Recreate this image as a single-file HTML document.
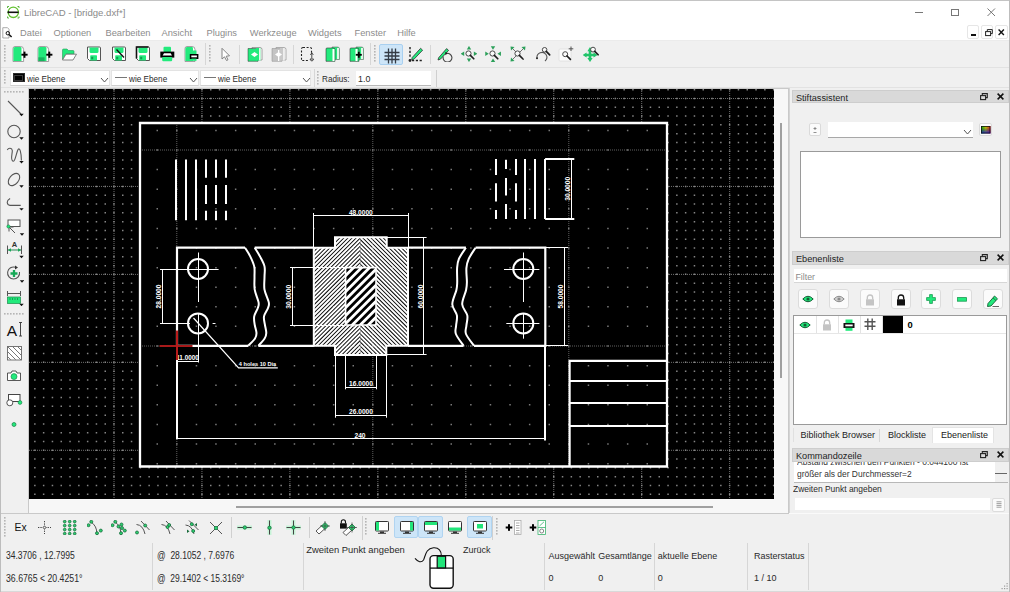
<!DOCTYPE html>
<html><head><meta charset="utf-8"><title>LibreCAD</title>
<style>
*{margin:0;padding:0;box-sizing:border-box}
html,body{width:1010px;height:592px;overflow:hidden;background:#f0f0f0;font-family:"Liberation Sans", sans-serif}
.t{position:absolute;white-space:nowrap}
.r{position:absolute}
svg{position:absolute;overflow:hidden}
</style></head><body>

<div class="r" style="left:0px;top:0px;width:1010px;height:41px;background:#ffffff"></div>
<div class="r" style="left:0px;top:40px;width:1010px;height:1px;background:#ebebeb"></div>
<div class="t" style="left:24.0px;top:8px;font-size:9.6px;line-height:10.723px;color:#8a8a8a;">LibreCAD - [bridge.dxf*]</div>
<div class="t" style="left:20.0px;top:28px;font-size:9.3px;line-height:10.388px;color:#8c8c8c;">Datei</div>
<div class="t" style="left:53.5px;top:28px;font-size:9.3px;line-height:10.388px;color:#8c8c8c;">Optionen</div>
<div class="t" style="left:105.5px;top:28px;font-size:9.3px;line-height:10.388px;color:#8c8c8c;">Bearbeiten</div>
<div class="t" style="left:161.5px;top:28px;font-size:9.3px;line-height:10.388px;color:#8c8c8c;">Ansicht</div>
<div class="t" style="left:206.5px;top:28px;font-size:9.3px;line-height:10.388px;color:#8c8c8c;">Plugins</div>
<div class="t" style="left:249.8px;top:28px;font-size:9.3px;line-height:10.388px;color:#8c8c8c;">Werkzeuge</div>
<div class="t" style="left:308.0px;top:28px;font-size:9.3px;line-height:10.388px;color:#8c8c8c;">Widgets</div>
<div class="t" style="left:354.5px;top:28px;font-size:9.3px;line-height:10.388px;color:#8c8c8c;">Fenster</div>
<div class="t" style="left:397.2px;top:28px;font-size:9.3px;line-height:10.388px;color:#8c8c8c;">Hilfe</div>
<div class="r" style="left:0px;top:41px;width:1010px;height:26px;background:#f0f0f0"></div>
<div class="r" style="left:0px;top:67px;width:1010px;height:1px;background:#e2e2e2"></div>
<div class="r" style="left:0px;top:68px;width:1010px;height:20px;background:#f0f0f0"></div>
<div class="r" style="left:0px;top:87px;width:1010px;height:1px;background:#e2e2e2"></div>
<div class="r" style="left:0px;top:88px;width:28px;height:425px;background:#f0f0f0"></div>
<div class="r" style="left:28px;top:88px;width:1px;height:425px;background:#c9c9c9"></div>
<div class="r" style="left:29px;top:88px;width:760px;height:1px;background:#c9c9c9"></div>
<svg style="left:29px;top:89px;" width="745" height="410" viewBox="29 89 745 410"><rect x="29" y="89" width="745" height="410" fill="#000"/><line x1="114.00" y1="89" x2="114.00" y2="499" stroke="#707070" stroke-width="1" stroke-dasharray="1 1"/><line x1="201.95" y1="89" x2="201.95" y2="499" stroke="#707070" stroke-width="1" stroke-dasharray="1 1"/><line x1="289.90" y1="89" x2="289.90" y2="499" stroke="#707070" stroke-width="1" stroke-dasharray="1 1"/><line x1="377.85" y1="89" x2="377.85" y2="499" stroke="#707070" stroke-width="1" stroke-dasharray="1 1"/><line x1="465.80" y1="89" x2="465.80" y2="499" stroke="#707070" stroke-width="1" stroke-dasharray="1 1"/><line x1="553.75" y1="89" x2="553.75" y2="499" stroke="#707070" stroke-width="1" stroke-dasharray="1 1"/><line x1="641.70" y1="89" x2="641.70" y2="499" stroke="#707070" stroke-width="1" stroke-dasharray="1 1"/><line x1="729.65" y1="89" x2="729.65" y2="499" stroke="#707070" stroke-width="1" stroke-dasharray="1 1"/><line x1="29" y1="98.50" x2="774" y2="98.50" stroke="#707070" stroke-width="1" stroke-dasharray="1 1"/><line x1="29" y1="186.45" x2="774" y2="186.45" stroke="#707070" stroke-width="1" stroke-dasharray="1 1"/><line x1="29" y1="274.40" x2="774" y2="274.40" stroke="#707070" stroke-width="1" stroke-dasharray="1 1"/><line x1="29" y1="362.35" x2="774" y2="362.35" stroke="#707070" stroke-width="1" stroke-dasharray="1 1"/><line x1="29" y1="450.30" x2="774" y2="450.30" stroke="#707070" stroke-width="1" stroke-dasharray="1 1"/><path d="M34.1,89.0h1.5v1.5h-1.5zM34.1,97.8h1.5v1.5h-1.5zM34.1,106.5h1.5v1.5h-1.5zM34.1,115.3h1.5v1.5h-1.5zM34.1,124.1h1.5v1.5h-1.5zM34.1,132.9h1.5v1.5h-1.5zM34.1,141.7h1.5v1.5h-1.5zM34.1,150.5h1.5v1.5h-1.5zM34.1,159.3h1.5v1.5h-1.5zM34.1,168.1h1.5v1.5h-1.5zM34.1,176.9h1.5v1.5h-1.5zM34.1,185.7h1.5v1.5h-1.5zM34.1,194.5h1.5v1.5h-1.5zM34.1,203.3h1.5v1.5h-1.5zM34.1,212.1h1.5v1.5h-1.5zM34.1,220.9h1.5v1.5h-1.5zM34.1,229.7h1.5v1.5h-1.5zM34.1,238.5h1.5v1.5h-1.5zM34.1,247.3h1.5v1.5h-1.5zM34.1,256.1h1.5v1.5h-1.5zM34.1,264.9h1.5v1.5h-1.5zM34.1,273.6h1.5v1.5h-1.5zM34.1,282.4h1.5v1.5h-1.5zM34.1,291.2h1.5v1.5h-1.5zM34.1,300.0h1.5v1.5h-1.5zM34.1,308.8h1.5v1.5h-1.5zM34.1,317.6h1.5v1.5h-1.5zM34.1,326.4h1.5v1.5h-1.5zM34.1,335.2h1.5v1.5h-1.5zM34.1,344.0h1.5v1.5h-1.5zM34.1,352.8h1.5v1.5h-1.5zM34.1,361.6h1.5v1.5h-1.5zM34.1,370.4h1.5v1.5h-1.5zM34.1,379.2h1.5v1.5h-1.5zM34.1,388.0h1.5v1.5h-1.5zM34.1,396.8h1.5v1.5h-1.5zM34.1,405.6h1.5v1.5h-1.5zM34.1,414.4h1.5v1.5h-1.5zM34.1,423.2h1.5v1.5h-1.5zM34.1,432.0h1.5v1.5h-1.5zM34.1,440.8h1.5v1.5h-1.5zM34.1,449.6h1.5v1.5h-1.5zM34.1,458.3h1.5v1.5h-1.5zM34.1,467.1h1.5v1.5h-1.5zM34.1,475.9h1.5v1.5h-1.5zM34.1,484.7h1.5v1.5h-1.5zM34.1,493.5h1.5v1.5h-1.5zM42.9,89.0h1.5v1.5h-1.5zM42.9,97.8h1.5v1.5h-1.5zM42.9,106.5h1.5v1.5h-1.5zM42.9,115.3h1.5v1.5h-1.5zM42.9,124.1h1.5v1.5h-1.5zM42.9,132.9h1.5v1.5h-1.5zM42.9,141.7h1.5v1.5h-1.5zM42.9,150.5h1.5v1.5h-1.5zM42.9,159.3h1.5v1.5h-1.5zM42.9,168.1h1.5v1.5h-1.5zM42.9,176.9h1.5v1.5h-1.5zM42.9,185.7h1.5v1.5h-1.5zM42.9,194.5h1.5v1.5h-1.5zM42.9,203.3h1.5v1.5h-1.5zM42.9,212.1h1.5v1.5h-1.5zM42.9,220.9h1.5v1.5h-1.5zM42.9,229.7h1.5v1.5h-1.5zM42.9,238.5h1.5v1.5h-1.5zM42.9,247.3h1.5v1.5h-1.5zM42.9,256.1h1.5v1.5h-1.5zM42.9,264.9h1.5v1.5h-1.5zM42.9,273.6h1.5v1.5h-1.5zM42.9,282.4h1.5v1.5h-1.5zM42.9,291.2h1.5v1.5h-1.5zM42.9,300.0h1.5v1.5h-1.5zM42.9,308.8h1.5v1.5h-1.5zM42.9,317.6h1.5v1.5h-1.5zM42.9,326.4h1.5v1.5h-1.5zM42.9,335.2h1.5v1.5h-1.5zM42.9,344.0h1.5v1.5h-1.5zM42.9,352.8h1.5v1.5h-1.5zM42.9,361.6h1.5v1.5h-1.5zM42.9,370.4h1.5v1.5h-1.5zM42.9,379.2h1.5v1.5h-1.5zM42.9,388.0h1.5v1.5h-1.5zM42.9,396.8h1.5v1.5h-1.5zM42.9,405.6h1.5v1.5h-1.5zM42.9,414.4h1.5v1.5h-1.5zM42.9,423.2h1.5v1.5h-1.5zM42.9,432.0h1.5v1.5h-1.5zM42.9,440.8h1.5v1.5h-1.5zM42.9,449.6h1.5v1.5h-1.5zM42.9,458.3h1.5v1.5h-1.5zM42.9,467.1h1.5v1.5h-1.5zM42.9,475.9h1.5v1.5h-1.5zM42.9,484.7h1.5v1.5h-1.5zM42.9,493.5h1.5v1.5h-1.5zM51.7,89.0h1.5v1.5h-1.5zM51.7,97.8h1.5v1.5h-1.5zM51.7,106.5h1.5v1.5h-1.5zM51.7,115.3h1.5v1.5h-1.5zM51.7,124.1h1.5v1.5h-1.5zM51.7,132.9h1.5v1.5h-1.5zM51.7,141.7h1.5v1.5h-1.5zM51.7,150.5h1.5v1.5h-1.5zM51.7,159.3h1.5v1.5h-1.5zM51.7,168.1h1.5v1.5h-1.5zM51.7,176.9h1.5v1.5h-1.5zM51.7,185.7h1.5v1.5h-1.5zM51.7,194.5h1.5v1.5h-1.5zM51.7,203.3h1.5v1.5h-1.5zM51.7,212.1h1.5v1.5h-1.5zM51.7,220.9h1.5v1.5h-1.5zM51.7,229.7h1.5v1.5h-1.5zM51.7,238.5h1.5v1.5h-1.5zM51.7,247.3h1.5v1.5h-1.5zM51.7,256.1h1.5v1.5h-1.5zM51.7,264.9h1.5v1.5h-1.5zM51.7,273.6h1.5v1.5h-1.5zM51.7,282.4h1.5v1.5h-1.5zM51.7,291.2h1.5v1.5h-1.5zM51.7,300.0h1.5v1.5h-1.5zM51.7,308.8h1.5v1.5h-1.5zM51.7,317.6h1.5v1.5h-1.5zM51.7,326.4h1.5v1.5h-1.5zM51.7,335.2h1.5v1.5h-1.5zM51.7,344.0h1.5v1.5h-1.5zM51.7,352.8h1.5v1.5h-1.5zM51.7,361.6h1.5v1.5h-1.5zM51.7,370.4h1.5v1.5h-1.5zM51.7,379.2h1.5v1.5h-1.5zM51.7,388.0h1.5v1.5h-1.5zM51.7,396.8h1.5v1.5h-1.5zM51.7,405.6h1.5v1.5h-1.5zM51.7,414.4h1.5v1.5h-1.5zM51.7,423.2h1.5v1.5h-1.5zM51.7,432.0h1.5v1.5h-1.5zM51.7,440.8h1.5v1.5h-1.5zM51.7,449.6h1.5v1.5h-1.5zM51.7,458.3h1.5v1.5h-1.5zM51.7,467.1h1.5v1.5h-1.5zM51.7,475.9h1.5v1.5h-1.5zM51.7,484.7h1.5v1.5h-1.5zM51.7,493.5h1.5v1.5h-1.5zM60.5,89.0h1.5v1.5h-1.5zM60.5,97.8h1.5v1.5h-1.5zM60.5,106.5h1.5v1.5h-1.5zM60.5,115.3h1.5v1.5h-1.5zM60.5,124.1h1.5v1.5h-1.5zM60.5,132.9h1.5v1.5h-1.5zM60.5,141.7h1.5v1.5h-1.5zM60.5,150.5h1.5v1.5h-1.5zM60.5,159.3h1.5v1.5h-1.5zM60.5,168.1h1.5v1.5h-1.5zM60.5,176.9h1.5v1.5h-1.5zM60.5,185.7h1.5v1.5h-1.5zM60.5,194.5h1.5v1.5h-1.5zM60.5,203.3h1.5v1.5h-1.5zM60.5,212.1h1.5v1.5h-1.5zM60.5,220.9h1.5v1.5h-1.5zM60.5,229.7h1.5v1.5h-1.5zM60.5,238.5h1.5v1.5h-1.5zM60.5,247.3h1.5v1.5h-1.5zM60.5,256.1h1.5v1.5h-1.5zM60.5,264.9h1.5v1.5h-1.5zM60.5,273.6h1.5v1.5h-1.5zM60.5,282.4h1.5v1.5h-1.5zM60.5,291.2h1.5v1.5h-1.5zM60.5,300.0h1.5v1.5h-1.5zM60.5,308.8h1.5v1.5h-1.5zM60.5,317.6h1.5v1.5h-1.5zM60.5,326.4h1.5v1.5h-1.5zM60.5,335.2h1.5v1.5h-1.5zM60.5,344.0h1.5v1.5h-1.5zM60.5,352.8h1.5v1.5h-1.5zM60.5,361.6h1.5v1.5h-1.5zM60.5,370.4h1.5v1.5h-1.5zM60.5,379.2h1.5v1.5h-1.5zM60.5,388.0h1.5v1.5h-1.5zM60.5,396.8h1.5v1.5h-1.5zM60.5,405.6h1.5v1.5h-1.5zM60.5,414.4h1.5v1.5h-1.5zM60.5,423.2h1.5v1.5h-1.5zM60.5,432.0h1.5v1.5h-1.5zM60.5,440.8h1.5v1.5h-1.5zM60.5,449.6h1.5v1.5h-1.5zM60.5,458.3h1.5v1.5h-1.5zM60.5,467.1h1.5v1.5h-1.5zM60.5,475.9h1.5v1.5h-1.5zM60.5,484.7h1.5v1.5h-1.5zM60.5,493.5h1.5v1.5h-1.5zM69.3,89.0h1.5v1.5h-1.5zM69.3,97.8h1.5v1.5h-1.5zM69.3,106.5h1.5v1.5h-1.5zM69.3,115.3h1.5v1.5h-1.5zM69.3,124.1h1.5v1.5h-1.5zM69.3,132.9h1.5v1.5h-1.5zM69.3,141.7h1.5v1.5h-1.5zM69.3,150.5h1.5v1.5h-1.5zM69.3,159.3h1.5v1.5h-1.5zM69.3,168.1h1.5v1.5h-1.5zM69.3,176.9h1.5v1.5h-1.5zM69.3,185.7h1.5v1.5h-1.5zM69.3,194.5h1.5v1.5h-1.5zM69.3,203.3h1.5v1.5h-1.5zM69.3,212.1h1.5v1.5h-1.5zM69.3,220.9h1.5v1.5h-1.5zM69.3,229.7h1.5v1.5h-1.5zM69.3,238.5h1.5v1.5h-1.5zM69.3,247.3h1.5v1.5h-1.5zM69.3,256.1h1.5v1.5h-1.5zM69.3,264.9h1.5v1.5h-1.5zM69.3,273.6h1.5v1.5h-1.5zM69.3,282.4h1.5v1.5h-1.5zM69.3,291.2h1.5v1.5h-1.5zM69.3,300.0h1.5v1.5h-1.5zM69.3,308.8h1.5v1.5h-1.5zM69.3,317.6h1.5v1.5h-1.5zM69.3,326.4h1.5v1.5h-1.5zM69.3,335.2h1.5v1.5h-1.5zM69.3,344.0h1.5v1.5h-1.5zM69.3,352.8h1.5v1.5h-1.5zM69.3,361.6h1.5v1.5h-1.5zM69.3,370.4h1.5v1.5h-1.5zM69.3,379.2h1.5v1.5h-1.5zM69.3,388.0h1.5v1.5h-1.5zM69.3,396.8h1.5v1.5h-1.5zM69.3,405.6h1.5v1.5h-1.5zM69.3,414.4h1.5v1.5h-1.5zM69.3,423.2h1.5v1.5h-1.5zM69.3,432.0h1.5v1.5h-1.5zM69.3,440.8h1.5v1.5h-1.5zM69.3,449.6h1.5v1.5h-1.5zM69.3,458.3h1.5v1.5h-1.5zM69.3,467.1h1.5v1.5h-1.5zM69.3,475.9h1.5v1.5h-1.5zM69.3,484.7h1.5v1.5h-1.5zM69.3,493.5h1.5v1.5h-1.5zM78.1,89.0h1.5v1.5h-1.5zM78.1,97.8h1.5v1.5h-1.5zM78.1,106.5h1.5v1.5h-1.5zM78.1,115.3h1.5v1.5h-1.5zM78.1,124.1h1.5v1.5h-1.5zM78.1,132.9h1.5v1.5h-1.5zM78.1,141.7h1.5v1.5h-1.5zM78.1,150.5h1.5v1.5h-1.5zM78.1,159.3h1.5v1.5h-1.5zM78.1,168.1h1.5v1.5h-1.5zM78.1,176.9h1.5v1.5h-1.5zM78.1,185.7h1.5v1.5h-1.5zM78.1,194.5h1.5v1.5h-1.5zM78.1,203.3h1.5v1.5h-1.5zM78.1,212.1h1.5v1.5h-1.5zM78.1,220.9h1.5v1.5h-1.5zM78.1,229.7h1.5v1.5h-1.5zM78.1,238.5h1.5v1.5h-1.5zM78.1,247.3h1.5v1.5h-1.5zM78.1,256.1h1.5v1.5h-1.5zM78.1,264.9h1.5v1.5h-1.5zM78.1,273.6h1.5v1.5h-1.5zM78.1,282.4h1.5v1.5h-1.5zM78.1,291.2h1.5v1.5h-1.5zM78.1,300.0h1.5v1.5h-1.5zM78.1,308.8h1.5v1.5h-1.5zM78.1,317.6h1.5v1.5h-1.5zM78.1,326.4h1.5v1.5h-1.5zM78.1,335.2h1.5v1.5h-1.5zM78.1,344.0h1.5v1.5h-1.5zM78.1,352.8h1.5v1.5h-1.5zM78.1,361.6h1.5v1.5h-1.5zM78.1,370.4h1.5v1.5h-1.5zM78.1,379.2h1.5v1.5h-1.5zM78.1,388.0h1.5v1.5h-1.5zM78.1,396.8h1.5v1.5h-1.5zM78.1,405.6h1.5v1.5h-1.5zM78.1,414.4h1.5v1.5h-1.5zM78.1,423.2h1.5v1.5h-1.5zM78.1,432.0h1.5v1.5h-1.5zM78.1,440.8h1.5v1.5h-1.5zM78.1,449.6h1.5v1.5h-1.5zM78.1,458.3h1.5v1.5h-1.5zM78.1,467.1h1.5v1.5h-1.5zM78.1,475.9h1.5v1.5h-1.5zM78.1,484.7h1.5v1.5h-1.5zM78.1,493.5h1.5v1.5h-1.5zM86.9,89.0h1.5v1.5h-1.5zM86.9,97.8h1.5v1.5h-1.5zM86.9,106.5h1.5v1.5h-1.5zM86.9,115.3h1.5v1.5h-1.5zM86.9,124.1h1.5v1.5h-1.5zM86.9,132.9h1.5v1.5h-1.5zM86.9,141.7h1.5v1.5h-1.5zM86.9,150.5h1.5v1.5h-1.5zM86.9,159.3h1.5v1.5h-1.5zM86.9,168.1h1.5v1.5h-1.5zM86.9,176.9h1.5v1.5h-1.5zM86.9,185.7h1.5v1.5h-1.5zM86.9,194.5h1.5v1.5h-1.5zM86.9,203.3h1.5v1.5h-1.5zM86.9,212.1h1.5v1.5h-1.5zM86.9,220.9h1.5v1.5h-1.5zM86.9,229.7h1.5v1.5h-1.5zM86.9,238.5h1.5v1.5h-1.5zM86.9,247.3h1.5v1.5h-1.5zM86.9,256.1h1.5v1.5h-1.5zM86.9,264.9h1.5v1.5h-1.5zM86.9,273.6h1.5v1.5h-1.5zM86.9,282.4h1.5v1.5h-1.5zM86.9,291.2h1.5v1.5h-1.5zM86.9,300.0h1.5v1.5h-1.5zM86.9,308.8h1.5v1.5h-1.5zM86.9,317.6h1.5v1.5h-1.5zM86.9,326.4h1.5v1.5h-1.5zM86.9,335.2h1.5v1.5h-1.5zM86.9,344.0h1.5v1.5h-1.5zM86.9,352.8h1.5v1.5h-1.5zM86.9,361.6h1.5v1.5h-1.5zM86.9,370.4h1.5v1.5h-1.5zM86.9,379.2h1.5v1.5h-1.5zM86.9,388.0h1.5v1.5h-1.5zM86.9,396.8h1.5v1.5h-1.5zM86.9,405.6h1.5v1.5h-1.5zM86.9,414.4h1.5v1.5h-1.5zM86.9,423.2h1.5v1.5h-1.5zM86.9,432.0h1.5v1.5h-1.5zM86.9,440.8h1.5v1.5h-1.5zM86.9,449.6h1.5v1.5h-1.5zM86.9,458.3h1.5v1.5h-1.5zM86.9,467.1h1.5v1.5h-1.5zM86.9,475.9h1.5v1.5h-1.5zM86.9,484.7h1.5v1.5h-1.5zM86.9,493.5h1.5v1.5h-1.5zM95.7,89.0h1.5v1.5h-1.5zM95.7,97.8h1.5v1.5h-1.5zM95.7,106.5h1.5v1.5h-1.5zM95.7,115.3h1.5v1.5h-1.5zM95.7,124.1h1.5v1.5h-1.5zM95.7,132.9h1.5v1.5h-1.5zM95.7,141.7h1.5v1.5h-1.5zM95.7,150.5h1.5v1.5h-1.5zM95.7,159.3h1.5v1.5h-1.5zM95.7,168.1h1.5v1.5h-1.5zM95.7,176.9h1.5v1.5h-1.5zM95.7,185.7h1.5v1.5h-1.5zM95.7,194.5h1.5v1.5h-1.5zM95.7,203.3h1.5v1.5h-1.5zM95.7,212.1h1.5v1.5h-1.5zM95.7,220.9h1.5v1.5h-1.5zM95.7,229.7h1.5v1.5h-1.5zM95.7,238.5h1.5v1.5h-1.5zM95.7,247.3h1.5v1.5h-1.5zM95.7,256.1h1.5v1.5h-1.5zM95.7,264.9h1.5v1.5h-1.5zM95.7,273.6h1.5v1.5h-1.5zM95.7,282.4h1.5v1.5h-1.5zM95.7,291.2h1.5v1.5h-1.5zM95.7,300.0h1.5v1.5h-1.5zM95.7,308.8h1.5v1.5h-1.5zM95.7,317.6h1.5v1.5h-1.5zM95.7,326.4h1.5v1.5h-1.5zM95.7,335.2h1.5v1.5h-1.5zM95.7,344.0h1.5v1.5h-1.5zM95.7,352.8h1.5v1.5h-1.5zM95.7,361.6h1.5v1.5h-1.5zM95.7,370.4h1.5v1.5h-1.5zM95.7,379.2h1.5v1.5h-1.5zM95.7,388.0h1.5v1.5h-1.5zM95.7,396.8h1.5v1.5h-1.5zM95.7,405.6h1.5v1.5h-1.5zM95.7,414.4h1.5v1.5h-1.5zM95.7,423.2h1.5v1.5h-1.5zM95.7,432.0h1.5v1.5h-1.5zM95.7,440.8h1.5v1.5h-1.5zM95.7,449.6h1.5v1.5h-1.5zM95.7,458.3h1.5v1.5h-1.5zM95.7,467.1h1.5v1.5h-1.5zM95.7,475.9h1.5v1.5h-1.5zM95.7,484.7h1.5v1.5h-1.5zM95.7,493.5h1.5v1.5h-1.5zM104.5,89.0h1.5v1.5h-1.5zM104.5,97.8h1.5v1.5h-1.5zM104.5,106.5h1.5v1.5h-1.5zM104.5,115.3h1.5v1.5h-1.5zM104.5,124.1h1.5v1.5h-1.5zM104.5,132.9h1.5v1.5h-1.5zM104.5,141.7h1.5v1.5h-1.5zM104.5,150.5h1.5v1.5h-1.5zM104.5,159.3h1.5v1.5h-1.5zM104.5,168.1h1.5v1.5h-1.5zM104.5,176.9h1.5v1.5h-1.5zM104.5,185.7h1.5v1.5h-1.5zM104.5,194.5h1.5v1.5h-1.5zM104.5,203.3h1.5v1.5h-1.5zM104.5,212.1h1.5v1.5h-1.5zM104.5,220.9h1.5v1.5h-1.5zM104.5,229.7h1.5v1.5h-1.5zM104.5,238.5h1.5v1.5h-1.5zM104.5,247.3h1.5v1.5h-1.5zM104.5,256.1h1.5v1.5h-1.5zM104.5,264.9h1.5v1.5h-1.5zM104.5,273.6h1.5v1.5h-1.5zM104.5,282.4h1.5v1.5h-1.5zM104.5,291.2h1.5v1.5h-1.5zM104.5,300.0h1.5v1.5h-1.5zM104.5,308.8h1.5v1.5h-1.5zM104.5,317.6h1.5v1.5h-1.5zM104.5,326.4h1.5v1.5h-1.5zM104.5,335.2h1.5v1.5h-1.5zM104.5,344.0h1.5v1.5h-1.5zM104.5,352.8h1.5v1.5h-1.5zM104.5,361.6h1.5v1.5h-1.5zM104.5,370.4h1.5v1.5h-1.5zM104.5,379.2h1.5v1.5h-1.5zM104.5,388.0h1.5v1.5h-1.5zM104.5,396.8h1.5v1.5h-1.5zM104.5,405.6h1.5v1.5h-1.5zM104.5,414.4h1.5v1.5h-1.5zM104.5,423.2h1.5v1.5h-1.5zM104.5,432.0h1.5v1.5h-1.5zM104.5,440.8h1.5v1.5h-1.5zM104.5,449.6h1.5v1.5h-1.5zM104.5,458.3h1.5v1.5h-1.5zM104.5,467.1h1.5v1.5h-1.5zM104.5,475.9h1.5v1.5h-1.5zM104.5,484.7h1.5v1.5h-1.5zM104.5,493.5h1.5v1.5h-1.5zM113.2,89.0h1.5v1.5h-1.5zM113.2,97.8h1.5v1.5h-1.5zM113.2,106.5h1.5v1.5h-1.5zM113.2,115.3h1.5v1.5h-1.5zM113.2,124.1h1.5v1.5h-1.5zM113.2,132.9h1.5v1.5h-1.5zM113.2,141.7h1.5v1.5h-1.5zM113.2,150.5h1.5v1.5h-1.5zM113.2,159.3h1.5v1.5h-1.5zM113.2,168.1h1.5v1.5h-1.5zM113.2,176.9h1.5v1.5h-1.5zM113.2,185.7h1.5v1.5h-1.5zM113.2,194.5h1.5v1.5h-1.5zM113.2,203.3h1.5v1.5h-1.5zM113.2,212.1h1.5v1.5h-1.5zM113.2,220.9h1.5v1.5h-1.5zM113.2,229.7h1.5v1.5h-1.5zM113.2,238.5h1.5v1.5h-1.5zM113.2,247.3h1.5v1.5h-1.5zM113.2,256.1h1.5v1.5h-1.5zM113.2,264.9h1.5v1.5h-1.5zM113.2,273.6h1.5v1.5h-1.5zM113.2,282.4h1.5v1.5h-1.5zM113.2,291.2h1.5v1.5h-1.5zM113.2,300.0h1.5v1.5h-1.5zM113.2,308.8h1.5v1.5h-1.5zM113.2,317.6h1.5v1.5h-1.5zM113.2,326.4h1.5v1.5h-1.5zM113.2,335.2h1.5v1.5h-1.5zM113.2,344.0h1.5v1.5h-1.5zM113.2,352.8h1.5v1.5h-1.5zM113.2,361.6h1.5v1.5h-1.5zM113.2,370.4h1.5v1.5h-1.5zM113.2,379.2h1.5v1.5h-1.5zM113.2,388.0h1.5v1.5h-1.5zM113.2,396.8h1.5v1.5h-1.5zM113.2,405.6h1.5v1.5h-1.5zM113.2,414.4h1.5v1.5h-1.5zM113.2,423.2h1.5v1.5h-1.5zM113.2,432.0h1.5v1.5h-1.5zM113.2,440.8h1.5v1.5h-1.5zM113.2,449.6h1.5v1.5h-1.5zM113.2,458.3h1.5v1.5h-1.5zM113.2,467.1h1.5v1.5h-1.5zM113.2,475.9h1.5v1.5h-1.5zM113.2,484.7h1.5v1.5h-1.5zM113.2,493.5h1.5v1.5h-1.5zM122.0,89.0h1.5v1.5h-1.5zM122.0,97.8h1.5v1.5h-1.5zM122.0,106.5h1.5v1.5h-1.5zM122.0,115.3h1.5v1.5h-1.5zM122.0,124.1h1.5v1.5h-1.5zM122.0,132.9h1.5v1.5h-1.5zM122.0,141.7h1.5v1.5h-1.5zM122.0,150.5h1.5v1.5h-1.5zM122.0,159.3h1.5v1.5h-1.5zM122.0,168.1h1.5v1.5h-1.5zM122.0,176.9h1.5v1.5h-1.5zM122.0,185.7h1.5v1.5h-1.5zM122.0,194.5h1.5v1.5h-1.5zM122.0,203.3h1.5v1.5h-1.5zM122.0,212.1h1.5v1.5h-1.5zM122.0,220.9h1.5v1.5h-1.5zM122.0,229.7h1.5v1.5h-1.5zM122.0,238.5h1.5v1.5h-1.5zM122.0,247.3h1.5v1.5h-1.5zM122.0,256.1h1.5v1.5h-1.5zM122.0,264.9h1.5v1.5h-1.5zM122.0,273.6h1.5v1.5h-1.5zM122.0,282.4h1.5v1.5h-1.5zM122.0,291.2h1.5v1.5h-1.5zM122.0,300.0h1.5v1.5h-1.5zM122.0,308.8h1.5v1.5h-1.5zM122.0,317.6h1.5v1.5h-1.5zM122.0,326.4h1.5v1.5h-1.5zM122.0,335.2h1.5v1.5h-1.5zM122.0,344.0h1.5v1.5h-1.5zM122.0,352.8h1.5v1.5h-1.5zM122.0,361.6h1.5v1.5h-1.5zM122.0,370.4h1.5v1.5h-1.5zM122.0,379.2h1.5v1.5h-1.5zM122.0,388.0h1.5v1.5h-1.5zM122.0,396.8h1.5v1.5h-1.5zM122.0,405.6h1.5v1.5h-1.5zM122.0,414.4h1.5v1.5h-1.5zM122.0,423.2h1.5v1.5h-1.5zM122.0,432.0h1.5v1.5h-1.5zM122.0,440.8h1.5v1.5h-1.5zM122.0,449.6h1.5v1.5h-1.5zM122.0,458.3h1.5v1.5h-1.5zM122.0,467.1h1.5v1.5h-1.5zM122.0,475.9h1.5v1.5h-1.5zM122.0,484.7h1.5v1.5h-1.5zM122.0,493.5h1.5v1.5h-1.5zM130.8,89.0h1.5v1.5h-1.5zM130.8,97.8h1.5v1.5h-1.5zM130.8,106.5h1.5v1.5h-1.5zM130.8,115.3h1.5v1.5h-1.5zM130.8,124.1h1.5v1.5h-1.5zM130.8,132.9h1.5v1.5h-1.5zM130.8,141.7h1.5v1.5h-1.5zM130.8,150.5h1.5v1.5h-1.5zM130.8,159.3h1.5v1.5h-1.5zM130.8,168.1h1.5v1.5h-1.5zM130.8,176.9h1.5v1.5h-1.5zM130.8,185.7h1.5v1.5h-1.5zM130.8,194.5h1.5v1.5h-1.5zM130.8,203.3h1.5v1.5h-1.5zM130.8,212.1h1.5v1.5h-1.5zM130.8,220.9h1.5v1.5h-1.5zM130.8,229.7h1.5v1.5h-1.5zM130.8,238.5h1.5v1.5h-1.5zM130.8,247.3h1.5v1.5h-1.5zM130.8,256.1h1.5v1.5h-1.5zM130.8,264.9h1.5v1.5h-1.5zM130.8,273.6h1.5v1.5h-1.5zM130.8,282.4h1.5v1.5h-1.5zM130.8,291.2h1.5v1.5h-1.5zM130.8,300.0h1.5v1.5h-1.5zM130.8,308.8h1.5v1.5h-1.5zM130.8,317.6h1.5v1.5h-1.5zM130.8,326.4h1.5v1.5h-1.5zM130.8,335.2h1.5v1.5h-1.5zM130.8,344.0h1.5v1.5h-1.5zM130.8,352.8h1.5v1.5h-1.5zM130.8,361.6h1.5v1.5h-1.5zM130.8,370.4h1.5v1.5h-1.5zM130.8,379.2h1.5v1.5h-1.5zM130.8,388.0h1.5v1.5h-1.5zM130.8,396.8h1.5v1.5h-1.5zM130.8,405.6h1.5v1.5h-1.5zM130.8,414.4h1.5v1.5h-1.5zM130.8,423.2h1.5v1.5h-1.5zM130.8,432.0h1.5v1.5h-1.5zM130.8,440.8h1.5v1.5h-1.5zM130.8,449.6h1.5v1.5h-1.5zM130.8,458.3h1.5v1.5h-1.5zM130.8,467.1h1.5v1.5h-1.5zM130.8,475.9h1.5v1.5h-1.5zM130.8,484.7h1.5v1.5h-1.5zM130.8,493.5h1.5v1.5h-1.5zM139.6,89.0h1.5v1.5h-1.5zM139.6,97.8h1.5v1.5h-1.5zM139.6,106.5h1.5v1.5h-1.5zM139.6,115.3h1.5v1.5h-1.5zM139.6,124.1h1.5v1.5h-1.5zM139.6,132.9h1.5v1.5h-1.5zM139.6,141.7h1.5v1.5h-1.5zM139.6,150.5h1.5v1.5h-1.5zM139.6,159.3h1.5v1.5h-1.5zM139.6,168.1h1.5v1.5h-1.5zM139.6,176.9h1.5v1.5h-1.5zM139.6,185.7h1.5v1.5h-1.5zM139.6,194.5h1.5v1.5h-1.5zM139.6,203.3h1.5v1.5h-1.5zM139.6,212.1h1.5v1.5h-1.5zM139.6,220.9h1.5v1.5h-1.5zM139.6,229.7h1.5v1.5h-1.5zM139.6,238.5h1.5v1.5h-1.5zM139.6,247.3h1.5v1.5h-1.5zM139.6,256.1h1.5v1.5h-1.5zM139.6,264.9h1.5v1.5h-1.5zM139.6,273.6h1.5v1.5h-1.5zM139.6,282.4h1.5v1.5h-1.5zM139.6,291.2h1.5v1.5h-1.5zM139.6,300.0h1.5v1.5h-1.5zM139.6,308.8h1.5v1.5h-1.5zM139.6,317.6h1.5v1.5h-1.5zM139.6,326.4h1.5v1.5h-1.5zM139.6,335.2h1.5v1.5h-1.5zM139.6,344.0h1.5v1.5h-1.5zM139.6,352.8h1.5v1.5h-1.5zM139.6,361.6h1.5v1.5h-1.5zM139.6,370.4h1.5v1.5h-1.5zM139.6,379.2h1.5v1.5h-1.5zM139.6,388.0h1.5v1.5h-1.5zM139.6,396.8h1.5v1.5h-1.5zM139.6,405.6h1.5v1.5h-1.5zM139.6,414.4h1.5v1.5h-1.5zM139.6,423.2h1.5v1.5h-1.5zM139.6,432.0h1.5v1.5h-1.5zM139.6,440.8h1.5v1.5h-1.5zM139.6,449.6h1.5v1.5h-1.5zM139.6,458.3h1.5v1.5h-1.5zM139.6,467.1h1.5v1.5h-1.5zM139.6,475.9h1.5v1.5h-1.5zM139.6,484.7h1.5v1.5h-1.5zM139.6,493.5h1.5v1.5h-1.5zM148.4,89.0h1.5v1.5h-1.5zM148.4,97.8h1.5v1.5h-1.5zM148.4,106.5h1.5v1.5h-1.5zM148.4,115.3h1.5v1.5h-1.5zM148.4,124.1h1.5v1.5h-1.5zM148.4,132.9h1.5v1.5h-1.5zM148.4,141.7h1.5v1.5h-1.5zM148.4,150.5h1.5v1.5h-1.5zM148.4,159.3h1.5v1.5h-1.5zM148.4,168.1h1.5v1.5h-1.5zM148.4,176.9h1.5v1.5h-1.5zM148.4,185.7h1.5v1.5h-1.5zM148.4,194.5h1.5v1.5h-1.5zM148.4,203.3h1.5v1.5h-1.5zM148.4,212.1h1.5v1.5h-1.5zM148.4,220.9h1.5v1.5h-1.5zM148.4,229.7h1.5v1.5h-1.5zM148.4,238.5h1.5v1.5h-1.5zM148.4,247.3h1.5v1.5h-1.5zM148.4,256.1h1.5v1.5h-1.5zM148.4,264.9h1.5v1.5h-1.5zM148.4,273.6h1.5v1.5h-1.5zM148.4,282.4h1.5v1.5h-1.5zM148.4,291.2h1.5v1.5h-1.5zM148.4,300.0h1.5v1.5h-1.5zM148.4,308.8h1.5v1.5h-1.5zM148.4,317.6h1.5v1.5h-1.5zM148.4,326.4h1.5v1.5h-1.5zM148.4,335.2h1.5v1.5h-1.5zM148.4,344.0h1.5v1.5h-1.5zM148.4,352.8h1.5v1.5h-1.5zM148.4,361.6h1.5v1.5h-1.5zM148.4,370.4h1.5v1.5h-1.5zM148.4,379.2h1.5v1.5h-1.5zM148.4,388.0h1.5v1.5h-1.5zM148.4,396.8h1.5v1.5h-1.5zM148.4,405.6h1.5v1.5h-1.5zM148.4,414.4h1.5v1.5h-1.5zM148.4,423.2h1.5v1.5h-1.5zM148.4,432.0h1.5v1.5h-1.5zM148.4,440.8h1.5v1.5h-1.5zM148.4,449.6h1.5v1.5h-1.5zM148.4,458.3h1.5v1.5h-1.5zM148.4,467.1h1.5v1.5h-1.5zM148.4,475.9h1.5v1.5h-1.5zM148.4,484.7h1.5v1.5h-1.5zM148.4,493.5h1.5v1.5h-1.5zM157.2,89.0h1.5v1.5h-1.5zM157.2,97.8h1.5v1.5h-1.5zM157.2,106.5h1.5v1.5h-1.5zM157.2,115.3h1.5v1.5h-1.5zM157.2,124.1h1.5v1.5h-1.5zM157.2,132.9h1.5v1.5h-1.5zM157.2,141.7h1.5v1.5h-1.5zM157.2,150.5h1.5v1.5h-1.5zM157.2,159.3h1.5v1.5h-1.5zM157.2,168.1h1.5v1.5h-1.5zM157.2,176.9h1.5v1.5h-1.5zM157.2,185.7h1.5v1.5h-1.5zM157.2,194.5h1.5v1.5h-1.5zM157.2,203.3h1.5v1.5h-1.5zM157.2,212.1h1.5v1.5h-1.5zM157.2,220.9h1.5v1.5h-1.5zM157.2,229.7h1.5v1.5h-1.5zM157.2,238.5h1.5v1.5h-1.5zM157.2,247.3h1.5v1.5h-1.5zM157.2,256.1h1.5v1.5h-1.5zM157.2,264.9h1.5v1.5h-1.5zM157.2,273.6h1.5v1.5h-1.5zM157.2,282.4h1.5v1.5h-1.5zM157.2,291.2h1.5v1.5h-1.5zM157.2,300.0h1.5v1.5h-1.5zM157.2,308.8h1.5v1.5h-1.5zM157.2,317.6h1.5v1.5h-1.5zM157.2,326.4h1.5v1.5h-1.5zM157.2,335.2h1.5v1.5h-1.5zM157.2,344.0h1.5v1.5h-1.5zM157.2,352.8h1.5v1.5h-1.5zM157.2,361.6h1.5v1.5h-1.5zM157.2,370.4h1.5v1.5h-1.5zM157.2,379.2h1.5v1.5h-1.5zM157.2,388.0h1.5v1.5h-1.5zM157.2,396.8h1.5v1.5h-1.5zM157.2,405.6h1.5v1.5h-1.5zM157.2,414.4h1.5v1.5h-1.5zM157.2,423.2h1.5v1.5h-1.5zM157.2,432.0h1.5v1.5h-1.5zM157.2,440.8h1.5v1.5h-1.5zM157.2,449.6h1.5v1.5h-1.5zM157.2,458.3h1.5v1.5h-1.5zM157.2,467.1h1.5v1.5h-1.5zM157.2,475.9h1.5v1.5h-1.5zM157.2,484.7h1.5v1.5h-1.5zM157.2,493.5h1.5v1.5h-1.5zM166.0,89.0h1.5v1.5h-1.5zM166.0,97.8h1.5v1.5h-1.5zM166.0,106.5h1.5v1.5h-1.5zM166.0,115.3h1.5v1.5h-1.5zM166.0,124.1h1.5v1.5h-1.5zM166.0,132.9h1.5v1.5h-1.5zM166.0,141.7h1.5v1.5h-1.5zM166.0,150.5h1.5v1.5h-1.5zM166.0,159.3h1.5v1.5h-1.5zM166.0,168.1h1.5v1.5h-1.5zM166.0,176.9h1.5v1.5h-1.5zM166.0,185.7h1.5v1.5h-1.5zM166.0,194.5h1.5v1.5h-1.5zM166.0,203.3h1.5v1.5h-1.5zM166.0,212.1h1.5v1.5h-1.5zM166.0,220.9h1.5v1.5h-1.5zM166.0,229.7h1.5v1.5h-1.5zM166.0,238.5h1.5v1.5h-1.5zM166.0,247.3h1.5v1.5h-1.5zM166.0,256.1h1.5v1.5h-1.5zM166.0,264.9h1.5v1.5h-1.5zM166.0,273.6h1.5v1.5h-1.5zM166.0,282.4h1.5v1.5h-1.5zM166.0,291.2h1.5v1.5h-1.5zM166.0,300.0h1.5v1.5h-1.5zM166.0,308.8h1.5v1.5h-1.5zM166.0,317.6h1.5v1.5h-1.5zM166.0,326.4h1.5v1.5h-1.5zM166.0,335.2h1.5v1.5h-1.5zM166.0,344.0h1.5v1.5h-1.5zM166.0,352.8h1.5v1.5h-1.5zM166.0,361.6h1.5v1.5h-1.5zM166.0,370.4h1.5v1.5h-1.5zM166.0,379.2h1.5v1.5h-1.5zM166.0,388.0h1.5v1.5h-1.5zM166.0,396.8h1.5v1.5h-1.5zM166.0,405.6h1.5v1.5h-1.5zM166.0,414.4h1.5v1.5h-1.5zM166.0,423.2h1.5v1.5h-1.5zM166.0,432.0h1.5v1.5h-1.5zM166.0,440.8h1.5v1.5h-1.5zM166.0,449.6h1.5v1.5h-1.5zM166.0,458.3h1.5v1.5h-1.5zM166.0,467.1h1.5v1.5h-1.5zM166.0,475.9h1.5v1.5h-1.5zM166.0,484.7h1.5v1.5h-1.5zM166.0,493.5h1.5v1.5h-1.5zM174.8,89.0h1.5v1.5h-1.5zM174.8,97.8h1.5v1.5h-1.5zM174.8,106.5h1.5v1.5h-1.5zM174.8,115.3h1.5v1.5h-1.5zM174.8,124.1h1.5v1.5h-1.5zM174.8,132.9h1.5v1.5h-1.5zM174.8,141.7h1.5v1.5h-1.5zM174.8,150.5h1.5v1.5h-1.5zM174.8,159.3h1.5v1.5h-1.5zM174.8,168.1h1.5v1.5h-1.5zM174.8,176.9h1.5v1.5h-1.5zM174.8,185.7h1.5v1.5h-1.5zM174.8,194.5h1.5v1.5h-1.5zM174.8,203.3h1.5v1.5h-1.5zM174.8,212.1h1.5v1.5h-1.5zM174.8,220.9h1.5v1.5h-1.5zM174.8,229.7h1.5v1.5h-1.5zM174.8,238.5h1.5v1.5h-1.5zM174.8,247.3h1.5v1.5h-1.5zM174.8,256.1h1.5v1.5h-1.5zM174.8,264.9h1.5v1.5h-1.5zM174.8,273.6h1.5v1.5h-1.5zM174.8,282.4h1.5v1.5h-1.5zM174.8,291.2h1.5v1.5h-1.5zM174.8,300.0h1.5v1.5h-1.5zM174.8,308.8h1.5v1.5h-1.5zM174.8,317.6h1.5v1.5h-1.5zM174.8,326.4h1.5v1.5h-1.5zM174.8,335.2h1.5v1.5h-1.5zM174.8,344.0h1.5v1.5h-1.5zM174.8,352.8h1.5v1.5h-1.5zM174.8,361.6h1.5v1.5h-1.5zM174.8,370.4h1.5v1.5h-1.5zM174.8,379.2h1.5v1.5h-1.5zM174.8,388.0h1.5v1.5h-1.5zM174.8,396.8h1.5v1.5h-1.5zM174.8,405.6h1.5v1.5h-1.5zM174.8,414.4h1.5v1.5h-1.5zM174.8,423.2h1.5v1.5h-1.5zM174.8,432.0h1.5v1.5h-1.5zM174.8,440.8h1.5v1.5h-1.5zM174.8,449.6h1.5v1.5h-1.5zM174.8,458.3h1.5v1.5h-1.5zM174.8,467.1h1.5v1.5h-1.5zM174.8,475.9h1.5v1.5h-1.5zM174.8,484.7h1.5v1.5h-1.5zM174.8,493.5h1.5v1.5h-1.5zM183.6,89.0h1.5v1.5h-1.5zM183.6,97.8h1.5v1.5h-1.5zM183.6,106.5h1.5v1.5h-1.5zM183.6,115.3h1.5v1.5h-1.5zM183.6,124.1h1.5v1.5h-1.5zM183.6,132.9h1.5v1.5h-1.5zM183.6,141.7h1.5v1.5h-1.5zM183.6,150.5h1.5v1.5h-1.5zM183.6,159.3h1.5v1.5h-1.5zM183.6,168.1h1.5v1.5h-1.5zM183.6,176.9h1.5v1.5h-1.5zM183.6,185.7h1.5v1.5h-1.5zM183.6,194.5h1.5v1.5h-1.5zM183.6,203.3h1.5v1.5h-1.5zM183.6,212.1h1.5v1.5h-1.5zM183.6,220.9h1.5v1.5h-1.5zM183.6,229.7h1.5v1.5h-1.5zM183.6,238.5h1.5v1.5h-1.5zM183.6,247.3h1.5v1.5h-1.5zM183.6,256.1h1.5v1.5h-1.5zM183.6,264.9h1.5v1.5h-1.5zM183.6,273.6h1.5v1.5h-1.5zM183.6,282.4h1.5v1.5h-1.5zM183.6,291.2h1.5v1.5h-1.5zM183.6,300.0h1.5v1.5h-1.5zM183.6,308.8h1.5v1.5h-1.5zM183.6,317.6h1.5v1.5h-1.5zM183.6,326.4h1.5v1.5h-1.5zM183.6,335.2h1.5v1.5h-1.5zM183.6,344.0h1.5v1.5h-1.5zM183.6,352.8h1.5v1.5h-1.5zM183.6,361.6h1.5v1.5h-1.5zM183.6,370.4h1.5v1.5h-1.5zM183.6,379.2h1.5v1.5h-1.5zM183.6,388.0h1.5v1.5h-1.5zM183.6,396.8h1.5v1.5h-1.5zM183.6,405.6h1.5v1.5h-1.5zM183.6,414.4h1.5v1.5h-1.5zM183.6,423.2h1.5v1.5h-1.5zM183.6,432.0h1.5v1.5h-1.5zM183.6,440.8h1.5v1.5h-1.5zM183.6,449.6h1.5v1.5h-1.5zM183.6,458.3h1.5v1.5h-1.5zM183.6,467.1h1.5v1.5h-1.5zM183.6,475.9h1.5v1.5h-1.5zM183.6,484.7h1.5v1.5h-1.5zM183.6,493.5h1.5v1.5h-1.5zM192.4,89.0h1.5v1.5h-1.5zM192.4,97.8h1.5v1.5h-1.5zM192.4,106.5h1.5v1.5h-1.5zM192.4,115.3h1.5v1.5h-1.5zM192.4,124.1h1.5v1.5h-1.5zM192.4,132.9h1.5v1.5h-1.5zM192.4,141.7h1.5v1.5h-1.5zM192.4,150.5h1.5v1.5h-1.5zM192.4,159.3h1.5v1.5h-1.5zM192.4,168.1h1.5v1.5h-1.5zM192.4,176.9h1.5v1.5h-1.5zM192.4,185.7h1.5v1.5h-1.5zM192.4,194.5h1.5v1.5h-1.5zM192.4,203.3h1.5v1.5h-1.5zM192.4,212.1h1.5v1.5h-1.5zM192.4,220.9h1.5v1.5h-1.5zM192.4,229.7h1.5v1.5h-1.5zM192.4,238.5h1.5v1.5h-1.5zM192.4,247.3h1.5v1.5h-1.5zM192.4,256.1h1.5v1.5h-1.5zM192.4,264.9h1.5v1.5h-1.5zM192.4,273.6h1.5v1.5h-1.5zM192.4,282.4h1.5v1.5h-1.5zM192.4,291.2h1.5v1.5h-1.5zM192.4,300.0h1.5v1.5h-1.5zM192.4,308.8h1.5v1.5h-1.5zM192.4,317.6h1.5v1.5h-1.5zM192.4,326.4h1.5v1.5h-1.5zM192.4,335.2h1.5v1.5h-1.5zM192.4,344.0h1.5v1.5h-1.5zM192.4,352.8h1.5v1.5h-1.5zM192.4,361.6h1.5v1.5h-1.5zM192.4,370.4h1.5v1.5h-1.5zM192.4,379.2h1.5v1.5h-1.5zM192.4,388.0h1.5v1.5h-1.5zM192.4,396.8h1.5v1.5h-1.5zM192.4,405.6h1.5v1.5h-1.5zM192.4,414.4h1.5v1.5h-1.5zM192.4,423.2h1.5v1.5h-1.5zM192.4,432.0h1.5v1.5h-1.5zM192.4,440.8h1.5v1.5h-1.5zM192.4,449.6h1.5v1.5h-1.5zM192.4,458.3h1.5v1.5h-1.5zM192.4,467.1h1.5v1.5h-1.5zM192.4,475.9h1.5v1.5h-1.5zM192.4,484.7h1.5v1.5h-1.5zM192.4,493.5h1.5v1.5h-1.5zM201.2,89.0h1.5v1.5h-1.5zM201.2,97.8h1.5v1.5h-1.5zM201.2,106.5h1.5v1.5h-1.5zM201.2,115.3h1.5v1.5h-1.5zM201.2,124.1h1.5v1.5h-1.5zM201.2,132.9h1.5v1.5h-1.5zM201.2,141.7h1.5v1.5h-1.5zM201.2,150.5h1.5v1.5h-1.5zM201.2,159.3h1.5v1.5h-1.5zM201.2,168.1h1.5v1.5h-1.5zM201.2,176.9h1.5v1.5h-1.5zM201.2,185.7h1.5v1.5h-1.5zM201.2,194.5h1.5v1.5h-1.5zM201.2,203.3h1.5v1.5h-1.5zM201.2,212.1h1.5v1.5h-1.5zM201.2,220.9h1.5v1.5h-1.5zM201.2,229.7h1.5v1.5h-1.5zM201.2,238.5h1.5v1.5h-1.5zM201.2,247.3h1.5v1.5h-1.5zM201.2,256.1h1.5v1.5h-1.5zM201.2,264.9h1.5v1.5h-1.5zM201.2,273.6h1.5v1.5h-1.5zM201.2,282.4h1.5v1.5h-1.5zM201.2,291.2h1.5v1.5h-1.5zM201.2,300.0h1.5v1.5h-1.5zM201.2,308.8h1.5v1.5h-1.5zM201.2,317.6h1.5v1.5h-1.5zM201.2,326.4h1.5v1.5h-1.5zM201.2,335.2h1.5v1.5h-1.5zM201.2,344.0h1.5v1.5h-1.5zM201.2,352.8h1.5v1.5h-1.5zM201.2,361.6h1.5v1.5h-1.5zM201.2,370.4h1.5v1.5h-1.5zM201.2,379.2h1.5v1.5h-1.5zM201.2,388.0h1.5v1.5h-1.5zM201.2,396.8h1.5v1.5h-1.5zM201.2,405.6h1.5v1.5h-1.5zM201.2,414.4h1.5v1.5h-1.5zM201.2,423.2h1.5v1.5h-1.5zM201.2,432.0h1.5v1.5h-1.5zM201.2,440.8h1.5v1.5h-1.5zM201.2,449.6h1.5v1.5h-1.5zM201.2,458.3h1.5v1.5h-1.5zM201.2,467.1h1.5v1.5h-1.5zM201.2,475.9h1.5v1.5h-1.5zM201.2,484.7h1.5v1.5h-1.5zM201.2,493.5h1.5v1.5h-1.5zM210.0,89.0h1.5v1.5h-1.5zM210.0,97.8h1.5v1.5h-1.5zM210.0,106.5h1.5v1.5h-1.5zM210.0,115.3h1.5v1.5h-1.5zM210.0,124.1h1.5v1.5h-1.5zM210.0,132.9h1.5v1.5h-1.5zM210.0,141.7h1.5v1.5h-1.5zM210.0,150.5h1.5v1.5h-1.5zM210.0,159.3h1.5v1.5h-1.5zM210.0,168.1h1.5v1.5h-1.5zM210.0,176.9h1.5v1.5h-1.5zM210.0,185.7h1.5v1.5h-1.5zM210.0,194.5h1.5v1.5h-1.5zM210.0,203.3h1.5v1.5h-1.5zM210.0,212.1h1.5v1.5h-1.5zM210.0,220.9h1.5v1.5h-1.5zM210.0,229.7h1.5v1.5h-1.5zM210.0,238.5h1.5v1.5h-1.5zM210.0,247.3h1.5v1.5h-1.5zM210.0,256.1h1.5v1.5h-1.5zM210.0,264.9h1.5v1.5h-1.5zM210.0,273.6h1.5v1.5h-1.5zM210.0,282.4h1.5v1.5h-1.5zM210.0,291.2h1.5v1.5h-1.5zM210.0,300.0h1.5v1.5h-1.5zM210.0,308.8h1.5v1.5h-1.5zM210.0,317.6h1.5v1.5h-1.5zM210.0,326.4h1.5v1.5h-1.5zM210.0,335.2h1.5v1.5h-1.5zM210.0,344.0h1.5v1.5h-1.5zM210.0,352.8h1.5v1.5h-1.5zM210.0,361.6h1.5v1.5h-1.5zM210.0,370.4h1.5v1.5h-1.5zM210.0,379.2h1.5v1.5h-1.5zM210.0,388.0h1.5v1.5h-1.5zM210.0,396.8h1.5v1.5h-1.5zM210.0,405.6h1.5v1.5h-1.5zM210.0,414.4h1.5v1.5h-1.5zM210.0,423.2h1.5v1.5h-1.5zM210.0,432.0h1.5v1.5h-1.5zM210.0,440.8h1.5v1.5h-1.5zM210.0,449.6h1.5v1.5h-1.5zM210.0,458.3h1.5v1.5h-1.5zM210.0,467.1h1.5v1.5h-1.5zM210.0,475.9h1.5v1.5h-1.5zM210.0,484.7h1.5v1.5h-1.5zM210.0,493.5h1.5v1.5h-1.5zM218.8,89.0h1.5v1.5h-1.5zM218.8,97.8h1.5v1.5h-1.5zM218.8,106.5h1.5v1.5h-1.5zM218.8,115.3h1.5v1.5h-1.5zM218.8,124.1h1.5v1.5h-1.5zM218.8,132.9h1.5v1.5h-1.5zM218.8,141.7h1.5v1.5h-1.5zM218.8,150.5h1.5v1.5h-1.5zM218.8,159.3h1.5v1.5h-1.5zM218.8,168.1h1.5v1.5h-1.5zM218.8,176.9h1.5v1.5h-1.5zM218.8,185.7h1.5v1.5h-1.5zM218.8,194.5h1.5v1.5h-1.5zM218.8,203.3h1.5v1.5h-1.5zM218.8,212.1h1.5v1.5h-1.5zM218.8,220.9h1.5v1.5h-1.5zM218.8,229.7h1.5v1.5h-1.5zM218.8,238.5h1.5v1.5h-1.5zM218.8,247.3h1.5v1.5h-1.5zM218.8,256.1h1.5v1.5h-1.5zM218.8,264.9h1.5v1.5h-1.5zM218.8,273.6h1.5v1.5h-1.5zM218.8,282.4h1.5v1.5h-1.5zM218.8,291.2h1.5v1.5h-1.5zM218.8,300.0h1.5v1.5h-1.5zM218.8,308.8h1.5v1.5h-1.5zM218.8,317.6h1.5v1.5h-1.5zM218.8,326.4h1.5v1.5h-1.5zM218.8,335.2h1.5v1.5h-1.5zM218.8,344.0h1.5v1.5h-1.5zM218.8,352.8h1.5v1.5h-1.5zM218.8,361.6h1.5v1.5h-1.5zM218.8,370.4h1.5v1.5h-1.5zM218.8,379.2h1.5v1.5h-1.5zM218.8,388.0h1.5v1.5h-1.5zM218.8,396.8h1.5v1.5h-1.5zM218.8,405.6h1.5v1.5h-1.5zM218.8,414.4h1.5v1.5h-1.5zM218.8,423.2h1.5v1.5h-1.5zM218.8,432.0h1.5v1.5h-1.5zM218.8,440.8h1.5v1.5h-1.5zM218.8,449.6h1.5v1.5h-1.5zM218.8,458.3h1.5v1.5h-1.5zM218.8,467.1h1.5v1.5h-1.5zM218.8,475.9h1.5v1.5h-1.5zM218.8,484.7h1.5v1.5h-1.5zM218.8,493.5h1.5v1.5h-1.5zM227.6,89.0h1.5v1.5h-1.5zM227.6,97.8h1.5v1.5h-1.5zM227.6,106.5h1.5v1.5h-1.5zM227.6,115.3h1.5v1.5h-1.5zM227.6,124.1h1.5v1.5h-1.5zM227.6,132.9h1.5v1.5h-1.5zM227.6,141.7h1.5v1.5h-1.5zM227.6,150.5h1.5v1.5h-1.5zM227.6,159.3h1.5v1.5h-1.5zM227.6,168.1h1.5v1.5h-1.5zM227.6,176.9h1.5v1.5h-1.5zM227.6,185.7h1.5v1.5h-1.5zM227.6,194.5h1.5v1.5h-1.5zM227.6,203.3h1.5v1.5h-1.5zM227.6,212.1h1.5v1.5h-1.5zM227.6,220.9h1.5v1.5h-1.5zM227.6,229.7h1.5v1.5h-1.5zM227.6,238.5h1.5v1.5h-1.5zM227.6,247.3h1.5v1.5h-1.5zM227.6,256.1h1.5v1.5h-1.5zM227.6,264.9h1.5v1.5h-1.5zM227.6,273.6h1.5v1.5h-1.5zM227.6,282.4h1.5v1.5h-1.5zM227.6,291.2h1.5v1.5h-1.5zM227.6,300.0h1.5v1.5h-1.5zM227.6,308.8h1.5v1.5h-1.5zM227.6,317.6h1.5v1.5h-1.5zM227.6,326.4h1.5v1.5h-1.5zM227.6,335.2h1.5v1.5h-1.5zM227.6,344.0h1.5v1.5h-1.5zM227.6,352.8h1.5v1.5h-1.5zM227.6,361.6h1.5v1.5h-1.5zM227.6,370.4h1.5v1.5h-1.5zM227.6,379.2h1.5v1.5h-1.5zM227.6,388.0h1.5v1.5h-1.5zM227.6,396.8h1.5v1.5h-1.5zM227.6,405.6h1.5v1.5h-1.5zM227.6,414.4h1.5v1.5h-1.5zM227.6,423.2h1.5v1.5h-1.5zM227.6,432.0h1.5v1.5h-1.5zM227.6,440.8h1.5v1.5h-1.5zM227.6,449.6h1.5v1.5h-1.5zM227.6,458.3h1.5v1.5h-1.5zM227.6,467.1h1.5v1.5h-1.5zM227.6,475.9h1.5v1.5h-1.5zM227.6,484.7h1.5v1.5h-1.5zM227.6,493.5h1.5v1.5h-1.5zM236.4,89.0h1.5v1.5h-1.5zM236.4,97.8h1.5v1.5h-1.5zM236.4,106.5h1.5v1.5h-1.5zM236.4,115.3h1.5v1.5h-1.5zM236.4,124.1h1.5v1.5h-1.5zM236.4,132.9h1.5v1.5h-1.5zM236.4,141.7h1.5v1.5h-1.5zM236.4,150.5h1.5v1.5h-1.5zM236.4,159.3h1.5v1.5h-1.5zM236.4,168.1h1.5v1.5h-1.5zM236.4,176.9h1.5v1.5h-1.5zM236.4,185.7h1.5v1.5h-1.5zM236.4,194.5h1.5v1.5h-1.5zM236.4,203.3h1.5v1.5h-1.5zM236.4,212.1h1.5v1.5h-1.5zM236.4,220.9h1.5v1.5h-1.5zM236.4,229.7h1.5v1.5h-1.5zM236.4,238.5h1.5v1.5h-1.5zM236.4,247.3h1.5v1.5h-1.5zM236.4,256.1h1.5v1.5h-1.5zM236.4,264.9h1.5v1.5h-1.5zM236.4,273.6h1.5v1.5h-1.5zM236.4,282.4h1.5v1.5h-1.5zM236.4,291.2h1.5v1.5h-1.5zM236.4,300.0h1.5v1.5h-1.5zM236.4,308.8h1.5v1.5h-1.5zM236.4,317.6h1.5v1.5h-1.5zM236.4,326.4h1.5v1.5h-1.5zM236.4,335.2h1.5v1.5h-1.5zM236.4,344.0h1.5v1.5h-1.5zM236.4,352.8h1.5v1.5h-1.5zM236.4,361.6h1.5v1.5h-1.5zM236.4,370.4h1.5v1.5h-1.5zM236.4,379.2h1.5v1.5h-1.5zM236.4,388.0h1.5v1.5h-1.5zM236.4,396.8h1.5v1.5h-1.5zM236.4,405.6h1.5v1.5h-1.5zM236.4,414.4h1.5v1.5h-1.5zM236.4,423.2h1.5v1.5h-1.5zM236.4,432.0h1.5v1.5h-1.5zM236.4,440.8h1.5v1.5h-1.5zM236.4,449.6h1.5v1.5h-1.5zM236.4,458.3h1.5v1.5h-1.5zM236.4,467.1h1.5v1.5h-1.5zM236.4,475.9h1.5v1.5h-1.5zM236.4,484.7h1.5v1.5h-1.5zM236.4,493.5h1.5v1.5h-1.5zM245.2,89.0h1.5v1.5h-1.5zM245.2,97.8h1.5v1.5h-1.5zM245.2,106.5h1.5v1.5h-1.5zM245.2,115.3h1.5v1.5h-1.5zM245.2,124.1h1.5v1.5h-1.5zM245.2,132.9h1.5v1.5h-1.5zM245.2,141.7h1.5v1.5h-1.5zM245.2,150.5h1.5v1.5h-1.5zM245.2,159.3h1.5v1.5h-1.5zM245.2,168.1h1.5v1.5h-1.5zM245.2,176.9h1.5v1.5h-1.5zM245.2,185.7h1.5v1.5h-1.5zM245.2,194.5h1.5v1.5h-1.5zM245.2,203.3h1.5v1.5h-1.5zM245.2,212.1h1.5v1.5h-1.5zM245.2,220.9h1.5v1.5h-1.5zM245.2,229.7h1.5v1.5h-1.5zM245.2,238.5h1.5v1.5h-1.5zM245.2,247.3h1.5v1.5h-1.5zM245.2,256.1h1.5v1.5h-1.5zM245.2,264.9h1.5v1.5h-1.5zM245.2,273.6h1.5v1.5h-1.5zM245.2,282.4h1.5v1.5h-1.5zM245.2,291.2h1.5v1.5h-1.5zM245.2,300.0h1.5v1.5h-1.5zM245.2,308.8h1.5v1.5h-1.5zM245.2,317.6h1.5v1.5h-1.5zM245.2,326.4h1.5v1.5h-1.5zM245.2,335.2h1.5v1.5h-1.5zM245.2,344.0h1.5v1.5h-1.5zM245.2,352.8h1.5v1.5h-1.5zM245.2,361.6h1.5v1.5h-1.5zM245.2,370.4h1.5v1.5h-1.5zM245.2,379.2h1.5v1.5h-1.5zM245.2,388.0h1.5v1.5h-1.5zM245.2,396.8h1.5v1.5h-1.5zM245.2,405.6h1.5v1.5h-1.5zM245.2,414.4h1.5v1.5h-1.5zM245.2,423.2h1.5v1.5h-1.5zM245.2,432.0h1.5v1.5h-1.5zM245.2,440.8h1.5v1.5h-1.5zM245.2,449.6h1.5v1.5h-1.5zM245.2,458.3h1.5v1.5h-1.5zM245.2,467.1h1.5v1.5h-1.5zM245.2,475.9h1.5v1.5h-1.5zM245.2,484.7h1.5v1.5h-1.5zM245.2,493.5h1.5v1.5h-1.5zM254.0,89.0h1.5v1.5h-1.5zM254.0,97.8h1.5v1.5h-1.5zM254.0,106.5h1.5v1.5h-1.5zM254.0,115.3h1.5v1.5h-1.5zM254.0,124.1h1.5v1.5h-1.5zM254.0,132.9h1.5v1.5h-1.5zM254.0,141.7h1.5v1.5h-1.5zM254.0,150.5h1.5v1.5h-1.5zM254.0,159.3h1.5v1.5h-1.5zM254.0,168.1h1.5v1.5h-1.5zM254.0,176.9h1.5v1.5h-1.5zM254.0,185.7h1.5v1.5h-1.5zM254.0,194.5h1.5v1.5h-1.5zM254.0,203.3h1.5v1.5h-1.5zM254.0,212.1h1.5v1.5h-1.5zM254.0,220.9h1.5v1.5h-1.5zM254.0,229.7h1.5v1.5h-1.5zM254.0,238.5h1.5v1.5h-1.5zM254.0,247.3h1.5v1.5h-1.5zM254.0,256.1h1.5v1.5h-1.5zM254.0,264.9h1.5v1.5h-1.5zM254.0,273.6h1.5v1.5h-1.5zM254.0,282.4h1.5v1.5h-1.5zM254.0,291.2h1.5v1.5h-1.5zM254.0,300.0h1.5v1.5h-1.5zM254.0,308.8h1.5v1.5h-1.5zM254.0,317.6h1.5v1.5h-1.5zM254.0,326.4h1.5v1.5h-1.5zM254.0,335.2h1.5v1.5h-1.5zM254.0,344.0h1.5v1.5h-1.5zM254.0,352.8h1.5v1.5h-1.5zM254.0,361.6h1.5v1.5h-1.5zM254.0,370.4h1.5v1.5h-1.5zM254.0,379.2h1.5v1.5h-1.5zM254.0,388.0h1.5v1.5h-1.5zM254.0,396.8h1.5v1.5h-1.5zM254.0,405.6h1.5v1.5h-1.5zM254.0,414.4h1.5v1.5h-1.5zM254.0,423.2h1.5v1.5h-1.5zM254.0,432.0h1.5v1.5h-1.5zM254.0,440.8h1.5v1.5h-1.5zM254.0,449.6h1.5v1.5h-1.5zM254.0,458.3h1.5v1.5h-1.5zM254.0,467.1h1.5v1.5h-1.5zM254.0,475.9h1.5v1.5h-1.5zM254.0,484.7h1.5v1.5h-1.5zM254.0,493.5h1.5v1.5h-1.5zM262.8,89.0h1.5v1.5h-1.5zM262.8,97.8h1.5v1.5h-1.5zM262.8,106.5h1.5v1.5h-1.5zM262.8,115.3h1.5v1.5h-1.5zM262.8,124.1h1.5v1.5h-1.5zM262.8,132.9h1.5v1.5h-1.5zM262.8,141.7h1.5v1.5h-1.5zM262.8,150.5h1.5v1.5h-1.5zM262.8,159.3h1.5v1.5h-1.5zM262.8,168.1h1.5v1.5h-1.5zM262.8,176.9h1.5v1.5h-1.5zM262.8,185.7h1.5v1.5h-1.5zM262.8,194.5h1.5v1.5h-1.5zM262.8,203.3h1.5v1.5h-1.5zM262.8,212.1h1.5v1.5h-1.5zM262.8,220.9h1.5v1.5h-1.5zM262.8,229.7h1.5v1.5h-1.5zM262.8,238.5h1.5v1.5h-1.5zM262.8,247.3h1.5v1.5h-1.5zM262.8,256.1h1.5v1.5h-1.5zM262.8,264.9h1.5v1.5h-1.5zM262.8,273.6h1.5v1.5h-1.5zM262.8,282.4h1.5v1.5h-1.5zM262.8,291.2h1.5v1.5h-1.5zM262.8,300.0h1.5v1.5h-1.5zM262.8,308.8h1.5v1.5h-1.5zM262.8,317.6h1.5v1.5h-1.5zM262.8,326.4h1.5v1.5h-1.5zM262.8,335.2h1.5v1.5h-1.5zM262.8,344.0h1.5v1.5h-1.5zM262.8,352.8h1.5v1.5h-1.5zM262.8,361.6h1.5v1.5h-1.5zM262.8,370.4h1.5v1.5h-1.5zM262.8,379.2h1.5v1.5h-1.5zM262.8,388.0h1.5v1.5h-1.5zM262.8,396.8h1.5v1.5h-1.5zM262.8,405.6h1.5v1.5h-1.5zM262.8,414.4h1.5v1.5h-1.5zM262.8,423.2h1.5v1.5h-1.5zM262.8,432.0h1.5v1.5h-1.5zM262.8,440.8h1.5v1.5h-1.5zM262.8,449.6h1.5v1.5h-1.5zM262.8,458.3h1.5v1.5h-1.5zM262.8,467.1h1.5v1.5h-1.5zM262.8,475.9h1.5v1.5h-1.5zM262.8,484.7h1.5v1.5h-1.5zM262.8,493.5h1.5v1.5h-1.5zM271.6,89.0h1.5v1.5h-1.5zM271.6,97.8h1.5v1.5h-1.5zM271.6,106.5h1.5v1.5h-1.5zM271.6,115.3h1.5v1.5h-1.5zM271.6,124.1h1.5v1.5h-1.5zM271.6,132.9h1.5v1.5h-1.5zM271.6,141.7h1.5v1.5h-1.5zM271.6,150.5h1.5v1.5h-1.5zM271.6,159.3h1.5v1.5h-1.5zM271.6,168.1h1.5v1.5h-1.5zM271.6,176.9h1.5v1.5h-1.5zM271.6,185.7h1.5v1.5h-1.5zM271.6,194.5h1.5v1.5h-1.5zM271.6,203.3h1.5v1.5h-1.5zM271.6,212.1h1.5v1.5h-1.5zM271.6,220.9h1.5v1.5h-1.5zM271.6,229.7h1.5v1.5h-1.5zM271.6,238.5h1.5v1.5h-1.5zM271.6,247.3h1.5v1.5h-1.5zM271.6,256.1h1.5v1.5h-1.5zM271.6,264.9h1.5v1.5h-1.5zM271.6,273.6h1.5v1.5h-1.5zM271.6,282.4h1.5v1.5h-1.5zM271.6,291.2h1.5v1.5h-1.5zM271.6,300.0h1.5v1.5h-1.5zM271.6,308.8h1.5v1.5h-1.5zM271.6,317.6h1.5v1.5h-1.5zM271.6,326.4h1.5v1.5h-1.5zM271.6,335.2h1.5v1.5h-1.5zM271.6,344.0h1.5v1.5h-1.5zM271.6,352.8h1.5v1.5h-1.5zM271.6,361.6h1.5v1.5h-1.5zM271.6,370.4h1.5v1.5h-1.5zM271.6,379.2h1.5v1.5h-1.5zM271.6,388.0h1.5v1.5h-1.5zM271.6,396.8h1.5v1.5h-1.5zM271.6,405.6h1.5v1.5h-1.5zM271.6,414.4h1.5v1.5h-1.5zM271.6,423.2h1.5v1.5h-1.5zM271.6,432.0h1.5v1.5h-1.5zM271.6,440.8h1.5v1.5h-1.5zM271.6,449.6h1.5v1.5h-1.5zM271.6,458.3h1.5v1.5h-1.5zM271.6,467.1h1.5v1.5h-1.5zM271.6,475.9h1.5v1.5h-1.5zM271.6,484.7h1.5v1.5h-1.5zM271.6,493.5h1.5v1.5h-1.5zM280.4,89.0h1.5v1.5h-1.5zM280.4,97.8h1.5v1.5h-1.5zM280.4,106.5h1.5v1.5h-1.5zM280.4,115.3h1.5v1.5h-1.5zM280.4,124.1h1.5v1.5h-1.5zM280.4,132.9h1.5v1.5h-1.5zM280.4,141.7h1.5v1.5h-1.5zM280.4,150.5h1.5v1.5h-1.5zM280.4,159.3h1.5v1.5h-1.5zM280.4,168.1h1.5v1.5h-1.5zM280.4,176.9h1.5v1.5h-1.5zM280.4,185.7h1.5v1.5h-1.5zM280.4,194.5h1.5v1.5h-1.5zM280.4,203.3h1.5v1.5h-1.5zM280.4,212.1h1.5v1.5h-1.5zM280.4,220.9h1.5v1.5h-1.5zM280.4,229.7h1.5v1.5h-1.5zM280.4,238.5h1.5v1.5h-1.5zM280.4,247.3h1.5v1.5h-1.5zM280.4,256.1h1.5v1.5h-1.5zM280.4,264.9h1.5v1.5h-1.5zM280.4,273.6h1.5v1.5h-1.5zM280.4,282.4h1.5v1.5h-1.5zM280.4,291.2h1.5v1.5h-1.5zM280.4,300.0h1.5v1.5h-1.5zM280.4,308.8h1.5v1.5h-1.5zM280.4,317.6h1.5v1.5h-1.5zM280.4,326.4h1.5v1.5h-1.5zM280.4,335.2h1.5v1.5h-1.5zM280.4,344.0h1.5v1.5h-1.5zM280.4,352.8h1.5v1.5h-1.5zM280.4,361.6h1.5v1.5h-1.5zM280.4,370.4h1.5v1.5h-1.5zM280.4,379.2h1.5v1.5h-1.5zM280.4,388.0h1.5v1.5h-1.5zM280.4,396.8h1.5v1.5h-1.5zM280.4,405.6h1.5v1.5h-1.5zM280.4,414.4h1.5v1.5h-1.5zM280.4,423.2h1.5v1.5h-1.5zM280.4,432.0h1.5v1.5h-1.5zM280.4,440.8h1.5v1.5h-1.5zM280.4,449.6h1.5v1.5h-1.5zM280.4,458.3h1.5v1.5h-1.5zM280.4,467.1h1.5v1.5h-1.5zM280.4,475.9h1.5v1.5h-1.5zM280.4,484.7h1.5v1.5h-1.5zM280.4,493.5h1.5v1.5h-1.5zM289.1,89.0h1.5v1.5h-1.5zM289.1,97.8h1.5v1.5h-1.5zM289.1,106.5h1.5v1.5h-1.5zM289.1,115.3h1.5v1.5h-1.5zM289.1,124.1h1.5v1.5h-1.5zM289.1,132.9h1.5v1.5h-1.5zM289.1,141.7h1.5v1.5h-1.5zM289.1,150.5h1.5v1.5h-1.5zM289.1,159.3h1.5v1.5h-1.5zM289.1,168.1h1.5v1.5h-1.5zM289.1,176.9h1.5v1.5h-1.5zM289.1,185.7h1.5v1.5h-1.5zM289.1,194.5h1.5v1.5h-1.5zM289.1,203.3h1.5v1.5h-1.5zM289.1,212.1h1.5v1.5h-1.5zM289.1,220.9h1.5v1.5h-1.5zM289.1,229.7h1.5v1.5h-1.5zM289.1,238.5h1.5v1.5h-1.5zM289.1,247.3h1.5v1.5h-1.5zM289.1,256.1h1.5v1.5h-1.5zM289.1,264.9h1.5v1.5h-1.5zM289.1,273.6h1.5v1.5h-1.5zM289.1,282.4h1.5v1.5h-1.5zM289.1,291.2h1.5v1.5h-1.5zM289.1,300.0h1.5v1.5h-1.5zM289.1,308.8h1.5v1.5h-1.5zM289.1,317.6h1.5v1.5h-1.5zM289.1,326.4h1.5v1.5h-1.5zM289.1,335.2h1.5v1.5h-1.5zM289.1,344.0h1.5v1.5h-1.5zM289.1,352.8h1.5v1.5h-1.5zM289.1,361.6h1.5v1.5h-1.5zM289.1,370.4h1.5v1.5h-1.5zM289.1,379.2h1.5v1.5h-1.5zM289.1,388.0h1.5v1.5h-1.5zM289.1,396.8h1.5v1.5h-1.5zM289.1,405.6h1.5v1.5h-1.5zM289.1,414.4h1.5v1.5h-1.5zM289.1,423.2h1.5v1.5h-1.5zM289.1,432.0h1.5v1.5h-1.5zM289.1,440.8h1.5v1.5h-1.5zM289.1,449.6h1.5v1.5h-1.5zM289.1,458.3h1.5v1.5h-1.5zM289.1,467.1h1.5v1.5h-1.5zM289.1,475.9h1.5v1.5h-1.5zM289.1,484.7h1.5v1.5h-1.5zM289.1,493.5h1.5v1.5h-1.5zM297.9,89.0h1.5v1.5h-1.5zM297.9,97.8h1.5v1.5h-1.5zM297.9,106.5h1.5v1.5h-1.5zM297.9,115.3h1.5v1.5h-1.5zM297.9,124.1h1.5v1.5h-1.5zM297.9,132.9h1.5v1.5h-1.5zM297.9,141.7h1.5v1.5h-1.5zM297.9,150.5h1.5v1.5h-1.5zM297.9,159.3h1.5v1.5h-1.5zM297.9,168.1h1.5v1.5h-1.5zM297.9,176.9h1.5v1.5h-1.5zM297.9,185.7h1.5v1.5h-1.5zM297.9,194.5h1.5v1.5h-1.5zM297.9,203.3h1.5v1.5h-1.5zM297.9,212.1h1.5v1.5h-1.5zM297.9,220.9h1.5v1.5h-1.5zM297.9,229.7h1.5v1.5h-1.5zM297.9,238.5h1.5v1.5h-1.5zM297.9,247.3h1.5v1.5h-1.5zM297.9,256.1h1.5v1.5h-1.5zM297.9,264.9h1.5v1.5h-1.5zM297.9,273.6h1.5v1.5h-1.5zM297.9,282.4h1.5v1.5h-1.5zM297.9,291.2h1.5v1.5h-1.5zM297.9,300.0h1.5v1.5h-1.5zM297.9,308.8h1.5v1.5h-1.5zM297.9,317.6h1.5v1.5h-1.5zM297.9,326.4h1.5v1.5h-1.5zM297.9,335.2h1.5v1.5h-1.5zM297.9,344.0h1.5v1.5h-1.5zM297.9,352.8h1.5v1.5h-1.5zM297.9,361.6h1.5v1.5h-1.5zM297.9,370.4h1.5v1.5h-1.5zM297.9,379.2h1.5v1.5h-1.5zM297.9,388.0h1.5v1.5h-1.5zM297.9,396.8h1.5v1.5h-1.5zM297.9,405.6h1.5v1.5h-1.5zM297.9,414.4h1.5v1.5h-1.5zM297.9,423.2h1.5v1.5h-1.5zM297.9,432.0h1.5v1.5h-1.5zM297.9,440.8h1.5v1.5h-1.5zM297.9,449.6h1.5v1.5h-1.5zM297.9,458.3h1.5v1.5h-1.5zM297.9,467.1h1.5v1.5h-1.5zM297.9,475.9h1.5v1.5h-1.5zM297.9,484.7h1.5v1.5h-1.5zM297.9,493.5h1.5v1.5h-1.5zM306.7,89.0h1.5v1.5h-1.5zM306.7,97.8h1.5v1.5h-1.5zM306.7,106.5h1.5v1.5h-1.5zM306.7,115.3h1.5v1.5h-1.5zM306.7,124.1h1.5v1.5h-1.5zM306.7,132.9h1.5v1.5h-1.5zM306.7,141.7h1.5v1.5h-1.5zM306.7,150.5h1.5v1.5h-1.5zM306.7,159.3h1.5v1.5h-1.5zM306.7,168.1h1.5v1.5h-1.5zM306.7,176.9h1.5v1.5h-1.5zM306.7,185.7h1.5v1.5h-1.5zM306.7,194.5h1.5v1.5h-1.5zM306.7,203.3h1.5v1.5h-1.5zM306.7,212.1h1.5v1.5h-1.5zM306.7,220.9h1.5v1.5h-1.5zM306.7,229.7h1.5v1.5h-1.5zM306.7,238.5h1.5v1.5h-1.5zM306.7,247.3h1.5v1.5h-1.5zM306.7,256.1h1.5v1.5h-1.5zM306.7,264.9h1.5v1.5h-1.5zM306.7,273.6h1.5v1.5h-1.5zM306.7,282.4h1.5v1.5h-1.5zM306.7,291.2h1.5v1.5h-1.5zM306.7,300.0h1.5v1.5h-1.5zM306.7,308.8h1.5v1.5h-1.5zM306.7,317.6h1.5v1.5h-1.5zM306.7,326.4h1.5v1.5h-1.5zM306.7,335.2h1.5v1.5h-1.5zM306.7,344.0h1.5v1.5h-1.5zM306.7,352.8h1.5v1.5h-1.5zM306.7,361.6h1.5v1.5h-1.5zM306.7,370.4h1.5v1.5h-1.5zM306.7,379.2h1.5v1.5h-1.5zM306.7,388.0h1.5v1.5h-1.5zM306.7,396.8h1.5v1.5h-1.5zM306.7,405.6h1.5v1.5h-1.5zM306.7,414.4h1.5v1.5h-1.5zM306.7,423.2h1.5v1.5h-1.5zM306.7,432.0h1.5v1.5h-1.5zM306.7,440.8h1.5v1.5h-1.5zM306.7,449.6h1.5v1.5h-1.5zM306.7,458.3h1.5v1.5h-1.5zM306.7,467.1h1.5v1.5h-1.5zM306.7,475.9h1.5v1.5h-1.5zM306.7,484.7h1.5v1.5h-1.5zM306.7,493.5h1.5v1.5h-1.5zM315.5,89.0h1.5v1.5h-1.5zM315.5,97.8h1.5v1.5h-1.5zM315.5,106.5h1.5v1.5h-1.5zM315.5,115.3h1.5v1.5h-1.5zM315.5,124.1h1.5v1.5h-1.5zM315.5,132.9h1.5v1.5h-1.5zM315.5,141.7h1.5v1.5h-1.5zM315.5,150.5h1.5v1.5h-1.5zM315.5,159.3h1.5v1.5h-1.5zM315.5,168.1h1.5v1.5h-1.5zM315.5,176.9h1.5v1.5h-1.5zM315.5,185.7h1.5v1.5h-1.5zM315.5,194.5h1.5v1.5h-1.5zM315.5,203.3h1.5v1.5h-1.5zM315.5,212.1h1.5v1.5h-1.5zM315.5,220.9h1.5v1.5h-1.5zM315.5,229.7h1.5v1.5h-1.5zM315.5,238.5h1.5v1.5h-1.5zM315.5,247.3h1.5v1.5h-1.5zM315.5,256.1h1.5v1.5h-1.5zM315.5,264.9h1.5v1.5h-1.5zM315.5,273.6h1.5v1.5h-1.5zM315.5,282.4h1.5v1.5h-1.5zM315.5,291.2h1.5v1.5h-1.5zM315.5,300.0h1.5v1.5h-1.5zM315.5,308.8h1.5v1.5h-1.5zM315.5,317.6h1.5v1.5h-1.5zM315.5,326.4h1.5v1.5h-1.5zM315.5,335.2h1.5v1.5h-1.5zM315.5,344.0h1.5v1.5h-1.5zM315.5,352.8h1.5v1.5h-1.5zM315.5,361.6h1.5v1.5h-1.5zM315.5,370.4h1.5v1.5h-1.5zM315.5,379.2h1.5v1.5h-1.5zM315.5,388.0h1.5v1.5h-1.5zM315.5,396.8h1.5v1.5h-1.5zM315.5,405.6h1.5v1.5h-1.5zM315.5,414.4h1.5v1.5h-1.5zM315.5,423.2h1.5v1.5h-1.5zM315.5,432.0h1.5v1.5h-1.5zM315.5,440.8h1.5v1.5h-1.5zM315.5,449.6h1.5v1.5h-1.5zM315.5,458.3h1.5v1.5h-1.5zM315.5,467.1h1.5v1.5h-1.5zM315.5,475.9h1.5v1.5h-1.5zM315.5,484.7h1.5v1.5h-1.5zM315.5,493.5h1.5v1.5h-1.5zM324.3,89.0h1.5v1.5h-1.5zM324.3,97.8h1.5v1.5h-1.5zM324.3,106.5h1.5v1.5h-1.5zM324.3,115.3h1.5v1.5h-1.5zM324.3,124.1h1.5v1.5h-1.5zM324.3,132.9h1.5v1.5h-1.5zM324.3,141.7h1.5v1.5h-1.5zM324.3,150.5h1.5v1.5h-1.5zM324.3,159.3h1.5v1.5h-1.5zM324.3,168.1h1.5v1.5h-1.5zM324.3,176.9h1.5v1.5h-1.5zM324.3,185.7h1.5v1.5h-1.5zM324.3,194.5h1.5v1.5h-1.5zM324.3,203.3h1.5v1.5h-1.5zM324.3,212.1h1.5v1.5h-1.5zM324.3,220.9h1.5v1.5h-1.5zM324.3,229.7h1.5v1.5h-1.5zM324.3,238.5h1.5v1.5h-1.5zM324.3,247.3h1.5v1.5h-1.5zM324.3,256.1h1.5v1.5h-1.5zM324.3,264.9h1.5v1.5h-1.5zM324.3,273.6h1.5v1.5h-1.5zM324.3,282.4h1.5v1.5h-1.5zM324.3,291.2h1.5v1.5h-1.5zM324.3,300.0h1.5v1.5h-1.5zM324.3,308.8h1.5v1.5h-1.5zM324.3,317.6h1.5v1.5h-1.5zM324.3,326.4h1.5v1.5h-1.5zM324.3,335.2h1.5v1.5h-1.5zM324.3,344.0h1.5v1.5h-1.5zM324.3,352.8h1.5v1.5h-1.5zM324.3,361.6h1.5v1.5h-1.5zM324.3,370.4h1.5v1.5h-1.5zM324.3,379.2h1.5v1.5h-1.5zM324.3,388.0h1.5v1.5h-1.5zM324.3,396.8h1.5v1.5h-1.5zM324.3,405.6h1.5v1.5h-1.5zM324.3,414.4h1.5v1.5h-1.5zM324.3,423.2h1.5v1.5h-1.5zM324.3,432.0h1.5v1.5h-1.5zM324.3,440.8h1.5v1.5h-1.5zM324.3,449.6h1.5v1.5h-1.5zM324.3,458.3h1.5v1.5h-1.5zM324.3,467.1h1.5v1.5h-1.5zM324.3,475.9h1.5v1.5h-1.5zM324.3,484.7h1.5v1.5h-1.5zM324.3,493.5h1.5v1.5h-1.5zM333.1,89.0h1.5v1.5h-1.5zM333.1,97.8h1.5v1.5h-1.5zM333.1,106.5h1.5v1.5h-1.5zM333.1,115.3h1.5v1.5h-1.5zM333.1,124.1h1.5v1.5h-1.5zM333.1,132.9h1.5v1.5h-1.5zM333.1,141.7h1.5v1.5h-1.5zM333.1,150.5h1.5v1.5h-1.5zM333.1,159.3h1.5v1.5h-1.5zM333.1,168.1h1.5v1.5h-1.5zM333.1,176.9h1.5v1.5h-1.5zM333.1,185.7h1.5v1.5h-1.5zM333.1,194.5h1.5v1.5h-1.5zM333.1,203.3h1.5v1.5h-1.5zM333.1,212.1h1.5v1.5h-1.5zM333.1,220.9h1.5v1.5h-1.5zM333.1,229.7h1.5v1.5h-1.5zM333.1,238.5h1.5v1.5h-1.5zM333.1,247.3h1.5v1.5h-1.5zM333.1,256.1h1.5v1.5h-1.5zM333.1,264.9h1.5v1.5h-1.5zM333.1,273.6h1.5v1.5h-1.5zM333.1,282.4h1.5v1.5h-1.5zM333.1,291.2h1.5v1.5h-1.5zM333.1,300.0h1.5v1.5h-1.5zM333.1,308.8h1.5v1.5h-1.5zM333.1,317.6h1.5v1.5h-1.5zM333.1,326.4h1.5v1.5h-1.5zM333.1,335.2h1.5v1.5h-1.5zM333.1,344.0h1.5v1.5h-1.5zM333.1,352.8h1.5v1.5h-1.5zM333.1,361.6h1.5v1.5h-1.5zM333.1,370.4h1.5v1.5h-1.5zM333.1,379.2h1.5v1.5h-1.5zM333.1,388.0h1.5v1.5h-1.5zM333.1,396.8h1.5v1.5h-1.5zM333.1,405.6h1.5v1.5h-1.5zM333.1,414.4h1.5v1.5h-1.5zM333.1,423.2h1.5v1.5h-1.5zM333.1,432.0h1.5v1.5h-1.5zM333.1,440.8h1.5v1.5h-1.5zM333.1,449.6h1.5v1.5h-1.5zM333.1,458.3h1.5v1.5h-1.5zM333.1,467.1h1.5v1.5h-1.5zM333.1,475.9h1.5v1.5h-1.5zM333.1,484.7h1.5v1.5h-1.5zM333.1,493.5h1.5v1.5h-1.5zM341.9,89.0h1.5v1.5h-1.5zM341.9,97.8h1.5v1.5h-1.5zM341.9,106.5h1.5v1.5h-1.5zM341.9,115.3h1.5v1.5h-1.5zM341.9,124.1h1.5v1.5h-1.5zM341.9,132.9h1.5v1.5h-1.5zM341.9,141.7h1.5v1.5h-1.5zM341.9,150.5h1.5v1.5h-1.5zM341.9,159.3h1.5v1.5h-1.5zM341.9,168.1h1.5v1.5h-1.5zM341.9,176.9h1.5v1.5h-1.5zM341.9,185.7h1.5v1.5h-1.5zM341.9,194.5h1.5v1.5h-1.5zM341.9,203.3h1.5v1.5h-1.5zM341.9,212.1h1.5v1.5h-1.5zM341.9,220.9h1.5v1.5h-1.5zM341.9,229.7h1.5v1.5h-1.5zM341.9,238.5h1.5v1.5h-1.5zM341.9,247.3h1.5v1.5h-1.5zM341.9,256.1h1.5v1.5h-1.5zM341.9,264.9h1.5v1.5h-1.5zM341.9,273.6h1.5v1.5h-1.5zM341.9,282.4h1.5v1.5h-1.5zM341.9,291.2h1.5v1.5h-1.5zM341.9,300.0h1.5v1.5h-1.5zM341.9,308.8h1.5v1.5h-1.5zM341.9,317.6h1.5v1.5h-1.5zM341.9,326.4h1.5v1.5h-1.5zM341.9,335.2h1.5v1.5h-1.5zM341.9,344.0h1.5v1.5h-1.5zM341.9,352.8h1.5v1.5h-1.5zM341.9,361.6h1.5v1.5h-1.5zM341.9,370.4h1.5v1.5h-1.5zM341.9,379.2h1.5v1.5h-1.5zM341.9,388.0h1.5v1.5h-1.5zM341.9,396.8h1.5v1.5h-1.5zM341.9,405.6h1.5v1.5h-1.5zM341.9,414.4h1.5v1.5h-1.5zM341.9,423.2h1.5v1.5h-1.5zM341.9,432.0h1.5v1.5h-1.5zM341.9,440.8h1.5v1.5h-1.5zM341.9,449.6h1.5v1.5h-1.5zM341.9,458.3h1.5v1.5h-1.5zM341.9,467.1h1.5v1.5h-1.5zM341.9,475.9h1.5v1.5h-1.5zM341.9,484.7h1.5v1.5h-1.5zM341.9,493.5h1.5v1.5h-1.5zM350.7,89.0h1.5v1.5h-1.5zM350.7,97.8h1.5v1.5h-1.5zM350.7,106.5h1.5v1.5h-1.5zM350.7,115.3h1.5v1.5h-1.5zM350.7,124.1h1.5v1.5h-1.5zM350.7,132.9h1.5v1.5h-1.5zM350.7,141.7h1.5v1.5h-1.5zM350.7,150.5h1.5v1.5h-1.5zM350.7,159.3h1.5v1.5h-1.5zM350.7,168.1h1.5v1.5h-1.5zM350.7,176.9h1.5v1.5h-1.5zM350.7,185.7h1.5v1.5h-1.5zM350.7,194.5h1.5v1.5h-1.5zM350.7,203.3h1.5v1.5h-1.5zM350.7,212.1h1.5v1.5h-1.5zM350.7,220.9h1.5v1.5h-1.5zM350.7,229.7h1.5v1.5h-1.5zM350.7,238.5h1.5v1.5h-1.5zM350.7,247.3h1.5v1.5h-1.5zM350.7,256.1h1.5v1.5h-1.5zM350.7,264.9h1.5v1.5h-1.5zM350.7,273.6h1.5v1.5h-1.5zM350.7,282.4h1.5v1.5h-1.5zM350.7,291.2h1.5v1.5h-1.5zM350.7,300.0h1.5v1.5h-1.5zM350.7,308.8h1.5v1.5h-1.5zM350.7,317.6h1.5v1.5h-1.5zM350.7,326.4h1.5v1.5h-1.5zM350.7,335.2h1.5v1.5h-1.5zM350.7,344.0h1.5v1.5h-1.5zM350.7,352.8h1.5v1.5h-1.5zM350.7,361.6h1.5v1.5h-1.5zM350.7,370.4h1.5v1.5h-1.5zM350.7,379.2h1.5v1.5h-1.5zM350.7,388.0h1.5v1.5h-1.5zM350.7,396.8h1.5v1.5h-1.5zM350.7,405.6h1.5v1.5h-1.5zM350.7,414.4h1.5v1.5h-1.5zM350.7,423.2h1.5v1.5h-1.5zM350.7,432.0h1.5v1.5h-1.5zM350.7,440.8h1.5v1.5h-1.5zM350.7,449.6h1.5v1.5h-1.5zM350.7,458.3h1.5v1.5h-1.5zM350.7,467.1h1.5v1.5h-1.5zM350.7,475.9h1.5v1.5h-1.5zM350.7,484.7h1.5v1.5h-1.5zM350.7,493.5h1.5v1.5h-1.5zM359.5,89.0h1.5v1.5h-1.5zM359.5,97.8h1.5v1.5h-1.5zM359.5,106.5h1.5v1.5h-1.5zM359.5,115.3h1.5v1.5h-1.5zM359.5,124.1h1.5v1.5h-1.5zM359.5,132.9h1.5v1.5h-1.5zM359.5,141.7h1.5v1.5h-1.5zM359.5,150.5h1.5v1.5h-1.5zM359.5,159.3h1.5v1.5h-1.5zM359.5,168.1h1.5v1.5h-1.5zM359.5,176.9h1.5v1.5h-1.5zM359.5,185.7h1.5v1.5h-1.5zM359.5,194.5h1.5v1.5h-1.5zM359.5,203.3h1.5v1.5h-1.5zM359.5,212.1h1.5v1.5h-1.5zM359.5,220.9h1.5v1.5h-1.5zM359.5,229.7h1.5v1.5h-1.5zM359.5,238.5h1.5v1.5h-1.5zM359.5,247.3h1.5v1.5h-1.5zM359.5,256.1h1.5v1.5h-1.5zM359.5,264.9h1.5v1.5h-1.5zM359.5,273.6h1.5v1.5h-1.5zM359.5,282.4h1.5v1.5h-1.5zM359.5,291.2h1.5v1.5h-1.5zM359.5,300.0h1.5v1.5h-1.5zM359.5,308.8h1.5v1.5h-1.5zM359.5,317.6h1.5v1.5h-1.5zM359.5,326.4h1.5v1.5h-1.5zM359.5,335.2h1.5v1.5h-1.5zM359.5,344.0h1.5v1.5h-1.5zM359.5,352.8h1.5v1.5h-1.5zM359.5,361.6h1.5v1.5h-1.5zM359.5,370.4h1.5v1.5h-1.5zM359.5,379.2h1.5v1.5h-1.5zM359.5,388.0h1.5v1.5h-1.5zM359.5,396.8h1.5v1.5h-1.5zM359.5,405.6h1.5v1.5h-1.5zM359.5,414.4h1.5v1.5h-1.5zM359.5,423.2h1.5v1.5h-1.5zM359.5,432.0h1.5v1.5h-1.5zM359.5,440.8h1.5v1.5h-1.5zM359.5,449.6h1.5v1.5h-1.5zM359.5,458.3h1.5v1.5h-1.5zM359.5,467.1h1.5v1.5h-1.5zM359.5,475.9h1.5v1.5h-1.5zM359.5,484.7h1.5v1.5h-1.5zM359.5,493.5h1.5v1.5h-1.5zM368.3,89.0h1.5v1.5h-1.5zM368.3,97.8h1.5v1.5h-1.5zM368.3,106.5h1.5v1.5h-1.5zM368.3,115.3h1.5v1.5h-1.5zM368.3,124.1h1.5v1.5h-1.5zM368.3,132.9h1.5v1.5h-1.5zM368.3,141.7h1.5v1.5h-1.5zM368.3,150.5h1.5v1.5h-1.5zM368.3,159.3h1.5v1.5h-1.5zM368.3,168.1h1.5v1.5h-1.5zM368.3,176.9h1.5v1.5h-1.5zM368.3,185.7h1.5v1.5h-1.5zM368.3,194.5h1.5v1.5h-1.5zM368.3,203.3h1.5v1.5h-1.5zM368.3,212.1h1.5v1.5h-1.5zM368.3,220.9h1.5v1.5h-1.5zM368.3,229.7h1.5v1.5h-1.5zM368.3,238.5h1.5v1.5h-1.5zM368.3,247.3h1.5v1.5h-1.5zM368.3,256.1h1.5v1.5h-1.5zM368.3,264.9h1.5v1.5h-1.5zM368.3,273.6h1.5v1.5h-1.5zM368.3,282.4h1.5v1.5h-1.5zM368.3,291.2h1.5v1.5h-1.5zM368.3,300.0h1.5v1.5h-1.5zM368.3,308.8h1.5v1.5h-1.5zM368.3,317.6h1.5v1.5h-1.5zM368.3,326.4h1.5v1.5h-1.5zM368.3,335.2h1.5v1.5h-1.5zM368.3,344.0h1.5v1.5h-1.5zM368.3,352.8h1.5v1.5h-1.5zM368.3,361.6h1.5v1.5h-1.5zM368.3,370.4h1.5v1.5h-1.5zM368.3,379.2h1.5v1.5h-1.5zM368.3,388.0h1.5v1.5h-1.5zM368.3,396.8h1.5v1.5h-1.5zM368.3,405.6h1.5v1.5h-1.5zM368.3,414.4h1.5v1.5h-1.5zM368.3,423.2h1.5v1.5h-1.5zM368.3,432.0h1.5v1.5h-1.5zM368.3,440.8h1.5v1.5h-1.5zM368.3,449.6h1.5v1.5h-1.5zM368.3,458.3h1.5v1.5h-1.5zM368.3,467.1h1.5v1.5h-1.5zM368.3,475.9h1.5v1.5h-1.5zM368.3,484.7h1.5v1.5h-1.5zM368.3,493.5h1.5v1.5h-1.5zM377.1,89.0h1.5v1.5h-1.5zM377.1,97.8h1.5v1.5h-1.5zM377.1,106.5h1.5v1.5h-1.5zM377.1,115.3h1.5v1.5h-1.5zM377.1,124.1h1.5v1.5h-1.5zM377.1,132.9h1.5v1.5h-1.5zM377.1,141.7h1.5v1.5h-1.5zM377.1,150.5h1.5v1.5h-1.5zM377.1,159.3h1.5v1.5h-1.5zM377.1,168.1h1.5v1.5h-1.5zM377.1,176.9h1.5v1.5h-1.5zM377.1,185.7h1.5v1.5h-1.5zM377.1,194.5h1.5v1.5h-1.5zM377.1,203.3h1.5v1.5h-1.5zM377.1,212.1h1.5v1.5h-1.5zM377.1,220.9h1.5v1.5h-1.5zM377.1,229.7h1.5v1.5h-1.5zM377.1,238.5h1.5v1.5h-1.5zM377.1,247.3h1.5v1.5h-1.5zM377.1,256.1h1.5v1.5h-1.5zM377.1,264.9h1.5v1.5h-1.5zM377.1,273.6h1.5v1.5h-1.5zM377.1,282.4h1.5v1.5h-1.5zM377.1,291.2h1.5v1.5h-1.5zM377.1,300.0h1.5v1.5h-1.5zM377.1,308.8h1.5v1.5h-1.5zM377.1,317.6h1.5v1.5h-1.5zM377.1,326.4h1.5v1.5h-1.5zM377.1,335.2h1.5v1.5h-1.5zM377.1,344.0h1.5v1.5h-1.5zM377.1,352.8h1.5v1.5h-1.5zM377.1,361.6h1.5v1.5h-1.5zM377.1,370.4h1.5v1.5h-1.5zM377.1,379.2h1.5v1.5h-1.5zM377.1,388.0h1.5v1.5h-1.5zM377.1,396.8h1.5v1.5h-1.5zM377.1,405.6h1.5v1.5h-1.5zM377.1,414.4h1.5v1.5h-1.5zM377.1,423.2h1.5v1.5h-1.5zM377.1,432.0h1.5v1.5h-1.5zM377.1,440.8h1.5v1.5h-1.5zM377.1,449.6h1.5v1.5h-1.5zM377.1,458.3h1.5v1.5h-1.5zM377.1,467.1h1.5v1.5h-1.5zM377.1,475.9h1.5v1.5h-1.5zM377.1,484.7h1.5v1.5h-1.5zM377.1,493.5h1.5v1.5h-1.5zM385.9,89.0h1.5v1.5h-1.5zM385.9,97.8h1.5v1.5h-1.5zM385.9,106.5h1.5v1.5h-1.5zM385.9,115.3h1.5v1.5h-1.5zM385.9,124.1h1.5v1.5h-1.5zM385.9,132.9h1.5v1.5h-1.5zM385.9,141.7h1.5v1.5h-1.5zM385.9,150.5h1.5v1.5h-1.5zM385.9,159.3h1.5v1.5h-1.5zM385.9,168.1h1.5v1.5h-1.5zM385.9,176.9h1.5v1.5h-1.5zM385.9,185.7h1.5v1.5h-1.5zM385.9,194.5h1.5v1.5h-1.5zM385.9,203.3h1.5v1.5h-1.5zM385.9,212.1h1.5v1.5h-1.5zM385.9,220.9h1.5v1.5h-1.5zM385.9,229.7h1.5v1.5h-1.5zM385.9,238.5h1.5v1.5h-1.5zM385.9,247.3h1.5v1.5h-1.5zM385.9,256.1h1.5v1.5h-1.5zM385.9,264.9h1.5v1.5h-1.5zM385.9,273.6h1.5v1.5h-1.5zM385.9,282.4h1.5v1.5h-1.5zM385.9,291.2h1.5v1.5h-1.5zM385.9,300.0h1.5v1.5h-1.5zM385.9,308.8h1.5v1.5h-1.5zM385.9,317.6h1.5v1.5h-1.5zM385.9,326.4h1.5v1.5h-1.5zM385.9,335.2h1.5v1.5h-1.5zM385.9,344.0h1.5v1.5h-1.5zM385.9,352.8h1.5v1.5h-1.5zM385.9,361.6h1.5v1.5h-1.5zM385.9,370.4h1.5v1.5h-1.5zM385.9,379.2h1.5v1.5h-1.5zM385.9,388.0h1.5v1.5h-1.5zM385.9,396.8h1.5v1.5h-1.5zM385.9,405.6h1.5v1.5h-1.5zM385.9,414.4h1.5v1.5h-1.5zM385.9,423.2h1.5v1.5h-1.5zM385.9,432.0h1.5v1.5h-1.5zM385.9,440.8h1.5v1.5h-1.5zM385.9,449.6h1.5v1.5h-1.5zM385.9,458.3h1.5v1.5h-1.5zM385.9,467.1h1.5v1.5h-1.5zM385.9,475.9h1.5v1.5h-1.5zM385.9,484.7h1.5v1.5h-1.5zM385.9,493.5h1.5v1.5h-1.5zM394.7,89.0h1.5v1.5h-1.5zM394.7,97.8h1.5v1.5h-1.5zM394.7,106.5h1.5v1.5h-1.5zM394.7,115.3h1.5v1.5h-1.5zM394.7,124.1h1.5v1.5h-1.5zM394.7,132.9h1.5v1.5h-1.5zM394.7,141.7h1.5v1.5h-1.5zM394.7,150.5h1.5v1.5h-1.5zM394.7,159.3h1.5v1.5h-1.5zM394.7,168.1h1.5v1.5h-1.5zM394.7,176.9h1.5v1.5h-1.5zM394.7,185.7h1.5v1.5h-1.5zM394.7,194.5h1.5v1.5h-1.5zM394.7,203.3h1.5v1.5h-1.5zM394.7,212.1h1.5v1.5h-1.5zM394.7,220.9h1.5v1.5h-1.5zM394.7,229.7h1.5v1.5h-1.5zM394.7,238.5h1.5v1.5h-1.5zM394.7,247.3h1.5v1.5h-1.5zM394.7,256.1h1.5v1.5h-1.5zM394.7,264.9h1.5v1.5h-1.5zM394.7,273.6h1.5v1.5h-1.5zM394.7,282.4h1.5v1.5h-1.5zM394.7,291.2h1.5v1.5h-1.5zM394.7,300.0h1.5v1.5h-1.5zM394.7,308.8h1.5v1.5h-1.5zM394.7,317.6h1.5v1.5h-1.5zM394.7,326.4h1.5v1.5h-1.5zM394.7,335.2h1.5v1.5h-1.5zM394.7,344.0h1.5v1.5h-1.5zM394.7,352.8h1.5v1.5h-1.5zM394.7,361.6h1.5v1.5h-1.5zM394.7,370.4h1.5v1.5h-1.5zM394.7,379.2h1.5v1.5h-1.5zM394.7,388.0h1.5v1.5h-1.5zM394.7,396.8h1.5v1.5h-1.5zM394.7,405.6h1.5v1.5h-1.5zM394.7,414.4h1.5v1.5h-1.5zM394.7,423.2h1.5v1.5h-1.5zM394.7,432.0h1.5v1.5h-1.5zM394.7,440.8h1.5v1.5h-1.5zM394.7,449.6h1.5v1.5h-1.5zM394.7,458.3h1.5v1.5h-1.5zM394.7,467.1h1.5v1.5h-1.5zM394.7,475.9h1.5v1.5h-1.5zM394.7,484.7h1.5v1.5h-1.5zM394.7,493.5h1.5v1.5h-1.5zM403.5,89.0h1.5v1.5h-1.5zM403.5,97.8h1.5v1.5h-1.5zM403.5,106.5h1.5v1.5h-1.5zM403.5,115.3h1.5v1.5h-1.5zM403.5,124.1h1.5v1.5h-1.5zM403.5,132.9h1.5v1.5h-1.5zM403.5,141.7h1.5v1.5h-1.5zM403.5,150.5h1.5v1.5h-1.5zM403.5,159.3h1.5v1.5h-1.5zM403.5,168.1h1.5v1.5h-1.5zM403.5,176.9h1.5v1.5h-1.5zM403.5,185.7h1.5v1.5h-1.5zM403.5,194.5h1.5v1.5h-1.5zM403.5,203.3h1.5v1.5h-1.5zM403.5,212.1h1.5v1.5h-1.5zM403.5,220.9h1.5v1.5h-1.5zM403.5,229.7h1.5v1.5h-1.5zM403.5,238.5h1.5v1.5h-1.5zM403.5,247.3h1.5v1.5h-1.5zM403.5,256.1h1.5v1.5h-1.5zM403.5,264.9h1.5v1.5h-1.5zM403.5,273.6h1.5v1.5h-1.5zM403.5,282.4h1.5v1.5h-1.5zM403.5,291.2h1.5v1.5h-1.5zM403.5,300.0h1.5v1.5h-1.5zM403.5,308.8h1.5v1.5h-1.5zM403.5,317.6h1.5v1.5h-1.5zM403.5,326.4h1.5v1.5h-1.5zM403.5,335.2h1.5v1.5h-1.5zM403.5,344.0h1.5v1.5h-1.5zM403.5,352.8h1.5v1.5h-1.5zM403.5,361.6h1.5v1.5h-1.5zM403.5,370.4h1.5v1.5h-1.5zM403.5,379.2h1.5v1.5h-1.5zM403.5,388.0h1.5v1.5h-1.5zM403.5,396.8h1.5v1.5h-1.5zM403.5,405.6h1.5v1.5h-1.5zM403.5,414.4h1.5v1.5h-1.5zM403.5,423.2h1.5v1.5h-1.5zM403.5,432.0h1.5v1.5h-1.5zM403.5,440.8h1.5v1.5h-1.5zM403.5,449.6h1.5v1.5h-1.5zM403.5,458.3h1.5v1.5h-1.5zM403.5,467.1h1.5v1.5h-1.5zM403.5,475.9h1.5v1.5h-1.5zM403.5,484.7h1.5v1.5h-1.5zM403.5,493.5h1.5v1.5h-1.5zM412.3,89.0h1.5v1.5h-1.5zM412.3,97.8h1.5v1.5h-1.5zM412.3,106.5h1.5v1.5h-1.5zM412.3,115.3h1.5v1.5h-1.5zM412.3,124.1h1.5v1.5h-1.5zM412.3,132.9h1.5v1.5h-1.5zM412.3,141.7h1.5v1.5h-1.5zM412.3,150.5h1.5v1.5h-1.5zM412.3,159.3h1.5v1.5h-1.5zM412.3,168.1h1.5v1.5h-1.5zM412.3,176.9h1.5v1.5h-1.5zM412.3,185.7h1.5v1.5h-1.5zM412.3,194.5h1.5v1.5h-1.5zM412.3,203.3h1.5v1.5h-1.5zM412.3,212.1h1.5v1.5h-1.5zM412.3,220.9h1.5v1.5h-1.5zM412.3,229.7h1.5v1.5h-1.5zM412.3,238.5h1.5v1.5h-1.5zM412.3,247.3h1.5v1.5h-1.5zM412.3,256.1h1.5v1.5h-1.5zM412.3,264.9h1.5v1.5h-1.5zM412.3,273.6h1.5v1.5h-1.5zM412.3,282.4h1.5v1.5h-1.5zM412.3,291.2h1.5v1.5h-1.5zM412.3,300.0h1.5v1.5h-1.5zM412.3,308.8h1.5v1.5h-1.5zM412.3,317.6h1.5v1.5h-1.5zM412.3,326.4h1.5v1.5h-1.5zM412.3,335.2h1.5v1.5h-1.5zM412.3,344.0h1.5v1.5h-1.5zM412.3,352.8h1.5v1.5h-1.5zM412.3,361.6h1.5v1.5h-1.5zM412.3,370.4h1.5v1.5h-1.5zM412.3,379.2h1.5v1.5h-1.5zM412.3,388.0h1.5v1.5h-1.5zM412.3,396.8h1.5v1.5h-1.5zM412.3,405.6h1.5v1.5h-1.5zM412.3,414.4h1.5v1.5h-1.5zM412.3,423.2h1.5v1.5h-1.5zM412.3,432.0h1.5v1.5h-1.5zM412.3,440.8h1.5v1.5h-1.5zM412.3,449.6h1.5v1.5h-1.5zM412.3,458.3h1.5v1.5h-1.5zM412.3,467.1h1.5v1.5h-1.5zM412.3,475.9h1.5v1.5h-1.5zM412.3,484.7h1.5v1.5h-1.5zM412.3,493.5h1.5v1.5h-1.5zM421.1,89.0h1.5v1.5h-1.5zM421.1,97.8h1.5v1.5h-1.5zM421.1,106.5h1.5v1.5h-1.5zM421.1,115.3h1.5v1.5h-1.5zM421.1,124.1h1.5v1.5h-1.5zM421.1,132.9h1.5v1.5h-1.5zM421.1,141.7h1.5v1.5h-1.5zM421.1,150.5h1.5v1.5h-1.5zM421.1,159.3h1.5v1.5h-1.5zM421.1,168.1h1.5v1.5h-1.5zM421.1,176.9h1.5v1.5h-1.5zM421.1,185.7h1.5v1.5h-1.5zM421.1,194.5h1.5v1.5h-1.5zM421.1,203.3h1.5v1.5h-1.5zM421.1,212.1h1.5v1.5h-1.5zM421.1,220.9h1.5v1.5h-1.5zM421.1,229.7h1.5v1.5h-1.5zM421.1,238.5h1.5v1.5h-1.5zM421.1,247.3h1.5v1.5h-1.5zM421.1,256.1h1.5v1.5h-1.5zM421.1,264.9h1.5v1.5h-1.5zM421.1,273.6h1.5v1.5h-1.5zM421.1,282.4h1.5v1.5h-1.5zM421.1,291.2h1.5v1.5h-1.5zM421.1,300.0h1.5v1.5h-1.5zM421.1,308.8h1.5v1.5h-1.5zM421.1,317.6h1.5v1.5h-1.5zM421.1,326.4h1.5v1.5h-1.5zM421.1,335.2h1.5v1.5h-1.5zM421.1,344.0h1.5v1.5h-1.5zM421.1,352.8h1.5v1.5h-1.5zM421.1,361.6h1.5v1.5h-1.5zM421.1,370.4h1.5v1.5h-1.5zM421.1,379.2h1.5v1.5h-1.5zM421.1,388.0h1.5v1.5h-1.5zM421.1,396.8h1.5v1.5h-1.5zM421.1,405.6h1.5v1.5h-1.5zM421.1,414.4h1.5v1.5h-1.5zM421.1,423.2h1.5v1.5h-1.5zM421.1,432.0h1.5v1.5h-1.5zM421.1,440.8h1.5v1.5h-1.5zM421.1,449.6h1.5v1.5h-1.5zM421.1,458.3h1.5v1.5h-1.5zM421.1,467.1h1.5v1.5h-1.5zM421.1,475.9h1.5v1.5h-1.5zM421.1,484.7h1.5v1.5h-1.5zM421.1,493.5h1.5v1.5h-1.5zM429.9,89.0h1.5v1.5h-1.5zM429.9,97.8h1.5v1.5h-1.5zM429.9,106.5h1.5v1.5h-1.5zM429.9,115.3h1.5v1.5h-1.5zM429.9,124.1h1.5v1.5h-1.5zM429.9,132.9h1.5v1.5h-1.5zM429.9,141.7h1.5v1.5h-1.5zM429.9,150.5h1.5v1.5h-1.5zM429.9,159.3h1.5v1.5h-1.5zM429.9,168.1h1.5v1.5h-1.5zM429.9,176.9h1.5v1.5h-1.5zM429.9,185.7h1.5v1.5h-1.5zM429.9,194.5h1.5v1.5h-1.5zM429.9,203.3h1.5v1.5h-1.5zM429.9,212.1h1.5v1.5h-1.5zM429.9,220.9h1.5v1.5h-1.5zM429.9,229.7h1.5v1.5h-1.5zM429.9,238.5h1.5v1.5h-1.5zM429.9,247.3h1.5v1.5h-1.5zM429.9,256.1h1.5v1.5h-1.5zM429.9,264.9h1.5v1.5h-1.5zM429.9,273.6h1.5v1.5h-1.5zM429.9,282.4h1.5v1.5h-1.5zM429.9,291.2h1.5v1.5h-1.5zM429.9,300.0h1.5v1.5h-1.5zM429.9,308.8h1.5v1.5h-1.5zM429.9,317.6h1.5v1.5h-1.5zM429.9,326.4h1.5v1.5h-1.5zM429.9,335.2h1.5v1.5h-1.5zM429.9,344.0h1.5v1.5h-1.5zM429.9,352.8h1.5v1.5h-1.5zM429.9,361.6h1.5v1.5h-1.5zM429.9,370.4h1.5v1.5h-1.5zM429.9,379.2h1.5v1.5h-1.5zM429.9,388.0h1.5v1.5h-1.5zM429.9,396.8h1.5v1.5h-1.5zM429.9,405.6h1.5v1.5h-1.5zM429.9,414.4h1.5v1.5h-1.5zM429.9,423.2h1.5v1.5h-1.5zM429.9,432.0h1.5v1.5h-1.5zM429.9,440.8h1.5v1.5h-1.5zM429.9,449.6h1.5v1.5h-1.5zM429.9,458.3h1.5v1.5h-1.5zM429.9,467.1h1.5v1.5h-1.5zM429.9,475.9h1.5v1.5h-1.5zM429.9,484.7h1.5v1.5h-1.5zM429.9,493.5h1.5v1.5h-1.5zM438.7,89.0h1.5v1.5h-1.5zM438.7,97.8h1.5v1.5h-1.5zM438.7,106.5h1.5v1.5h-1.5zM438.7,115.3h1.5v1.5h-1.5zM438.7,124.1h1.5v1.5h-1.5zM438.7,132.9h1.5v1.5h-1.5zM438.7,141.7h1.5v1.5h-1.5zM438.7,150.5h1.5v1.5h-1.5zM438.7,159.3h1.5v1.5h-1.5zM438.7,168.1h1.5v1.5h-1.5zM438.7,176.9h1.5v1.5h-1.5zM438.7,185.7h1.5v1.5h-1.5zM438.7,194.5h1.5v1.5h-1.5zM438.7,203.3h1.5v1.5h-1.5zM438.7,212.1h1.5v1.5h-1.5zM438.7,220.9h1.5v1.5h-1.5zM438.7,229.7h1.5v1.5h-1.5zM438.7,238.5h1.5v1.5h-1.5zM438.7,247.3h1.5v1.5h-1.5zM438.7,256.1h1.5v1.5h-1.5zM438.7,264.9h1.5v1.5h-1.5zM438.7,273.6h1.5v1.5h-1.5zM438.7,282.4h1.5v1.5h-1.5zM438.7,291.2h1.5v1.5h-1.5zM438.7,300.0h1.5v1.5h-1.5zM438.7,308.8h1.5v1.5h-1.5zM438.7,317.6h1.5v1.5h-1.5zM438.7,326.4h1.5v1.5h-1.5zM438.7,335.2h1.5v1.5h-1.5zM438.7,344.0h1.5v1.5h-1.5zM438.7,352.8h1.5v1.5h-1.5zM438.7,361.6h1.5v1.5h-1.5zM438.7,370.4h1.5v1.5h-1.5zM438.7,379.2h1.5v1.5h-1.5zM438.7,388.0h1.5v1.5h-1.5zM438.7,396.8h1.5v1.5h-1.5zM438.7,405.6h1.5v1.5h-1.5zM438.7,414.4h1.5v1.5h-1.5zM438.7,423.2h1.5v1.5h-1.5zM438.7,432.0h1.5v1.5h-1.5zM438.7,440.8h1.5v1.5h-1.5zM438.7,449.6h1.5v1.5h-1.5zM438.7,458.3h1.5v1.5h-1.5zM438.7,467.1h1.5v1.5h-1.5zM438.7,475.9h1.5v1.5h-1.5zM438.7,484.7h1.5v1.5h-1.5zM438.7,493.5h1.5v1.5h-1.5zM447.5,89.0h1.5v1.5h-1.5zM447.5,97.8h1.5v1.5h-1.5zM447.5,106.5h1.5v1.5h-1.5zM447.5,115.3h1.5v1.5h-1.5zM447.5,124.1h1.5v1.5h-1.5zM447.5,132.9h1.5v1.5h-1.5zM447.5,141.7h1.5v1.5h-1.5zM447.5,150.5h1.5v1.5h-1.5zM447.5,159.3h1.5v1.5h-1.5zM447.5,168.1h1.5v1.5h-1.5zM447.5,176.9h1.5v1.5h-1.5zM447.5,185.7h1.5v1.5h-1.5zM447.5,194.5h1.5v1.5h-1.5zM447.5,203.3h1.5v1.5h-1.5zM447.5,212.1h1.5v1.5h-1.5zM447.5,220.9h1.5v1.5h-1.5zM447.5,229.7h1.5v1.5h-1.5zM447.5,238.5h1.5v1.5h-1.5zM447.5,247.3h1.5v1.5h-1.5zM447.5,256.1h1.5v1.5h-1.5zM447.5,264.9h1.5v1.5h-1.5zM447.5,273.6h1.5v1.5h-1.5zM447.5,282.4h1.5v1.5h-1.5zM447.5,291.2h1.5v1.5h-1.5zM447.5,300.0h1.5v1.5h-1.5zM447.5,308.8h1.5v1.5h-1.5zM447.5,317.6h1.5v1.5h-1.5zM447.5,326.4h1.5v1.5h-1.5zM447.5,335.2h1.5v1.5h-1.5zM447.5,344.0h1.5v1.5h-1.5zM447.5,352.8h1.5v1.5h-1.5zM447.5,361.6h1.5v1.5h-1.5zM447.5,370.4h1.5v1.5h-1.5zM447.5,379.2h1.5v1.5h-1.5zM447.5,388.0h1.5v1.5h-1.5zM447.5,396.8h1.5v1.5h-1.5zM447.5,405.6h1.5v1.5h-1.5zM447.5,414.4h1.5v1.5h-1.5zM447.5,423.2h1.5v1.5h-1.5zM447.5,432.0h1.5v1.5h-1.5zM447.5,440.8h1.5v1.5h-1.5zM447.5,449.6h1.5v1.5h-1.5zM447.5,458.3h1.5v1.5h-1.5zM447.5,467.1h1.5v1.5h-1.5zM447.5,475.9h1.5v1.5h-1.5zM447.5,484.7h1.5v1.5h-1.5zM447.5,493.5h1.5v1.5h-1.5zM456.3,89.0h1.5v1.5h-1.5zM456.3,97.8h1.5v1.5h-1.5zM456.3,106.5h1.5v1.5h-1.5zM456.3,115.3h1.5v1.5h-1.5zM456.3,124.1h1.5v1.5h-1.5zM456.3,132.9h1.5v1.5h-1.5zM456.3,141.7h1.5v1.5h-1.5zM456.3,150.5h1.5v1.5h-1.5zM456.3,159.3h1.5v1.5h-1.5zM456.3,168.1h1.5v1.5h-1.5zM456.3,176.9h1.5v1.5h-1.5zM456.3,185.7h1.5v1.5h-1.5zM456.3,194.5h1.5v1.5h-1.5zM456.3,203.3h1.5v1.5h-1.5zM456.3,212.1h1.5v1.5h-1.5zM456.3,220.9h1.5v1.5h-1.5zM456.3,229.7h1.5v1.5h-1.5zM456.3,238.5h1.5v1.5h-1.5zM456.3,247.3h1.5v1.5h-1.5zM456.3,256.1h1.5v1.5h-1.5zM456.3,264.9h1.5v1.5h-1.5zM456.3,273.6h1.5v1.5h-1.5zM456.3,282.4h1.5v1.5h-1.5zM456.3,291.2h1.5v1.5h-1.5zM456.3,300.0h1.5v1.5h-1.5zM456.3,308.8h1.5v1.5h-1.5zM456.3,317.6h1.5v1.5h-1.5zM456.3,326.4h1.5v1.5h-1.5zM456.3,335.2h1.5v1.5h-1.5zM456.3,344.0h1.5v1.5h-1.5zM456.3,352.8h1.5v1.5h-1.5zM456.3,361.6h1.5v1.5h-1.5zM456.3,370.4h1.5v1.5h-1.5zM456.3,379.2h1.5v1.5h-1.5zM456.3,388.0h1.5v1.5h-1.5zM456.3,396.8h1.5v1.5h-1.5zM456.3,405.6h1.5v1.5h-1.5zM456.3,414.4h1.5v1.5h-1.5zM456.3,423.2h1.5v1.5h-1.5zM456.3,432.0h1.5v1.5h-1.5zM456.3,440.8h1.5v1.5h-1.5zM456.3,449.6h1.5v1.5h-1.5zM456.3,458.3h1.5v1.5h-1.5zM456.3,467.1h1.5v1.5h-1.5zM456.3,475.9h1.5v1.5h-1.5zM456.3,484.7h1.5v1.5h-1.5zM456.3,493.5h1.5v1.5h-1.5zM465.1,89.0h1.5v1.5h-1.5zM465.1,97.8h1.5v1.5h-1.5zM465.1,106.5h1.5v1.5h-1.5zM465.1,115.3h1.5v1.5h-1.5zM465.1,124.1h1.5v1.5h-1.5zM465.1,132.9h1.5v1.5h-1.5zM465.1,141.7h1.5v1.5h-1.5zM465.1,150.5h1.5v1.5h-1.5zM465.1,159.3h1.5v1.5h-1.5zM465.1,168.1h1.5v1.5h-1.5zM465.1,176.9h1.5v1.5h-1.5zM465.1,185.7h1.5v1.5h-1.5zM465.1,194.5h1.5v1.5h-1.5zM465.1,203.3h1.5v1.5h-1.5zM465.1,212.1h1.5v1.5h-1.5zM465.1,220.9h1.5v1.5h-1.5zM465.1,229.7h1.5v1.5h-1.5zM465.1,238.5h1.5v1.5h-1.5zM465.1,247.3h1.5v1.5h-1.5zM465.1,256.1h1.5v1.5h-1.5zM465.1,264.9h1.5v1.5h-1.5zM465.1,273.6h1.5v1.5h-1.5zM465.1,282.4h1.5v1.5h-1.5zM465.1,291.2h1.5v1.5h-1.5zM465.1,300.0h1.5v1.5h-1.5zM465.1,308.8h1.5v1.5h-1.5zM465.1,317.6h1.5v1.5h-1.5zM465.1,326.4h1.5v1.5h-1.5zM465.1,335.2h1.5v1.5h-1.5zM465.1,344.0h1.5v1.5h-1.5zM465.1,352.8h1.5v1.5h-1.5zM465.1,361.6h1.5v1.5h-1.5zM465.1,370.4h1.5v1.5h-1.5zM465.1,379.2h1.5v1.5h-1.5zM465.1,388.0h1.5v1.5h-1.5zM465.1,396.8h1.5v1.5h-1.5zM465.1,405.6h1.5v1.5h-1.5zM465.1,414.4h1.5v1.5h-1.5zM465.1,423.2h1.5v1.5h-1.5zM465.1,432.0h1.5v1.5h-1.5zM465.1,440.8h1.5v1.5h-1.5zM465.1,449.6h1.5v1.5h-1.5zM465.1,458.3h1.5v1.5h-1.5zM465.1,467.1h1.5v1.5h-1.5zM465.1,475.9h1.5v1.5h-1.5zM465.1,484.7h1.5v1.5h-1.5zM465.1,493.5h1.5v1.5h-1.5zM473.8,89.0h1.5v1.5h-1.5zM473.8,97.8h1.5v1.5h-1.5zM473.8,106.5h1.5v1.5h-1.5zM473.8,115.3h1.5v1.5h-1.5zM473.8,124.1h1.5v1.5h-1.5zM473.8,132.9h1.5v1.5h-1.5zM473.8,141.7h1.5v1.5h-1.5zM473.8,150.5h1.5v1.5h-1.5zM473.8,159.3h1.5v1.5h-1.5zM473.8,168.1h1.5v1.5h-1.5zM473.8,176.9h1.5v1.5h-1.5zM473.8,185.7h1.5v1.5h-1.5zM473.8,194.5h1.5v1.5h-1.5zM473.8,203.3h1.5v1.5h-1.5zM473.8,212.1h1.5v1.5h-1.5zM473.8,220.9h1.5v1.5h-1.5zM473.8,229.7h1.5v1.5h-1.5zM473.8,238.5h1.5v1.5h-1.5zM473.8,247.3h1.5v1.5h-1.5zM473.8,256.1h1.5v1.5h-1.5zM473.8,264.9h1.5v1.5h-1.5zM473.8,273.6h1.5v1.5h-1.5zM473.8,282.4h1.5v1.5h-1.5zM473.8,291.2h1.5v1.5h-1.5zM473.8,300.0h1.5v1.5h-1.5zM473.8,308.8h1.5v1.5h-1.5zM473.8,317.6h1.5v1.5h-1.5zM473.8,326.4h1.5v1.5h-1.5zM473.8,335.2h1.5v1.5h-1.5zM473.8,344.0h1.5v1.5h-1.5zM473.8,352.8h1.5v1.5h-1.5zM473.8,361.6h1.5v1.5h-1.5zM473.8,370.4h1.5v1.5h-1.5zM473.8,379.2h1.5v1.5h-1.5zM473.8,388.0h1.5v1.5h-1.5zM473.8,396.8h1.5v1.5h-1.5zM473.8,405.6h1.5v1.5h-1.5zM473.8,414.4h1.5v1.5h-1.5zM473.8,423.2h1.5v1.5h-1.5zM473.8,432.0h1.5v1.5h-1.5zM473.8,440.8h1.5v1.5h-1.5zM473.8,449.6h1.5v1.5h-1.5zM473.8,458.3h1.5v1.5h-1.5zM473.8,467.1h1.5v1.5h-1.5zM473.8,475.9h1.5v1.5h-1.5zM473.8,484.7h1.5v1.5h-1.5zM473.8,493.5h1.5v1.5h-1.5zM482.6,89.0h1.5v1.5h-1.5zM482.6,97.8h1.5v1.5h-1.5zM482.6,106.5h1.5v1.5h-1.5zM482.6,115.3h1.5v1.5h-1.5zM482.6,124.1h1.5v1.5h-1.5zM482.6,132.9h1.5v1.5h-1.5zM482.6,141.7h1.5v1.5h-1.5zM482.6,150.5h1.5v1.5h-1.5zM482.6,159.3h1.5v1.5h-1.5zM482.6,168.1h1.5v1.5h-1.5zM482.6,176.9h1.5v1.5h-1.5zM482.6,185.7h1.5v1.5h-1.5zM482.6,194.5h1.5v1.5h-1.5zM482.6,203.3h1.5v1.5h-1.5zM482.6,212.1h1.5v1.5h-1.5zM482.6,220.9h1.5v1.5h-1.5zM482.6,229.7h1.5v1.5h-1.5zM482.6,238.5h1.5v1.5h-1.5zM482.6,247.3h1.5v1.5h-1.5zM482.6,256.1h1.5v1.5h-1.5zM482.6,264.9h1.5v1.5h-1.5zM482.6,273.6h1.5v1.5h-1.5zM482.6,282.4h1.5v1.5h-1.5zM482.6,291.2h1.5v1.5h-1.5zM482.6,300.0h1.5v1.5h-1.5zM482.6,308.8h1.5v1.5h-1.5zM482.6,317.6h1.5v1.5h-1.5zM482.6,326.4h1.5v1.5h-1.5zM482.6,335.2h1.5v1.5h-1.5zM482.6,344.0h1.5v1.5h-1.5zM482.6,352.8h1.5v1.5h-1.5zM482.6,361.6h1.5v1.5h-1.5zM482.6,370.4h1.5v1.5h-1.5zM482.6,379.2h1.5v1.5h-1.5zM482.6,388.0h1.5v1.5h-1.5zM482.6,396.8h1.5v1.5h-1.5zM482.6,405.6h1.5v1.5h-1.5zM482.6,414.4h1.5v1.5h-1.5zM482.6,423.2h1.5v1.5h-1.5zM482.6,432.0h1.5v1.5h-1.5zM482.6,440.8h1.5v1.5h-1.5zM482.6,449.6h1.5v1.5h-1.5zM482.6,458.3h1.5v1.5h-1.5zM482.6,467.1h1.5v1.5h-1.5zM482.6,475.9h1.5v1.5h-1.5zM482.6,484.7h1.5v1.5h-1.5zM482.6,493.5h1.5v1.5h-1.5zM491.4,89.0h1.5v1.5h-1.5zM491.4,97.8h1.5v1.5h-1.5zM491.4,106.5h1.5v1.5h-1.5zM491.4,115.3h1.5v1.5h-1.5zM491.4,124.1h1.5v1.5h-1.5zM491.4,132.9h1.5v1.5h-1.5zM491.4,141.7h1.5v1.5h-1.5zM491.4,150.5h1.5v1.5h-1.5zM491.4,159.3h1.5v1.5h-1.5zM491.4,168.1h1.5v1.5h-1.5zM491.4,176.9h1.5v1.5h-1.5zM491.4,185.7h1.5v1.5h-1.5zM491.4,194.5h1.5v1.5h-1.5zM491.4,203.3h1.5v1.5h-1.5zM491.4,212.1h1.5v1.5h-1.5zM491.4,220.9h1.5v1.5h-1.5zM491.4,229.7h1.5v1.5h-1.5zM491.4,238.5h1.5v1.5h-1.5zM491.4,247.3h1.5v1.5h-1.5zM491.4,256.1h1.5v1.5h-1.5zM491.4,264.9h1.5v1.5h-1.5zM491.4,273.6h1.5v1.5h-1.5zM491.4,282.4h1.5v1.5h-1.5zM491.4,291.2h1.5v1.5h-1.5zM491.4,300.0h1.5v1.5h-1.5zM491.4,308.8h1.5v1.5h-1.5zM491.4,317.6h1.5v1.5h-1.5zM491.4,326.4h1.5v1.5h-1.5zM491.4,335.2h1.5v1.5h-1.5zM491.4,344.0h1.5v1.5h-1.5zM491.4,352.8h1.5v1.5h-1.5zM491.4,361.6h1.5v1.5h-1.5zM491.4,370.4h1.5v1.5h-1.5zM491.4,379.2h1.5v1.5h-1.5zM491.4,388.0h1.5v1.5h-1.5zM491.4,396.8h1.5v1.5h-1.5zM491.4,405.6h1.5v1.5h-1.5zM491.4,414.4h1.5v1.5h-1.5zM491.4,423.2h1.5v1.5h-1.5zM491.4,432.0h1.5v1.5h-1.5zM491.4,440.8h1.5v1.5h-1.5zM491.4,449.6h1.5v1.5h-1.5zM491.4,458.3h1.5v1.5h-1.5zM491.4,467.1h1.5v1.5h-1.5zM491.4,475.9h1.5v1.5h-1.5zM491.4,484.7h1.5v1.5h-1.5zM491.4,493.5h1.5v1.5h-1.5zM500.2,89.0h1.5v1.5h-1.5zM500.2,97.8h1.5v1.5h-1.5zM500.2,106.5h1.5v1.5h-1.5zM500.2,115.3h1.5v1.5h-1.5zM500.2,124.1h1.5v1.5h-1.5zM500.2,132.9h1.5v1.5h-1.5zM500.2,141.7h1.5v1.5h-1.5zM500.2,150.5h1.5v1.5h-1.5zM500.2,159.3h1.5v1.5h-1.5zM500.2,168.1h1.5v1.5h-1.5zM500.2,176.9h1.5v1.5h-1.5zM500.2,185.7h1.5v1.5h-1.5zM500.2,194.5h1.5v1.5h-1.5zM500.2,203.3h1.5v1.5h-1.5zM500.2,212.1h1.5v1.5h-1.5zM500.2,220.9h1.5v1.5h-1.5zM500.2,229.7h1.5v1.5h-1.5zM500.2,238.5h1.5v1.5h-1.5zM500.2,247.3h1.5v1.5h-1.5zM500.2,256.1h1.5v1.5h-1.5zM500.2,264.9h1.5v1.5h-1.5zM500.2,273.6h1.5v1.5h-1.5zM500.2,282.4h1.5v1.5h-1.5zM500.2,291.2h1.5v1.5h-1.5zM500.2,300.0h1.5v1.5h-1.5zM500.2,308.8h1.5v1.5h-1.5zM500.2,317.6h1.5v1.5h-1.5zM500.2,326.4h1.5v1.5h-1.5zM500.2,335.2h1.5v1.5h-1.5zM500.2,344.0h1.5v1.5h-1.5zM500.2,352.8h1.5v1.5h-1.5zM500.2,361.6h1.5v1.5h-1.5zM500.2,370.4h1.5v1.5h-1.5zM500.2,379.2h1.5v1.5h-1.5zM500.2,388.0h1.5v1.5h-1.5zM500.2,396.8h1.5v1.5h-1.5zM500.2,405.6h1.5v1.5h-1.5zM500.2,414.4h1.5v1.5h-1.5zM500.2,423.2h1.5v1.5h-1.5zM500.2,432.0h1.5v1.5h-1.5zM500.2,440.8h1.5v1.5h-1.5zM500.2,449.6h1.5v1.5h-1.5zM500.2,458.3h1.5v1.5h-1.5zM500.2,467.1h1.5v1.5h-1.5zM500.2,475.9h1.5v1.5h-1.5zM500.2,484.7h1.5v1.5h-1.5zM500.2,493.5h1.5v1.5h-1.5zM509.0,89.0h1.5v1.5h-1.5zM509.0,97.8h1.5v1.5h-1.5zM509.0,106.5h1.5v1.5h-1.5zM509.0,115.3h1.5v1.5h-1.5zM509.0,124.1h1.5v1.5h-1.5zM509.0,132.9h1.5v1.5h-1.5zM509.0,141.7h1.5v1.5h-1.5zM509.0,150.5h1.5v1.5h-1.5zM509.0,159.3h1.5v1.5h-1.5zM509.0,168.1h1.5v1.5h-1.5zM509.0,176.9h1.5v1.5h-1.5zM509.0,185.7h1.5v1.5h-1.5zM509.0,194.5h1.5v1.5h-1.5zM509.0,203.3h1.5v1.5h-1.5zM509.0,212.1h1.5v1.5h-1.5zM509.0,220.9h1.5v1.5h-1.5zM509.0,229.7h1.5v1.5h-1.5zM509.0,238.5h1.5v1.5h-1.5zM509.0,247.3h1.5v1.5h-1.5zM509.0,256.1h1.5v1.5h-1.5zM509.0,264.9h1.5v1.5h-1.5zM509.0,273.6h1.5v1.5h-1.5zM509.0,282.4h1.5v1.5h-1.5zM509.0,291.2h1.5v1.5h-1.5zM509.0,300.0h1.5v1.5h-1.5zM509.0,308.8h1.5v1.5h-1.5zM509.0,317.6h1.5v1.5h-1.5zM509.0,326.4h1.5v1.5h-1.5zM509.0,335.2h1.5v1.5h-1.5zM509.0,344.0h1.5v1.5h-1.5zM509.0,352.8h1.5v1.5h-1.5zM509.0,361.6h1.5v1.5h-1.5zM509.0,370.4h1.5v1.5h-1.5zM509.0,379.2h1.5v1.5h-1.5zM509.0,388.0h1.5v1.5h-1.5zM509.0,396.8h1.5v1.5h-1.5zM509.0,405.6h1.5v1.5h-1.5zM509.0,414.4h1.5v1.5h-1.5zM509.0,423.2h1.5v1.5h-1.5zM509.0,432.0h1.5v1.5h-1.5zM509.0,440.8h1.5v1.5h-1.5zM509.0,449.6h1.5v1.5h-1.5zM509.0,458.3h1.5v1.5h-1.5zM509.0,467.1h1.5v1.5h-1.5zM509.0,475.9h1.5v1.5h-1.5zM509.0,484.7h1.5v1.5h-1.5zM509.0,493.5h1.5v1.5h-1.5zM517.8,89.0h1.5v1.5h-1.5zM517.8,97.8h1.5v1.5h-1.5zM517.8,106.5h1.5v1.5h-1.5zM517.8,115.3h1.5v1.5h-1.5zM517.8,124.1h1.5v1.5h-1.5zM517.8,132.9h1.5v1.5h-1.5zM517.8,141.7h1.5v1.5h-1.5zM517.8,150.5h1.5v1.5h-1.5zM517.8,159.3h1.5v1.5h-1.5zM517.8,168.1h1.5v1.5h-1.5zM517.8,176.9h1.5v1.5h-1.5zM517.8,185.7h1.5v1.5h-1.5zM517.8,194.5h1.5v1.5h-1.5zM517.8,203.3h1.5v1.5h-1.5zM517.8,212.1h1.5v1.5h-1.5zM517.8,220.9h1.5v1.5h-1.5zM517.8,229.7h1.5v1.5h-1.5zM517.8,238.5h1.5v1.5h-1.5zM517.8,247.3h1.5v1.5h-1.5zM517.8,256.1h1.5v1.5h-1.5zM517.8,264.9h1.5v1.5h-1.5zM517.8,273.6h1.5v1.5h-1.5zM517.8,282.4h1.5v1.5h-1.5zM517.8,291.2h1.5v1.5h-1.5zM517.8,300.0h1.5v1.5h-1.5zM517.8,308.8h1.5v1.5h-1.5zM517.8,317.6h1.5v1.5h-1.5zM517.8,326.4h1.5v1.5h-1.5zM517.8,335.2h1.5v1.5h-1.5zM517.8,344.0h1.5v1.5h-1.5zM517.8,352.8h1.5v1.5h-1.5zM517.8,361.6h1.5v1.5h-1.5zM517.8,370.4h1.5v1.5h-1.5zM517.8,379.2h1.5v1.5h-1.5zM517.8,388.0h1.5v1.5h-1.5zM517.8,396.8h1.5v1.5h-1.5zM517.8,405.6h1.5v1.5h-1.5zM517.8,414.4h1.5v1.5h-1.5zM517.8,423.2h1.5v1.5h-1.5zM517.8,432.0h1.5v1.5h-1.5zM517.8,440.8h1.5v1.5h-1.5zM517.8,449.6h1.5v1.5h-1.5zM517.8,458.3h1.5v1.5h-1.5zM517.8,467.1h1.5v1.5h-1.5zM517.8,475.9h1.5v1.5h-1.5zM517.8,484.7h1.5v1.5h-1.5zM517.8,493.5h1.5v1.5h-1.5zM526.6,89.0h1.5v1.5h-1.5zM526.6,97.8h1.5v1.5h-1.5zM526.6,106.5h1.5v1.5h-1.5zM526.6,115.3h1.5v1.5h-1.5zM526.6,124.1h1.5v1.5h-1.5zM526.6,132.9h1.5v1.5h-1.5zM526.6,141.7h1.5v1.5h-1.5zM526.6,150.5h1.5v1.5h-1.5zM526.6,159.3h1.5v1.5h-1.5zM526.6,168.1h1.5v1.5h-1.5zM526.6,176.9h1.5v1.5h-1.5zM526.6,185.7h1.5v1.5h-1.5zM526.6,194.5h1.5v1.5h-1.5zM526.6,203.3h1.5v1.5h-1.5zM526.6,212.1h1.5v1.5h-1.5zM526.6,220.9h1.5v1.5h-1.5zM526.6,229.7h1.5v1.5h-1.5zM526.6,238.5h1.5v1.5h-1.5zM526.6,247.3h1.5v1.5h-1.5zM526.6,256.1h1.5v1.5h-1.5zM526.6,264.9h1.5v1.5h-1.5zM526.6,273.6h1.5v1.5h-1.5zM526.6,282.4h1.5v1.5h-1.5zM526.6,291.2h1.5v1.5h-1.5zM526.6,300.0h1.5v1.5h-1.5zM526.6,308.8h1.5v1.5h-1.5zM526.6,317.6h1.5v1.5h-1.5zM526.6,326.4h1.5v1.5h-1.5zM526.6,335.2h1.5v1.5h-1.5zM526.6,344.0h1.5v1.5h-1.5zM526.6,352.8h1.5v1.5h-1.5zM526.6,361.6h1.5v1.5h-1.5zM526.6,370.4h1.5v1.5h-1.5zM526.6,379.2h1.5v1.5h-1.5zM526.6,388.0h1.5v1.5h-1.5zM526.6,396.8h1.5v1.5h-1.5zM526.6,405.6h1.5v1.5h-1.5zM526.6,414.4h1.5v1.5h-1.5zM526.6,423.2h1.5v1.5h-1.5zM526.6,432.0h1.5v1.5h-1.5zM526.6,440.8h1.5v1.5h-1.5zM526.6,449.6h1.5v1.5h-1.5zM526.6,458.3h1.5v1.5h-1.5zM526.6,467.1h1.5v1.5h-1.5zM526.6,475.9h1.5v1.5h-1.5zM526.6,484.7h1.5v1.5h-1.5zM526.6,493.5h1.5v1.5h-1.5zM535.4,89.0h1.5v1.5h-1.5zM535.4,97.8h1.5v1.5h-1.5zM535.4,106.5h1.5v1.5h-1.5zM535.4,115.3h1.5v1.5h-1.5zM535.4,124.1h1.5v1.5h-1.5zM535.4,132.9h1.5v1.5h-1.5zM535.4,141.7h1.5v1.5h-1.5zM535.4,150.5h1.5v1.5h-1.5zM535.4,159.3h1.5v1.5h-1.5zM535.4,168.1h1.5v1.5h-1.5zM535.4,176.9h1.5v1.5h-1.5zM535.4,185.7h1.5v1.5h-1.5zM535.4,194.5h1.5v1.5h-1.5zM535.4,203.3h1.5v1.5h-1.5zM535.4,212.1h1.5v1.5h-1.5zM535.4,220.9h1.5v1.5h-1.5zM535.4,229.7h1.5v1.5h-1.5zM535.4,238.5h1.5v1.5h-1.5zM535.4,247.3h1.5v1.5h-1.5zM535.4,256.1h1.5v1.5h-1.5zM535.4,264.9h1.5v1.5h-1.5zM535.4,273.6h1.5v1.5h-1.5zM535.4,282.4h1.5v1.5h-1.5zM535.4,291.2h1.5v1.5h-1.5zM535.4,300.0h1.5v1.5h-1.5zM535.4,308.8h1.5v1.5h-1.5zM535.4,317.6h1.5v1.5h-1.5zM535.4,326.4h1.5v1.5h-1.5zM535.4,335.2h1.5v1.5h-1.5zM535.4,344.0h1.5v1.5h-1.5zM535.4,352.8h1.5v1.5h-1.5zM535.4,361.6h1.5v1.5h-1.5zM535.4,370.4h1.5v1.5h-1.5zM535.4,379.2h1.5v1.5h-1.5zM535.4,388.0h1.5v1.5h-1.5zM535.4,396.8h1.5v1.5h-1.5zM535.4,405.6h1.5v1.5h-1.5zM535.4,414.4h1.5v1.5h-1.5zM535.4,423.2h1.5v1.5h-1.5zM535.4,432.0h1.5v1.5h-1.5zM535.4,440.8h1.5v1.5h-1.5zM535.4,449.6h1.5v1.5h-1.5zM535.4,458.3h1.5v1.5h-1.5zM535.4,467.1h1.5v1.5h-1.5zM535.4,475.9h1.5v1.5h-1.5zM535.4,484.7h1.5v1.5h-1.5zM535.4,493.5h1.5v1.5h-1.5zM544.2,89.0h1.5v1.5h-1.5zM544.2,97.8h1.5v1.5h-1.5zM544.2,106.5h1.5v1.5h-1.5zM544.2,115.3h1.5v1.5h-1.5zM544.2,124.1h1.5v1.5h-1.5zM544.2,132.9h1.5v1.5h-1.5zM544.2,141.7h1.5v1.5h-1.5zM544.2,150.5h1.5v1.5h-1.5zM544.2,159.3h1.5v1.5h-1.5zM544.2,168.1h1.5v1.5h-1.5zM544.2,176.9h1.5v1.5h-1.5zM544.2,185.7h1.5v1.5h-1.5zM544.2,194.5h1.5v1.5h-1.5zM544.2,203.3h1.5v1.5h-1.5zM544.2,212.1h1.5v1.5h-1.5zM544.2,220.9h1.5v1.5h-1.5zM544.2,229.7h1.5v1.5h-1.5zM544.2,238.5h1.5v1.5h-1.5zM544.2,247.3h1.5v1.5h-1.5zM544.2,256.1h1.5v1.5h-1.5zM544.2,264.9h1.5v1.5h-1.5zM544.2,273.6h1.5v1.5h-1.5zM544.2,282.4h1.5v1.5h-1.5zM544.2,291.2h1.5v1.5h-1.5zM544.2,300.0h1.5v1.5h-1.5zM544.2,308.8h1.5v1.5h-1.5zM544.2,317.6h1.5v1.5h-1.5zM544.2,326.4h1.5v1.5h-1.5zM544.2,335.2h1.5v1.5h-1.5zM544.2,344.0h1.5v1.5h-1.5zM544.2,352.8h1.5v1.5h-1.5zM544.2,361.6h1.5v1.5h-1.5zM544.2,370.4h1.5v1.5h-1.5zM544.2,379.2h1.5v1.5h-1.5zM544.2,388.0h1.5v1.5h-1.5zM544.2,396.8h1.5v1.5h-1.5zM544.2,405.6h1.5v1.5h-1.5zM544.2,414.4h1.5v1.5h-1.5zM544.2,423.2h1.5v1.5h-1.5zM544.2,432.0h1.5v1.5h-1.5zM544.2,440.8h1.5v1.5h-1.5zM544.2,449.6h1.5v1.5h-1.5zM544.2,458.3h1.5v1.5h-1.5zM544.2,467.1h1.5v1.5h-1.5zM544.2,475.9h1.5v1.5h-1.5zM544.2,484.7h1.5v1.5h-1.5zM544.2,493.5h1.5v1.5h-1.5zM553.0,89.0h1.5v1.5h-1.5zM553.0,97.8h1.5v1.5h-1.5zM553.0,106.5h1.5v1.5h-1.5zM553.0,115.3h1.5v1.5h-1.5zM553.0,124.1h1.5v1.5h-1.5zM553.0,132.9h1.5v1.5h-1.5zM553.0,141.7h1.5v1.5h-1.5zM553.0,150.5h1.5v1.5h-1.5zM553.0,159.3h1.5v1.5h-1.5zM553.0,168.1h1.5v1.5h-1.5zM553.0,176.9h1.5v1.5h-1.5zM553.0,185.7h1.5v1.5h-1.5zM553.0,194.5h1.5v1.5h-1.5zM553.0,203.3h1.5v1.5h-1.5zM553.0,212.1h1.5v1.5h-1.5zM553.0,220.9h1.5v1.5h-1.5zM553.0,229.7h1.5v1.5h-1.5zM553.0,238.5h1.5v1.5h-1.5zM553.0,247.3h1.5v1.5h-1.5zM553.0,256.1h1.5v1.5h-1.5zM553.0,264.9h1.5v1.5h-1.5zM553.0,273.6h1.5v1.5h-1.5zM553.0,282.4h1.5v1.5h-1.5zM553.0,291.2h1.5v1.5h-1.5zM553.0,300.0h1.5v1.5h-1.5zM553.0,308.8h1.5v1.5h-1.5zM553.0,317.6h1.5v1.5h-1.5zM553.0,326.4h1.5v1.5h-1.5zM553.0,335.2h1.5v1.5h-1.5zM553.0,344.0h1.5v1.5h-1.5zM553.0,352.8h1.5v1.5h-1.5zM553.0,361.6h1.5v1.5h-1.5zM553.0,370.4h1.5v1.5h-1.5zM553.0,379.2h1.5v1.5h-1.5zM553.0,388.0h1.5v1.5h-1.5zM553.0,396.8h1.5v1.5h-1.5zM553.0,405.6h1.5v1.5h-1.5zM553.0,414.4h1.5v1.5h-1.5zM553.0,423.2h1.5v1.5h-1.5zM553.0,432.0h1.5v1.5h-1.5zM553.0,440.8h1.5v1.5h-1.5zM553.0,449.6h1.5v1.5h-1.5zM553.0,458.3h1.5v1.5h-1.5zM553.0,467.1h1.5v1.5h-1.5zM553.0,475.9h1.5v1.5h-1.5zM553.0,484.7h1.5v1.5h-1.5zM553.0,493.5h1.5v1.5h-1.5zM561.8,89.0h1.5v1.5h-1.5zM561.8,97.8h1.5v1.5h-1.5zM561.8,106.5h1.5v1.5h-1.5zM561.8,115.3h1.5v1.5h-1.5zM561.8,124.1h1.5v1.5h-1.5zM561.8,132.9h1.5v1.5h-1.5zM561.8,141.7h1.5v1.5h-1.5zM561.8,150.5h1.5v1.5h-1.5zM561.8,159.3h1.5v1.5h-1.5zM561.8,168.1h1.5v1.5h-1.5zM561.8,176.9h1.5v1.5h-1.5zM561.8,185.7h1.5v1.5h-1.5zM561.8,194.5h1.5v1.5h-1.5zM561.8,203.3h1.5v1.5h-1.5zM561.8,212.1h1.5v1.5h-1.5zM561.8,220.9h1.5v1.5h-1.5zM561.8,229.7h1.5v1.5h-1.5zM561.8,238.5h1.5v1.5h-1.5zM561.8,247.3h1.5v1.5h-1.5zM561.8,256.1h1.5v1.5h-1.5zM561.8,264.9h1.5v1.5h-1.5zM561.8,273.6h1.5v1.5h-1.5zM561.8,282.4h1.5v1.5h-1.5zM561.8,291.2h1.5v1.5h-1.5zM561.8,300.0h1.5v1.5h-1.5zM561.8,308.8h1.5v1.5h-1.5zM561.8,317.6h1.5v1.5h-1.5zM561.8,326.4h1.5v1.5h-1.5zM561.8,335.2h1.5v1.5h-1.5zM561.8,344.0h1.5v1.5h-1.5zM561.8,352.8h1.5v1.5h-1.5zM561.8,361.6h1.5v1.5h-1.5zM561.8,370.4h1.5v1.5h-1.5zM561.8,379.2h1.5v1.5h-1.5zM561.8,388.0h1.5v1.5h-1.5zM561.8,396.8h1.5v1.5h-1.5zM561.8,405.6h1.5v1.5h-1.5zM561.8,414.4h1.5v1.5h-1.5zM561.8,423.2h1.5v1.5h-1.5zM561.8,432.0h1.5v1.5h-1.5zM561.8,440.8h1.5v1.5h-1.5zM561.8,449.6h1.5v1.5h-1.5zM561.8,458.3h1.5v1.5h-1.5zM561.8,467.1h1.5v1.5h-1.5zM561.8,475.9h1.5v1.5h-1.5zM561.8,484.7h1.5v1.5h-1.5zM561.8,493.5h1.5v1.5h-1.5zM570.6,89.0h1.5v1.5h-1.5zM570.6,97.8h1.5v1.5h-1.5zM570.6,106.5h1.5v1.5h-1.5zM570.6,115.3h1.5v1.5h-1.5zM570.6,124.1h1.5v1.5h-1.5zM570.6,132.9h1.5v1.5h-1.5zM570.6,141.7h1.5v1.5h-1.5zM570.6,150.5h1.5v1.5h-1.5zM570.6,159.3h1.5v1.5h-1.5zM570.6,168.1h1.5v1.5h-1.5zM570.6,176.9h1.5v1.5h-1.5zM570.6,185.7h1.5v1.5h-1.5zM570.6,194.5h1.5v1.5h-1.5zM570.6,203.3h1.5v1.5h-1.5zM570.6,212.1h1.5v1.5h-1.5zM570.6,220.9h1.5v1.5h-1.5zM570.6,229.7h1.5v1.5h-1.5zM570.6,238.5h1.5v1.5h-1.5zM570.6,247.3h1.5v1.5h-1.5zM570.6,256.1h1.5v1.5h-1.5zM570.6,264.9h1.5v1.5h-1.5zM570.6,273.6h1.5v1.5h-1.5zM570.6,282.4h1.5v1.5h-1.5zM570.6,291.2h1.5v1.5h-1.5zM570.6,300.0h1.5v1.5h-1.5zM570.6,308.8h1.5v1.5h-1.5zM570.6,317.6h1.5v1.5h-1.5zM570.6,326.4h1.5v1.5h-1.5zM570.6,335.2h1.5v1.5h-1.5zM570.6,344.0h1.5v1.5h-1.5zM570.6,352.8h1.5v1.5h-1.5zM570.6,361.6h1.5v1.5h-1.5zM570.6,370.4h1.5v1.5h-1.5zM570.6,379.2h1.5v1.5h-1.5zM570.6,388.0h1.5v1.5h-1.5zM570.6,396.8h1.5v1.5h-1.5zM570.6,405.6h1.5v1.5h-1.5zM570.6,414.4h1.5v1.5h-1.5zM570.6,423.2h1.5v1.5h-1.5zM570.6,432.0h1.5v1.5h-1.5zM570.6,440.8h1.5v1.5h-1.5zM570.6,449.6h1.5v1.5h-1.5zM570.6,458.3h1.5v1.5h-1.5zM570.6,467.1h1.5v1.5h-1.5zM570.6,475.9h1.5v1.5h-1.5zM570.6,484.7h1.5v1.5h-1.5zM570.6,493.5h1.5v1.5h-1.5zM579.4,89.0h1.5v1.5h-1.5zM579.4,97.8h1.5v1.5h-1.5zM579.4,106.5h1.5v1.5h-1.5zM579.4,115.3h1.5v1.5h-1.5zM579.4,124.1h1.5v1.5h-1.5zM579.4,132.9h1.5v1.5h-1.5zM579.4,141.7h1.5v1.5h-1.5zM579.4,150.5h1.5v1.5h-1.5zM579.4,159.3h1.5v1.5h-1.5zM579.4,168.1h1.5v1.5h-1.5zM579.4,176.9h1.5v1.5h-1.5zM579.4,185.7h1.5v1.5h-1.5zM579.4,194.5h1.5v1.5h-1.5zM579.4,203.3h1.5v1.5h-1.5zM579.4,212.1h1.5v1.5h-1.5zM579.4,220.9h1.5v1.5h-1.5zM579.4,229.7h1.5v1.5h-1.5zM579.4,238.5h1.5v1.5h-1.5zM579.4,247.3h1.5v1.5h-1.5zM579.4,256.1h1.5v1.5h-1.5zM579.4,264.9h1.5v1.5h-1.5zM579.4,273.6h1.5v1.5h-1.5zM579.4,282.4h1.5v1.5h-1.5zM579.4,291.2h1.5v1.5h-1.5zM579.4,300.0h1.5v1.5h-1.5zM579.4,308.8h1.5v1.5h-1.5zM579.4,317.6h1.5v1.5h-1.5zM579.4,326.4h1.5v1.5h-1.5zM579.4,335.2h1.5v1.5h-1.5zM579.4,344.0h1.5v1.5h-1.5zM579.4,352.8h1.5v1.5h-1.5zM579.4,361.6h1.5v1.5h-1.5zM579.4,370.4h1.5v1.5h-1.5zM579.4,379.2h1.5v1.5h-1.5zM579.4,388.0h1.5v1.5h-1.5zM579.4,396.8h1.5v1.5h-1.5zM579.4,405.6h1.5v1.5h-1.5zM579.4,414.4h1.5v1.5h-1.5zM579.4,423.2h1.5v1.5h-1.5zM579.4,432.0h1.5v1.5h-1.5zM579.4,440.8h1.5v1.5h-1.5zM579.4,449.6h1.5v1.5h-1.5zM579.4,458.3h1.5v1.5h-1.5zM579.4,467.1h1.5v1.5h-1.5zM579.4,475.9h1.5v1.5h-1.5zM579.4,484.7h1.5v1.5h-1.5zM579.4,493.5h1.5v1.5h-1.5zM588.2,89.0h1.5v1.5h-1.5zM588.2,97.8h1.5v1.5h-1.5zM588.2,106.5h1.5v1.5h-1.5zM588.2,115.3h1.5v1.5h-1.5zM588.2,124.1h1.5v1.5h-1.5zM588.2,132.9h1.5v1.5h-1.5zM588.2,141.7h1.5v1.5h-1.5zM588.2,150.5h1.5v1.5h-1.5zM588.2,159.3h1.5v1.5h-1.5zM588.2,168.1h1.5v1.5h-1.5zM588.2,176.9h1.5v1.5h-1.5zM588.2,185.7h1.5v1.5h-1.5zM588.2,194.5h1.5v1.5h-1.5zM588.2,203.3h1.5v1.5h-1.5zM588.2,212.1h1.5v1.5h-1.5zM588.2,220.9h1.5v1.5h-1.5zM588.2,229.7h1.5v1.5h-1.5zM588.2,238.5h1.5v1.5h-1.5zM588.2,247.3h1.5v1.5h-1.5zM588.2,256.1h1.5v1.5h-1.5zM588.2,264.9h1.5v1.5h-1.5zM588.2,273.6h1.5v1.5h-1.5zM588.2,282.4h1.5v1.5h-1.5zM588.2,291.2h1.5v1.5h-1.5zM588.2,300.0h1.5v1.5h-1.5zM588.2,308.8h1.5v1.5h-1.5zM588.2,317.6h1.5v1.5h-1.5zM588.2,326.4h1.5v1.5h-1.5zM588.2,335.2h1.5v1.5h-1.5zM588.2,344.0h1.5v1.5h-1.5zM588.2,352.8h1.5v1.5h-1.5zM588.2,361.6h1.5v1.5h-1.5zM588.2,370.4h1.5v1.5h-1.5zM588.2,379.2h1.5v1.5h-1.5zM588.2,388.0h1.5v1.5h-1.5zM588.2,396.8h1.5v1.5h-1.5zM588.2,405.6h1.5v1.5h-1.5zM588.2,414.4h1.5v1.5h-1.5zM588.2,423.2h1.5v1.5h-1.5zM588.2,432.0h1.5v1.5h-1.5zM588.2,440.8h1.5v1.5h-1.5zM588.2,449.6h1.5v1.5h-1.5zM588.2,458.3h1.5v1.5h-1.5zM588.2,467.1h1.5v1.5h-1.5zM588.2,475.9h1.5v1.5h-1.5zM588.2,484.7h1.5v1.5h-1.5zM588.2,493.5h1.5v1.5h-1.5zM597.0,89.0h1.5v1.5h-1.5zM597.0,97.8h1.5v1.5h-1.5zM597.0,106.5h1.5v1.5h-1.5zM597.0,115.3h1.5v1.5h-1.5zM597.0,124.1h1.5v1.5h-1.5zM597.0,132.9h1.5v1.5h-1.5zM597.0,141.7h1.5v1.5h-1.5zM597.0,150.5h1.5v1.5h-1.5zM597.0,159.3h1.5v1.5h-1.5zM597.0,168.1h1.5v1.5h-1.5zM597.0,176.9h1.5v1.5h-1.5zM597.0,185.7h1.5v1.5h-1.5zM597.0,194.5h1.5v1.5h-1.5zM597.0,203.3h1.5v1.5h-1.5zM597.0,212.1h1.5v1.5h-1.5zM597.0,220.9h1.5v1.5h-1.5zM597.0,229.7h1.5v1.5h-1.5zM597.0,238.5h1.5v1.5h-1.5zM597.0,247.3h1.5v1.5h-1.5zM597.0,256.1h1.5v1.5h-1.5zM597.0,264.9h1.5v1.5h-1.5zM597.0,273.6h1.5v1.5h-1.5zM597.0,282.4h1.5v1.5h-1.5zM597.0,291.2h1.5v1.5h-1.5zM597.0,300.0h1.5v1.5h-1.5zM597.0,308.8h1.5v1.5h-1.5zM597.0,317.6h1.5v1.5h-1.5zM597.0,326.4h1.5v1.5h-1.5zM597.0,335.2h1.5v1.5h-1.5zM597.0,344.0h1.5v1.5h-1.5zM597.0,352.8h1.5v1.5h-1.5zM597.0,361.6h1.5v1.5h-1.5zM597.0,370.4h1.5v1.5h-1.5zM597.0,379.2h1.5v1.5h-1.5zM597.0,388.0h1.5v1.5h-1.5zM597.0,396.8h1.5v1.5h-1.5zM597.0,405.6h1.5v1.5h-1.5zM597.0,414.4h1.5v1.5h-1.5zM597.0,423.2h1.5v1.5h-1.5zM597.0,432.0h1.5v1.5h-1.5zM597.0,440.8h1.5v1.5h-1.5zM597.0,449.6h1.5v1.5h-1.5zM597.0,458.3h1.5v1.5h-1.5zM597.0,467.1h1.5v1.5h-1.5zM597.0,475.9h1.5v1.5h-1.5zM597.0,484.7h1.5v1.5h-1.5zM597.0,493.5h1.5v1.5h-1.5zM605.8,89.0h1.5v1.5h-1.5zM605.8,97.8h1.5v1.5h-1.5zM605.8,106.5h1.5v1.5h-1.5zM605.8,115.3h1.5v1.5h-1.5zM605.8,124.1h1.5v1.5h-1.5zM605.8,132.9h1.5v1.5h-1.5zM605.8,141.7h1.5v1.5h-1.5zM605.8,150.5h1.5v1.5h-1.5zM605.8,159.3h1.5v1.5h-1.5zM605.8,168.1h1.5v1.5h-1.5zM605.8,176.9h1.5v1.5h-1.5zM605.8,185.7h1.5v1.5h-1.5zM605.8,194.5h1.5v1.5h-1.5zM605.8,203.3h1.5v1.5h-1.5zM605.8,212.1h1.5v1.5h-1.5zM605.8,220.9h1.5v1.5h-1.5zM605.8,229.7h1.5v1.5h-1.5zM605.8,238.5h1.5v1.5h-1.5zM605.8,247.3h1.5v1.5h-1.5zM605.8,256.1h1.5v1.5h-1.5zM605.8,264.9h1.5v1.5h-1.5zM605.8,273.6h1.5v1.5h-1.5zM605.8,282.4h1.5v1.5h-1.5zM605.8,291.2h1.5v1.5h-1.5zM605.8,300.0h1.5v1.5h-1.5zM605.8,308.8h1.5v1.5h-1.5zM605.8,317.6h1.5v1.5h-1.5zM605.8,326.4h1.5v1.5h-1.5zM605.8,335.2h1.5v1.5h-1.5zM605.8,344.0h1.5v1.5h-1.5zM605.8,352.8h1.5v1.5h-1.5zM605.8,361.6h1.5v1.5h-1.5zM605.8,370.4h1.5v1.5h-1.5zM605.8,379.2h1.5v1.5h-1.5zM605.8,388.0h1.5v1.5h-1.5zM605.8,396.8h1.5v1.5h-1.5zM605.8,405.6h1.5v1.5h-1.5zM605.8,414.4h1.5v1.5h-1.5zM605.8,423.2h1.5v1.5h-1.5zM605.8,432.0h1.5v1.5h-1.5zM605.8,440.8h1.5v1.5h-1.5zM605.8,449.6h1.5v1.5h-1.5zM605.8,458.3h1.5v1.5h-1.5zM605.8,467.1h1.5v1.5h-1.5zM605.8,475.9h1.5v1.5h-1.5zM605.8,484.7h1.5v1.5h-1.5zM605.8,493.5h1.5v1.5h-1.5zM614.6,89.0h1.5v1.5h-1.5zM614.6,97.8h1.5v1.5h-1.5zM614.6,106.5h1.5v1.5h-1.5zM614.6,115.3h1.5v1.5h-1.5zM614.6,124.1h1.5v1.5h-1.5zM614.6,132.9h1.5v1.5h-1.5zM614.6,141.7h1.5v1.5h-1.5zM614.6,150.5h1.5v1.5h-1.5zM614.6,159.3h1.5v1.5h-1.5zM614.6,168.1h1.5v1.5h-1.5zM614.6,176.9h1.5v1.5h-1.5zM614.6,185.7h1.5v1.5h-1.5zM614.6,194.5h1.5v1.5h-1.5zM614.6,203.3h1.5v1.5h-1.5zM614.6,212.1h1.5v1.5h-1.5zM614.6,220.9h1.5v1.5h-1.5zM614.6,229.7h1.5v1.5h-1.5zM614.6,238.5h1.5v1.5h-1.5zM614.6,247.3h1.5v1.5h-1.5zM614.6,256.1h1.5v1.5h-1.5zM614.6,264.9h1.5v1.5h-1.5zM614.6,273.6h1.5v1.5h-1.5zM614.6,282.4h1.5v1.5h-1.5zM614.6,291.2h1.5v1.5h-1.5zM614.6,300.0h1.5v1.5h-1.5zM614.6,308.8h1.5v1.5h-1.5zM614.6,317.6h1.5v1.5h-1.5zM614.6,326.4h1.5v1.5h-1.5zM614.6,335.2h1.5v1.5h-1.5zM614.6,344.0h1.5v1.5h-1.5zM614.6,352.8h1.5v1.5h-1.5zM614.6,361.6h1.5v1.5h-1.5zM614.6,370.4h1.5v1.5h-1.5zM614.6,379.2h1.5v1.5h-1.5zM614.6,388.0h1.5v1.5h-1.5zM614.6,396.8h1.5v1.5h-1.5zM614.6,405.6h1.5v1.5h-1.5zM614.6,414.4h1.5v1.5h-1.5zM614.6,423.2h1.5v1.5h-1.5zM614.6,432.0h1.5v1.5h-1.5zM614.6,440.8h1.5v1.5h-1.5zM614.6,449.6h1.5v1.5h-1.5zM614.6,458.3h1.5v1.5h-1.5zM614.6,467.1h1.5v1.5h-1.5zM614.6,475.9h1.5v1.5h-1.5zM614.6,484.7h1.5v1.5h-1.5zM614.6,493.5h1.5v1.5h-1.5zM623.4,89.0h1.5v1.5h-1.5zM623.4,97.8h1.5v1.5h-1.5zM623.4,106.5h1.5v1.5h-1.5zM623.4,115.3h1.5v1.5h-1.5zM623.4,124.1h1.5v1.5h-1.5zM623.4,132.9h1.5v1.5h-1.5zM623.4,141.7h1.5v1.5h-1.5zM623.4,150.5h1.5v1.5h-1.5zM623.4,159.3h1.5v1.5h-1.5zM623.4,168.1h1.5v1.5h-1.5zM623.4,176.9h1.5v1.5h-1.5zM623.4,185.7h1.5v1.5h-1.5zM623.4,194.5h1.5v1.5h-1.5zM623.4,203.3h1.5v1.5h-1.5zM623.4,212.1h1.5v1.5h-1.5zM623.4,220.9h1.5v1.5h-1.5zM623.4,229.7h1.5v1.5h-1.5zM623.4,238.5h1.5v1.5h-1.5zM623.4,247.3h1.5v1.5h-1.5zM623.4,256.1h1.5v1.5h-1.5zM623.4,264.9h1.5v1.5h-1.5zM623.4,273.6h1.5v1.5h-1.5zM623.4,282.4h1.5v1.5h-1.5zM623.4,291.2h1.5v1.5h-1.5zM623.4,300.0h1.5v1.5h-1.5zM623.4,308.8h1.5v1.5h-1.5zM623.4,317.6h1.5v1.5h-1.5zM623.4,326.4h1.5v1.5h-1.5zM623.4,335.2h1.5v1.5h-1.5zM623.4,344.0h1.5v1.5h-1.5zM623.4,352.8h1.5v1.5h-1.5zM623.4,361.6h1.5v1.5h-1.5zM623.4,370.4h1.5v1.5h-1.5zM623.4,379.2h1.5v1.5h-1.5zM623.4,388.0h1.5v1.5h-1.5zM623.4,396.8h1.5v1.5h-1.5zM623.4,405.6h1.5v1.5h-1.5zM623.4,414.4h1.5v1.5h-1.5zM623.4,423.2h1.5v1.5h-1.5zM623.4,432.0h1.5v1.5h-1.5zM623.4,440.8h1.5v1.5h-1.5zM623.4,449.6h1.5v1.5h-1.5zM623.4,458.3h1.5v1.5h-1.5zM623.4,467.1h1.5v1.5h-1.5zM623.4,475.9h1.5v1.5h-1.5zM623.4,484.7h1.5v1.5h-1.5zM623.4,493.5h1.5v1.5h-1.5zM632.2,89.0h1.5v1.5h-1.5zM632.2,97.8h1.5v1.5h-1.5zM632.2,106.5h1.5v1.5h-1.5zM632.2,115.3h1.5v1.5h-1.5zM632.2,124.1h1.5v1.5h-1.5zM632.2,132.9h1.5v1.5h-1.5zM632.2,141.7h1.5v1.5h-1.5zM632.2,150.5h1.5v1.5h-1.5zM632.2,159.3h1.5v1.5h-1.5zM632.2,168.1h1.5v1.5h-1.5zM632.2,176.9h1.5v1.5h-1.5zM632.2,185.7h1.5v1.5h-1.5zM632.2,194.5h1.5v1.5h-1.5zM632.2,203.3h1.5v1.5h-1.5zM632.2,212.1h1.5v1.5h-1.5zM632.2,220.9h1.5v1.5h-1.5zM632.2,229.7h1.5v1.5h-1.5zM632.2,238.5h1.5v1.5h-1.5zM632.2,247.3h1.5v1.5h-1.5zM632.2,256.1h1.5v1.5h-1.5zM632.2,264.9h1.5v1.5h-1.5zM632.2,273.6h1.5v1.5h-1.5zM632.2,282.4h1.5v1.5h-1.5zM632.2,291.2h1.5v1.5h-1.5zM632.2,300.0h1.5v1.5h-1.5zM632.2,308.8h1.5v1.5h-1.5zM632.2,317.6h1.5v1.5h-1.5zM632.2,326.4h1.5v1.5h-1.5zM632.2,335.2h1.5v1.5h-1.5zM632.2,344.0h1.5v1.5h-1.5zM632.2,352.8h1.5v1.5h-1.5zM632.2,361.6h1.5v1.5h-1.5zM632.2,370.4h1.5v1.5h-1.5zM632.2,379.2h1.5v1.5h-1.5zM632.2,388.0h1.5v1.5h-1.5zM632.2,396.8h1.5v1.5h-1.5zM632.2,405.6h1.5v1.5h-1.5zM632.2,414.4h1.5v1.5h-1.5zM632.2,423.2h1.5v1.5h-1.5zM632.2,432.0h1.5v1.5h-1.5zM632.2,440.8h1.5v1.5h-1.5zM632.2,449.6h1.5v1.5h-1.5zM632.2,458.3h1.5v1.5h-1.5zM632.2,467.1h1.5v1.5h-1.5zM632.2,475.9h1.5v1.5h-1.5zM632.2,484.7h1.5v1.5h-1.5zM632.2,493.5h1.5v1.5h-1.5zM641.0,89.0h1.5v1.5h-1.5zM641.0,97.8h1.5v1.5h-1.5zM641.0,106.5h1.5v1.5h-1.5zM641.0,115.3h1.5v1.5h-1.5zM641.0,124.1h1.5v1.5h-1.5zM641.0,132.9h1.5v1.5h-1.5zM641.0,141.7h1.5v1.5h-1.5zM641.0,150.5h1.5v1.5h-1.5zM641.0,159.3h1.5v1.5h-1.5zM641.0,168.1h1.5v1.5h-1.5zM641.0,176.9h1.5v1.5h-1.5zM641.0,185.7h1.5v1.5h-1.5zM641.0,194.5h1.5v1.5h-1.5zM641.0,203.3h1.5v1.5h-1.5zM641.0,212.1h1.5v1.5h-1.5zM641.0,220.9h1.5v1.5h-1.5zM641.0,229.7h1.5v1.5h-1.5zM641.0,238.5h1.5v1.5h-1.5zM641.0,247.3h1.5v1.5h-1.5zM641.0,256.1h1.5v1.5h-1.5zM641.0,264.9h1.5v1.5h-1.5zM641.0,273.6h1.5v1.5h-1.5zM641.0,282.4h1.5v1.5h-1.5zM641.0,291.2h1.5v1.5h-1.5zM641.0,300.0h1.5v1.5h-1.5zM641.0,308.8h1.5v1.5h-1.5zM641.0,317.6h1.5v1.5h-1.5zM641.0,326.4h1.5v1.5h-1.5zM641.0,335.2h1.5v1.5h-1.5zM641.0,344.0h1.5v1.5h-1.5zM641.0,352.8h1.5v1.5h-1.5zM641.0,361.6h1.5v1.5h-1.5zM641.0,370.4h1.5v1.5h-1.5zM641.0,379.2h1.5v1.5h-1.5zM641.0,388.0h1.5v1.5h-1.5zM641.0,396.8h1.5v1.5h-1.5zM641.0,405.6h1.5v1.5h-1.5zM641.0,414.4h1.5v1.5h-1.5zM641.0,423.2h1.5v1.5h-1.5zM641.0,432.0h1.5v1.5h-1.5zM641.0,440.8h1.5v1.5h-1.5zM641.0,449.6h1.5v1.5h-1.5zM641.0,458.3h1.5v1.5h-1.5zM641.0,467.1h1.5v1.5h-1.5zM641.0,475.9h1.5v1.5h-1.5zM641.0,484.7h1.5v1.5h-1.5zM641.0,493.5h1.5v1.5h-1.5zM649.7,89.0h1.5v1.5h-1.5zM649.7,97.8h1.5v1.5h-1.5zM649.7,106.5h1.5v1.5h-1.5zM649.7,115.3h1.5v1.5h-1.5zM649.7,124.1h1.5v1.5h-1.5zM649.7,132.9h1.5v1.5h-1.5zM649.7,141.7h1.5v1.5h-1.5zM649.7,150.5h1.5v1.5h-1.5zM649.7,159.3h1.5v1.5h-1.5zM649.7,168.1h1.5v1.5h-1.5zM649.7,176.9h1.5v1.5h-1.5zM649.7,185.7h1.5v1.5h-1.5zM649.7,194.5h1.5v1.5h-1.5zM649.7,203.3h1.5v1.5h-1.5zM649.7,212.1h1.5v1.5h-1.5zM649.7,220.9h1.5v1.5h-1.5zM649.7,229.7h1.5v1.5h-1.5zM649.7,238.5h1.5v1.5h-1.5zM649.7,247.3h1.5v1.5h-1.5zM649.7,256.1h1.5v1.5h-1.5zM649.7,264.9h1.5v1.5h-1.5zM649.7,273.6h1.5v1.5h-1.5zM649.7,282.4h1.5v1.5h-1.5zM649.7,291.2h1.5v1.5h-1.5zM649.7,300.0h1.5v1.5h-1.5zM649.7,308.8h1.5v1.5h-1.5zM649.7,317.6h1.5v1.5h-1.5zM649.7,326.4h1.5v1.5h-1.5zM649.7,335.2h1.5v1.5h-1.5zM649.7,344.0h1.5v1.5h-1.5zM649.7,352.8h1.5v1.5h-1.5zM649.7,361.6h1.5v1.5h-1.5zM649.7,370.4h1.5v1.5h-1.5zM649.7,379.2h1.5v1.5h-1.5zM649.7,388.0h1.5v1.5h-1.5zM649.7,396.8h1.5v1.5h-1.5zM649.7,405.6h1.5v1.5h-1.5zM649.7,414.4h1.5v1.5h-1.5zM649.7,423.2h1.5v1.5h-1.5zM649.7,432.0h1.5v1.5h-1.5zM649.7,440.8h1.5v1.5h-1.5zM649.7,449.6h1.5v1.5h-1.5zM649.7,458.3h1.5v1.5h-1.5zM649.7,467.1h1.5v1.5h-1.5zM649.7,475.9h1.5v1.5h-1.5zM649.7,484.7h1.5v1.5h-1.5zM649.7,493.5h1.5v1.5h-1.5zM658.5,89.0h1.5v1.5h-1.5zM658.5,97.8h1.5v1.5h-1.5zM658.5,106.5h1.5v1.5h-1.5zM658.5,115.3h1.5v1.5h-1.5zM658.5,124.1h1.5v1.5h-1.5zM658.5,132.9h1.5v1.5h-1.5zM658.5,141.7h1.5v1.5h-1.5zM658.5,150.5h1.5v1.5h-1.5zM658.5,159.3h1.5v1.5h-1.5zM658.5,168.1h1.5v1.5h-1.5zM658.5,176.9h1.5v1.5h-1.5zM658.5,185.7h1.5v1.5h-1.5zM658.5,194.5h1.5v1.5h-1.5zM658.5,203.3h1.5v1.5h-1.5zM658.5,212.1h1.5v1.5h-1.5zM658.5,220.9h1.5v1.5h-1.5zM658.5,229.7h1.5v1.5h-1.5zM658.5,238.5h1.5v1.5h-1.5zM658.5,247.3h1.5v1.5h-1.5zM658.5,256.1h1.5v1.5h-1.5zM658.5,264.9h1.5v1.5h-1.5zM658.5,273.6h1.5v1.5h-1.5zM658.5,282.4h1.5v1.5h-1.5zM658.5,291.2h1.5v1.5h-1.5zM658.5,300.0h1.5v1.5h-1.5zM658.5,308.8h1.5v1.5h-1.5zM658.5,317.6h1.5v1.5h-1.5zM658.5,326.4h1.5v1.5h-1.5zM658.5,335.2h1.5v1.5h-1.5zM658.5,344.0h1.5v1.5h-1.5zM658.5,352.8h1.5v1.5h-1.5zM658.5,361.6h1.5v1.5h-1.5zM658.5,370.4h1.5v1.5h-1.5zM658.5,379.2h1.5v1.5h-1.5zM658.5,388.0h1.5v1.5h-1.5zM658.5,396.8h1.5v1.5h-1.5zM658.5,405.6h1.5v1.5h-1.5zM658.5,414.4h1.5v1.5h-1.5zM658.5,423.2h1.5v1.5h-1.5zM658.5,432.0h1.5v1.5h-1.5zM658.5,440.8h1.5v1.5h-1.5zM658.5,449.6h1.5v1.5h-1.5zM658.5,458.3h1.5v1.5h-1.5zM658.5,467.1h1.5v1.5h-1.5zM658.5,475.9h1.5v1.5h-1.5zM658.5,484.7h1.5v1.5h-1.5zM658.5,493.5h1.5v1.5h-1.5zM667.3,89.0h1.5v1.5h-1.5zM667.3,97.8h1.5v1.5h-1.5zM667.3,106.5h1.5v1.5h-1.5zM667.3,115.3h1.5v1.5h-1.5zM667.3,124.1h1.5v1.5h-1.5zM667.3,132.9h1.5v1.5h-1.5zM667.3,141.7h1.5v1.5h-1.5zM667.3,150.5h1.5v1.5h-1.5zM667.3,159.3h1.5v1.5h-1.5zM667.3,168.1h1.5v1.5h-1.5zM667.3,176.9h1.5v1.5h-1.5zM667.3,185.7h1.5v1.5h-1.5zM667.3,194.5h1.5v1.5h-1.5zM667.3,203.3h1.5v1.5h-1.5zM667.3,212.1h1.5v1.5h-1.5zM667.3,220.9h1.5v1.5h-1.5zM667.3,229.7h1.5v1.5h-1.5zM667.3,238.5h1.5v1.5h-1.5zM667.3,247.3h1.5v1.5h-1.5zM667.3,256.1h1.5v1.5h-1.5zM667.3,264.9h1.5v1.5h-1.5zM667.3,273.6h1.5v1.5h-1.5zM667.3,282.4h1.5v1.5h-1.5zM667.3,291.2h1.5v1.5h-1.5zM667.3,300.0h1.5v1.5h-1.5zM667.3,308.8h1.5v1.5h-1.5zM667.3,317.6h1.5v1.5h-1.5zM667.3,326.4h1.5v1.5h-1.5zM667.3,335.2h1.5v1.5h-1.5zM667.3,344.0h1.5v1.5h-1.5zM667.3,352.8h1.5v1.5h-1.5zM667.3,361.6h1.5v1.5h-1.5zM667.3,370.4h1.5v1.5h-1.5zM667.3,379.2h1.5v1.5h-1.5zM667.3,388.0h1.5v1.5h-1.5zM667.3,396.8h1.5v1.5h-1.5zM667.3,405.6h1.5v1.5h-1.5zM667.3,414.4h1.5v1.5h-1.5zM667.3,423.2h1.5v1.5h-1.5zM667.3,432.0h1.5v1.5h-1.5zM667.3,440.8h1.5v1.5h-1.5zM667.3,449.6h1.5v1.5h-1.5zM667.3,458.3h1.5v1.5h-1.5zM667.3,467.1h1.5v1.5h-1.5zM667.3,475.9h1.5v1.5h-1.5zM667.3,484.7h1.5v1.5h-1.5zM667.3,493.5h1.5v1.5h-1.5zM676.1,89.0h1.5v1.5h-1.5zM676.1,97.8h1.5v1.5h-1.5zM676.1,106.5h1.5v1.5h-1.5zM676.1,115.3h1.5v1.5h-1.5zM676.1,124.1h1.5v1.5h-1.5zM676.1,132.9h1.5v1.5h-1.5zM676.1,141.7h1.5v1.5h-1.5zM676.1,150.5h1.5v1.5h-1.5zM676.1,159.3h1.5v1.5h-1.5zM676.1,168.1h1.5v1.5h-1.5zM676.1,176.9h1.5v1.5h-1.5zM676.1,185.7h1.5v1.5h-1.5zM676.1,194.5h1.5v1.5h-1.5zM676.1,203.3h1.5v1.5h-1.5zM676.1,212.1h1.5v1.5h-1.5zM676.1,220.9h1.5v1.5h-1.5zM676.1,229.7h1.5v1.5h-1.5zM676.1,238.5h1.5v1.5h-1.5zM676.1,247.3h1.5v1.5h-1.5zM676.1,256.1h1.5v1.5h-1.5zM676.1,264.9h1.5v1.5h-1.5zM676.1,273.6h1.5v1.5h-1.5zM676.1,282.4h1.5v1.5h-1.5zM676.1,291.2h1.5v1.5h-1.5zM676.1,300.0h1.5v1.5h-1.5zM676.1,308.8h1.5v1.5h-1.5zM676.1,317.6h1.5v1.5h-1.5zM676.1,326.4h1.5v1.5h-1.5zM676.1,335.2h1.5v1.5h-1.5zM676.1,344.0h1.5v1.5h-1.5zM676.1,352.8h1.5v1.5h-1.5zM676.1,361.6h1.5v1.5h-1.5zM676.1,370.4h1.5v1.5h-1.5zM676.1,379.2h1.5v1.5h-1.5zM676.1,388.0h1.5v1.5h-1.5zM676.1,396.8h1.5v1.5h-1.5zM676.1,405.6h1.5v1.5h-1.5zM676.1,414.4h1.5v1.5h-1.5zM676.1,423.2h1.5v1.5h-1.5zM676.1,432.0h1.5v1.5h-1.5zM676.1,440.8h1.5v1.5h-1.5zM676.1,449.6h1.5v1.5h-1.5zM676.1,458.3h1.5v1.5h-1.5zM676.1,467.1h1.5v1.5h-1.5zM676.1,475.9h1.5v1.5h-1.5zM676.1,484.7h1.5v1.5h-1.5zM676.1,493.5h1.5v1.5h-1.5zM684.9,89.0h1.5v1.5h-1.5zM684.9,97.8h1.5v1.5h-1.5zM684.9,106.5h1.5v1.5h-1.5zM684.9,115.3h1.5v1.5h-1.5zM684.9,124.1h1.5v1.5h-1.5zM684.9,132.9h1.5v1.5h-1.5zM684.9,141.7h1.5v1.5h-1.5zM684.9,150.5h1.5v1.5h-1.5zM684.9,159.3h1.5v1.5h-1.5zM684.9,168.1h1.5v1.5h-1.5zM684.9,176.9h1.5v1.5h-1.5zM684.9,185.7h1.5v1.5h-1.5zM684.9,194.5h1.5v1.5h-1.5zM684.9,203.3h1.5v1.5h-1.5zM684.9,212.1h1.5v1.5h-1.5zM684.9,220.9h1.5v1.5h-1.5zM684.9,229.7h1.5v1.5h-1.5zM684.9,238.5h1.5v1.5h-1.5zM684.9,247.3h1.5v1.5h-1.5zM684.9,256.1h1.5v1.5h-1.5zM684.9,264.9h1.5v1.5h-1.5zM684.9,273.6h1.5v1.5h-1.5zM684.9,282.4h1.5v1.5h-1.5zM684.9,291.2h1.5v1.5h-1.5zM684.9,300.0h1.5v1.5h-1.5zM684.9,308.8h1.5v1.5h-1.5zM684.9,317.6h1.5v1.5h-1.5zM684.9,326.4h1.5v1.5h-1.5zM684.9,335.2h1.5v1.5h-1.5zM684.9,344.0h1.5v1.5h-1.5zM684.9,352.8h1.5v1.5h-1.5zM684.9,361.6h1.5v1.5h-1.5zM684.9,370.4h1.5v1.5h-1.5zM684.9,379.2h1.5v1.5h-1.5zM684.9,388.0h1.5v1.5h-1.5zM684.9,396.8h1.5v1.5h-1.5zM684.9,405.6h1.5v1.5h-1.5zM684.9,414.4h1.5v1.5h-1.5zM684.9,423.2h1.5v1.5h-1.5zM684.9,432.0h1.5v1.5h-1.5zM684.9,440.8h1.5v1.5h-1.5zM684.9,449.6h1.5v1.5h-1.5zM684.9,458.3h1.5v1.5h-1.5zM684.9,467.1h1.5v1.5h-1.5zM684.9,475.9h1.5v1.5h-1.5zM684.9,484.7h1.5v1.5h-1.5zM684.9,493.5h1.5v1.5h-1.5zM693.7,89.0h1.5v1.5h-1.5zM693.7,97.8h1.5v1.5h-1.5zM693.7,106.5h1.5v1.5h-1.5zM693.7,115.3h1.5v1.5h-1.5zM693.7,124.1h1.5v1.5h-1.5zM693.7,132.9h1.5v1.5h-1.5zM693.7,141.7h1.5v1.5h-1.5zM693.7,150.5h1.5v1.5h-1.5zM693.7,159.3h1.5v1.5h-1.5zM693.7,168.1h1.5v1.5h-1.5zM693.7,176.9h1.5v1.5h-1.5zM693.7,185.7h1.5v1.5h-1.5zM693.7,194.5h1.5v1.5h-1.5zM693.7,203.3h1.5v1.5h-1.5zM693.7,212.1h1.5v1.5h-1.5zM693.7,220.9h1.5v1.5h-1.5zM693.7,229.7h1.5v1.5h-1.5zM693.7,238.5h1.5v1.5h-1.5zM693.7,247.3h1.5v1.5h-1.5zM693.7,256.1h1.5v1.5h-1.5zM693.7,264.9h1.5v1.5h-1.5zM693.7,273.6h1.5v1.5h-1.5zM693.7,282.4h1.5v1.5h-1.5zM693.7,291.2h1.5v1.5h-1.5zM693.7,300.0h1.5v1.5h-1.5zM693.7,308.8h1.5v1.5h-1.5zM693.7,317.6h1.5v1.5h-1.5zM693.7,326.4h1.5v1.5h-1.5zM693.7,335.2h1.5v1.5h-1.5zM693.7,344.0h1.5v1.5h-1.5zM693.7,352.8h1.5v1.5h-1.5zM693.7,361.6h1.5v1.5h-1.5zM693.7,370.4h1.5v1.5h-1.5zM693.7,379.2h1.5v1.5h-1.5zM693.7,388.0h1.5v1.5h-1.5zM693.7,396.8h1.5v1.5h-1.5zM693.7,405.6h1.5v1.5h-1.5zM693.7,414.4h1.5v1.5h-1.5zM693.7,423.2h1.5v1.5h-1.5zM693.7,432.0h1.5v1.5h-1.5zM693.7,440.8h1.5v1.5h-1.5zM693.7,449.6h1.5v1.5h-1.5zM693.7,458.3h1.5v1.5h-1.5zM693.7,467.1h1.5v1.5h-1.5zM693.7,475.9h1.5v1.5h-1.5zM693.7,484.7h1.5v1.5h-1.5zM693.7,493.5h1.5v1.5h-1.5zM702.5,89.0h1.5v1.5h-1.5zM702.5,97.8h1.5v1.5h-1.5zM702.5,106.5h1.5v1.5h-1.5zM702.5,115.3h1.5v1.5h-1.5zM702.5,124.1h1.5v1.5h-1.5zM702.5,132.9h1.5v1.5h-1.5zM702.5,141.7h1.5v1.5h-1.5zM702.5,150.5h1.5v1.5h-1.5zM702.5,159.3h1.5v1.5h-1.5zM702.5,168.1h1.5v1.5h-1.5zM702.5,176.9h1.5v1.5h-1.5zM702.5,185.7h1.5v1.5h-1.5zM702.5,194.5h1.5v1.5h-1.5zM702.5,203.3h1.5v1.5h-1.5zM702.5,212.1h1.5v1.5h-1.5zM702.5,220.9h1.5v1.5h-1.5zM702.5,229.7h1.5v1.5h-1.5zM702.5,238.5h1.5v1.5h-1.5zM702.5,247.3h1.5v1.5h-1.5zM702.5,256.1h1.5v1.5h-1.5zM702.5,264.9h1.5v1.5h-1.5zM702.5,273.6h1.5v1.5h-1.5zM702.5,282.4h1.5v1.5h-1.5zM702.5,291.2h1.5v1.5h-1.5zM702.5,300.0h1.5v1.5h-1.5zM702.5,308.8h1.5v1.5h-1.5zM702.5,317.6h1.5v1.5h-1.5zM702.5,326.4h1.5v1.5h-1.5zM702.5,335.2h1.5v1.5h-1.5zM702.5,344.0h1.5v1.5h-1.5zM702.5,352.8h1.5v1.5h-1.5zM702.5,361.6h1.5v1.5h-1.5zM702.5,370.4h1.5v1.5h-1.5zM702.5,379.2h1.5v1.5h-1.5zM702.5,388.0h1.5v1.5h-1.5zM702.5,396.8h1.5v1.5h-1.5zM702.5,405.6h1.5v1.5h-1.5zM702.5,414.4h1.5v1.5h-1.5zM702.5,423.2h1.5v1.5h-1.5zM702.5,432.0h1.5v1.5h-1.5zM702.5,440.8h1.5v1.5h-1.5zM702.5,449.6h1.5v1.5h-1.5zM702.5,458.3h1.5v1.5h-1.5zM702.5,467.1h1.5v1.5h-1.5zM702.5,475.9h1.5v1.5h-1.5zM702.5,484.7h1.5v1.5h-1.5zM702.5,493.5h1.5v1.5h-1.5zM711.3,89.0h1.5v1.5h-1.5zM711.3,97.8h1.5v1.5h-1.5zM711.3,106.5h1.5v1.5h-1.5zM711.3,115.3h1.5v1.5h-1.5zM711.3,124.1h1.5v1.5h-1.5zM711.3,132.9h1.5v1.5h-1.5zM711.3,141.7h1.5v1.5h-1.5zM711.3,150.5h1.5v1.5h-1.5zM711.3,159.3h1.5v1.5h-1.5zM711.3,168.1h1.5v1.5h-1.5zM711.3,176.9h1.5v1.5h-1.5zM711.3,185.7h1.5v1.5h-1.5zM711.3,194.5h1.5v1.5h-1.5zM711.3,203.3h1.5v1.5h-1.5zM711.3,212.1h1.5v1.5h-1.5zM711.3,220.9h1.5v1.5h-1.5zM711.3,229.7h1.5v1.5h-1.5zM711.3,238.5h1.5v1.5h-1.5zM711.3,247.3h1.5v1.5h-1.5zM711.3,256.1h1.5v1.5h-1.5zM711.3,264.9h1.5v1.5h-1.5zM711.3,273.6h1.5v1.5h-1.5zM711.3,282.4h1.5v1.5h-1.5zM711.3,291.2h1.5v1.5h-1.5zM711.3,300.0h1.5v1.5h-1.5zM711.3,308.8h1.5v1.5h-1.5zM711.3,317.6h1.5v1.5h-1.5zM711.3,326.4h1.5v1.5h-1.5zM711.3,335.2h1.5v1.5h-1.5zM711.3,344.0h1.5v1.5h-1.5zM711.3,352.8h1.5v1.5h-1.5zM711.3,361.6h1.5v1.5h-1.5zM711.3,370.4h1.5v1.5h-1.5zM711.3,379.2h1.5v1.5h-1.5zM711.3,388.0h1.5v1.5h-1.5zM711.3,396.8h1.5v1.5h-1.5zM711.3,405.6h1.5v1.5h-1.5zM711.3,414.4h1.5v1.5h-1.5zM711.3,423.2h1.5v1.5h-1.5zM711.3,432.0h1.5v1.5h-1.5zM711.3,440.8h1.5v1.5h-1.5zM711.3,449.6h1.5v1.5h-1.5zM711.3,458.3h1.5v1.5h-1.5zM711.3,467.1h1.5v1.5h-1.5zM711.3,475.9h1.5v1.5h-1.5zM711.3,484.7h1.5v1.5h-1.5zM711.3,493.5h1.5v1.5h-1.5zM720.1,89.0h1.5v1.5h-1.5zM720.1,97.8h1.5v1.5h-1.5zM720.1,106.5h1.5v1.5h-1.5zM720.1,115.3h1.5v1.5h-1.5zM720.1,124.1h1.5v1.5h-1.5zM720.1,132.9h1.5v1.5h-1.5zM720.1,141.7h1.5v1.5h-1.5zM720.1,150.5h1.5v1.5h-1.5zM720.1,159.3h1.5v1.5h-1.5zM720.1,168.1h1.5v1.5h-1.5zM720.1,176.9h1.5v1.5h-1.5zM720.1,185.7h1.5v1.5h-1.5zM720.1,194.5h1.5v1.5h-1.5zM720.1,203.3h1.5v1.5h-1.5zM720.1,212.1h1.5v1.5h-1.5zM720.1,220.9h1.5v1.5h-1.5zM720.1,229.7h1.5v1.5h-1.5zM720.1,238.5h1.5v1.5h-1.5zM720.1,247.3h1.5v1.5h-1.5zM720.1,256.1h1.5v1.5h-1.5zM720.1,264.9h1.5v1.5h-1.5zM720.1,273.6h1.5v1.5h-1.5zM720.1,282.4h1.5v1.5h-1.5zM720.1,291.2h1.5v1.5h-1.5zM720.1,300.0h1.5v1.5h-1.5zM720.1,308.8h1.5v1.5h-1.5zM720.1,317.6h1.5v1.5h-1.5zM720.1,326.4h1.5v1.5h-1.5zM720.1,335.2h1.5v1.5h-1.5zM720.1,344.0h1.5v1.5h-1.5zM720.1,352.8h1.5v1.5h-1.5zM720.1,361.6h1.5v1.5h-1.5zM720.1,370.4h1.5v1.5h-1.5zM720.1,379.2h1.5v1.5h-1.5zM720.1,388.0h1.5v1.5h-1.5zM720.1,396.8h1.5v1.5h-1.5zM720.1,405.6h1.5v1.5h-1.5zM720.1,414.4h1.5v1.5h-1.5zM720.1,423.2h1.5v1.5h-1.5zM720.1,432.0h1.5v1.5h-1.5zM720.1,440.8h1.5v1.5h-1.5zM720.1,449.6h1.5v1.5h-1.5zM720.1,458.3h1.5v1.5h-1.5zM720.1,467.1h1.5v1.5h-1.5zM720.1,475.9h1.5v1.5h-1.5zM720.1,484.7h1.5v1.5h-1.5zM720.1,493.5h1.5v1.5h-1.5zM728.9,89.0h1.5v1.5h-1.5zM728.9,97.8h1.5v1.5h-1.5zM728.9,106.5h1.5v1.5h-1.5zM728.9,115.3h1.5v1.5h-1.5zM728.9,124.1h1.5v1.5h-1.5zM728.9,132.9h1.5v1.5h-1.5zM728.9,141.7h1.5v1.5h-1.5zM728.9,150.5h1.5v1.5h-1.5zM728.9,159.3h1.5v1.5h-1.5zM728.9,168.1h1.5v1.5h-1.5zM728.9,176.9h1.5v1.5h-1.5zM728.9,185.7h1.5v1.5h-1.5zM728.9,194.5h1.5v1.5h-1.5zM728.9,203.3h1.5v1.5h-1.5zM728.9,212.1h1.5v1.5h-1.5zM728.9,220.9h1.5v1.5h-1.5zM728.9,229.7h1.5v1.5h-1.5zM728.9,238.5h1.5v1.5h-1.5zM728.9,247.3h1.5v1.5h-1.5zM728.9,256.1h1.5v1.5h-1.5zM728.9,264.9h1.5v1.5h-1.5zM728.9,273.6h1.5v1.5h-1.5zM728.9,282.4h1.5v1.5h-1.5zM728.9,291.2h1.5v1.5h-1.5zM728.9,300.0h1.5v1.5h-1.5zM728.9,308.8h1.5v1.5h-1.5zM728.9,317.6h1.5v1.5h-1.5zM728.9,326.4h1.5v1.5h-1.5zM728.9,335.2h1.5v1.5h-1.5zM728.9,344.0h1.5v1.5h-1.5zM728.9,352.8h1.5v1.5h-1.5zM728.9,361.6h1.5v1.5h-1.5zM728.9,370.4h1.5v1.5h-1.5zM728.9,379.2h1.5v1.5h-1.5zM728.9,388.0h1.5v1.5h-1.5zM728.9,396.8h1.5v1.5h-1.5zM728.9,405.6h1.5v1.5h-1.5zM728.9,414.4h1.5v1.5h-1.5zM728.9,423.2h1.5v1.5h-1.5zM728.9,432.0h1.5v1.5h-1.5zM728.9,440.8h1.5v1.5h-1.5zM728.9,449.6h1.5v1.5h-1.5zM728.9,458.3h1.5v1.5h-1.5zM728.9,467.1h1.5v1.5h-1.5zM728.9,475.9h1.5v1.5h-1.5zM728.9,484.7h1.5v1.5h-1.5zM728.9,493.5h1.5v1.5h-1.5zM737.7,89.0h1.5v1.5h-1.5zM737.7,97.8h1.5v1.5h-1.5zM737.7,106.5h1.5v1.5h-1.5zM737.7,115.3h1.5v1.5h-1.5zM737.7,124.1h1.5v1.5h-1.5zM737.7,132.9h1.5v1.5h-1.5zM737.7,141.7h1.5v1.5h-1.5zM737.7,150.5h1.5v1.5h-1.5zM737.7,159.3h1.5v1.5h-1.5zM737.7,168.1h1.5v1.5h-1.5zM737.7,176.9h1.5v1.5h-1.5zM737.7,185.7h1.5v1.5h-1.5zM737.7,194.5h1.5v1.5h-1.5zM737.7,203.3h1.5v1.5h-1.5zM737.7,212.1h1.5v1.5h-1.5zM737.7,220.9h1.5v1.5h-1.5zM737.7,229.7h1.5v1.5h-1.5zM737.7,238.5h1.5v1.5h-1.5zM737.7,247.3h1.5v1.5h-1.5zM737.7,256.1h1.5v1.5h-1.5zM737.7,264.9h1.5v1.5h-1.5zM737.7,273.6h1.5v1.5h-1.5zM737.7,282.4h1.5v1.5h-1.5zM737.7,291.2h1.5v1.5h-1.5zM737.7,300.0h1.5v1.5h-1.5zM737.7,308.8h1.5v1.5h-1.5zM737.7,317.6h1.5v1.5h-1.5zM737.7,326.4h1.5v1.5h-1.5zM737.7,335.2h1.5v1.5h-1.5zM737.7,344.0h1.5v1.5h-1.5zM737.7,352.8h1.5v1.5h-1.5zM737.7,361.6h1.5v1.5h-1.5zM737.7,370.4h1.5v1.5h-1.5zM737.7,379.2h1.5v1.5h-1.5zM737.7,388.0h1.5v1.5h-1.5zM737.7,396.8h1.5v1.5h-1.5zM737.7,405.6h1.5v1.5h-1.5zM737.7,414.4h1.5v1.5h-1.5zM737.7,423.2h1.5v1.5h-1.5zM737.7,432.0h1.5v1.5h-1.5zM737.7,440.8h1.5v1.5h-1.5zM737.7,449.6h1.5v1.5h-1.5zM737.7,458.3h1.5v1.5h-1.5zM737.7,467.1h1.5v1.5h-1.5zM737.7,475.9h1.5v1.5h-1.5zM737.7,484.7h1.5v1.5h-1.5zM737.7,493.5h1.5v1.5h-1.5zM746.5,89.0h1.5v1.5h-1.5zM746.5,97.8h1.5v1.5h-1.5zM746.5,106.5h1.5v1.5h-1.5zM746.5,115.3h1.5v1.5h-1.5zM746.5,124.1h1.5v1.5h-1.5zM746.5,132.9h1.5v1.5h-1.5zM746.5,141.7h1.5v1.5h-1.5zM746.5,150.5h1.5v1.5h-1.5zM746.5,159.3h1.5v1.5h-1.5zM746.5,168.1h1.5v1.5h-1.5zM746.5,176.9h1.5v1.5h-1.5zM746.5,185.7h1.5v1.5h-1.5zM746.5,194.5h1.5v1.5h-1.5zM746.5,203.3h1.5v1.5h-1.5zM746.5,212.1h1.5v1.5h-1.5zM746.5,220.9h1.5v1.5h-1.5zM746.5,229.7h1.5v1.5h-1.5zM746.5,238.5h1.5v1.5h-1.5zM746.5,247.3h1.5v1.5h-1.5zM746.5,256.1h1.5v1.5h-1.5zM746.5,264.9h1.5v1.5h-1.5zM746.5,273.6h1.5v1.5h-1.5zM746.5,282.4h1.5v1.5h-1.5zM746.5,291.2h1.5v1.5h-1.5zM746.5,300.0h1.5v1.5h-1.5zM746.5,308.8h1.5v1.5h-1.5zM746.5,317.6h1.5v1.5h-1.5zM746.5,326.4h1.5v1.5h-1.5zM746.5,335.2h1.5v1.5h-1.5zM746.5,344.0h1.5v1.5h-1.5zM746.5,352.8h1.5v1.5h-1.5zM746.5,361.6h1.5v1.5h-1.5zM746.5,370.4h1.5v1.5h-1.5zM746.5,379.2h1.5v1.5h-1.5zM746.5,388.0h1.5v1.5h-1.5zM746.5,396.8h1.5v1.5h-1.5zM746.5,405.6h1.5v1.5h-1.5zM746.5,414.4h1.5v1.5h-1.5zM746.5,423.2h1.5v1.5h-1.5zM746.5,432.0h1.5v1.5h-1.5zM746.5,440.8h1.5v1.5h-1.5zM746.5,449.6h1.5v1.5h-1.5zM746.5,458.3h1.5v1.5h-1.5zM746.5,467.1h1.5v1.5h-1.5zM746.5,475.9h1.5v1.5h-1.5zM746.5,484.7h1.5v1.5h-1.5zM746.5,493.5h1.5v1.5h-1.5zM755.3,89.0h1.5v1.5h-1.5zM755.3,97.8h1.5v1.5h-1.5zM755.3,106.5h1.5v1.5h-1.5zM755.3,115.3h1.5v1.5h-1.5zM755.3,124.1h1.5v1.5h-1.5zM755.3,132.9h1.5v1.5h-1.5zM755.3,141.7h1.5v1.5h-1.5zM755.3,150.5h1.5v1.5h-1.5zM755.3,159.3h1.5v1.5h-1.5zM755.3,168.1h1.5v1.5h-1.5zM755.3,176.9h1.5v1.5h-1.5zM755.3,185.7h1.5v1.5h-1.5zM755.3,194.5h1.5v1.5h-1.5zM755.3,203.3h1.5v1.5h-1.5zM755.3,212.1h1.5v1.5h-1.5zM755.3,220.9h1.5v1.5h-1.5zM755.3,229.7h1.5v1.5h-1.5zM755.3,238.5h1.5v1.5h-1.5zM755.3,247.3h1.5v1.5h-1.5zM755.3,256.1h1.5v1.5h-1.5zM755.3,264.9h1.5v1.5h-1.5zM755.3,273.6h1.5v1.5h-1.5zM755.3,282.4h1.5v1.5h-1.5zM755.3,291.2h1.5v1.5h-1.5zM755.3,300.0h1.5v1.5h-1.5zM755.3,308.8h1.5v1.5h-1.5zM755.3,317.6h1.5v1.5h-1.5zM755.3,326.4h1.5v1.5h-1.5zM755.3,335.2h1.5v1.5h-1.5zM755.3,344.0h1.5v1.5h-1.5zM755.3,352.8h1.5v1.5h-1.5zM755.3,361.6h1.5v1.5h-1.5zM755.3,370.4h1.5v1.5h-1.5zM755.3,379.2h1.5v1.5h-1.5zM755.3,388.0h1.5v1.5h-1.5zM755.3,396.8h1.5v1.5h-1.5zM755.3,405.6h1.5v1.5h-1.5zM755.3,414.4h1.5v1.5h-1.5zM755.3,423.2h1.5v1.5h-1.5zM755.3,432.0h1.5v1.5h-1.5zM755.3,440.8h1.5v1.5h-1.5zM755.3,449.6h1.5v1.5h-1.5zM755.3,458.3h1.5v1.5h-1.5zM755.3,467.1h1.5v1.5h-1.5zM755.3,475.9h1.5v1.5h-1.5zM755.3,484.7h1.5v1.5h-1.5zM755.3,493.5h1.5v1.5h-1.5zM764.1,89.0h1.5v1.5h-1.5zM764.1,97.8h1.5v1.5h-1.5zM764.1,106.5h1.5v1.5h-1.5zM764.1,115.3h1.5v1.5h-1.5zM764.1,124.1h1.5v1.5h-1.5zM764.1,132.9h1.5v1.5h-1.5zM764.1,141.7h1.5v1.5h-1.5zM764.1,150.5h1.5v1.5h-1.5zM764.1,159.3h1.5v1.5h-1.5zM764.1,168.1h1.5v1.5h-1.5zM764.1,176.9h1.5v1.5h-1.5zM764.1,185.7h1.5v1.5h-1.5zM764.1,194.5h1.5v1.5h-1.5zM764.1,203.3h1.5v1.5h-1.5zM764.1,212.1h1.5v1.5h-1.5zM764.1,220.9h1.5v1.5h-1.5zM764.1,229.7h1.5v1.5h-1.5zM764.1,238.5h1.5v1.5h-1.5zM764.1,247.3h1.5v1.5h-1.5zM764.1,256.1h1.5v1.5h-1.5zM764.1,264.9h1.5v1.5h-1.5zM764.1,273.6h1.5v1.5h-1.5zM764.1,282.4h1.5v1.5h-1.5zM764.1,291.2h1.5v1.5h-1.5zM764.1,300.0h1.5v1.5h-1.5zM764.1,308.8h1.5v1.5h-1.5zM764.1,317.6h1.5v1.5h-1.5zM764.1,326.4h1.5v1.5h-1.5zM764.1,335.2h1.5v1.5h-1.5zM764.1,344.0h1.5v1.5h-1.5zM764.1,352.8h1.5v1.5h-1.5zM764.1,361.6h1.5v1.5h-1.5zM764.1,370.4h1.5v1.5h-1.5zM764.1,379.2h1.5v1.5h-1.5zM764.1,388.0h1.5v1.5h-1.5zM764.1,396.8h1.5v1.5h-1.5zM764.1,405.6h1.5v1.5h-1.5zM764.1,414.4h1.5v1.5h-1.5zM764.1,423.2h1.5v1.5h-1.5zM764.1,432.0h1.5v1.5h-1.5zM764.1,440.8h1.5v1.5h-1.5zM764.1,449.6h1.5v1.5h-1.5zM764.1,458.3h1.5v1.5h-1.5zM764.1,467.1h1.5v1.5h-1.5zM764.1,475.9h1.5v1.5h-1.5zM764.1,484.7h1.5v1.5h-1.5zM764.1,493.5h1.5v1.5h-1.5zM772.9,89.0h1.5v1.5h-1.5zM772.9,97.8h1.5v1.5h-1.5zM772.9,106.5h1.5v1.5h-1.5zM772.9,115.3h1.5v1.5h-1.5zM772.9,124.1h1.5v1.5h-1.5zM772.9,132.9h1.5v1.5h-1.5zM772.9,141.7h1.5v1.5h-1.5zM772.9,150.5h1.5v1.5h-1.5zM772.9,159.3h1.5v1.5h-1.5zM772.9,168.1h1.5v1.5h-1.5zM772.9,176.9h1.5v1.5h-1.5zM772.9,185.7h1.5v1.5h-1.5zM772.9,194.5h1.5v1.5h-1.5zM772.9,203.3h1.5v1.5h-1.5zM772.9,212.1h1.5v1.5h-1.5zM772.9,220.9h1.5v1.5h-1.5zM772.9,229.7h1.5v1.5h-1.5zM772.9,238.5h1.5v1.5h-1.5zM772.9,247.3h1.5v1.5h-1.5zM772.9,256.1h1.5v1.5h-1.5zM772.9,264.9h1.5v1.5h-1.5zM772.9,273.6h1.5v1.5h-1.5zM772.9,282.4h1.5v1.5h-1.5zM772.9,291.2h1.5v1.5h-1.5zM772.9,300.0h1.5v1.5h-1.5zM772.9,308.8h1.5v1.5h-1.5zM772.9,317.6h1.5v1.5h-1.5zM772.9,326.4h1.5v1.5h-1.5zM772.9,335.2h1.5v1.5h-1.5zM772.9,344.0h1.5v1.5h-1.5zM772.9,352.8h1.5v1.5h-1.5zM772.9,361.6h1.5v1.5h-1.5zM772.9,370.4h1.5v1.5h-1.5zM772.9,379.2h1.5v1.5h-1.5zM772.9,388.0h1.5v1.5h-1.5zM772.9,396.8h1.5v1.5h-1.5zM772.9,405.6h1.5v1.5h-1.5zM772.9,414.4h1.5v1.5h-1.5zM772.9,423.2h1.5v1.5h-1.5zM772.9,432.0h1.5v1.5h-1.5zM772.9,440.8h1.5v1.5h-1.5zM772.9,449.6h1.5v1.5h-1.5zM772.9,458.3h1.5v1.5h-1.5zM772.9,467.1h1.5v1.5h-1.5zM772.9,475.9h1.5v1.5h-1.5zM772.9,484.7h1.5v1.5h-1.5zM772.9,493.5h1.5v1.5h-1.5z" fill="#858585"/><rect x="140.0" y="123.0" width="527.0" height="343.5" fill="#000"/><line x1="176.8" y1="123.0" x2="176.8" y2="466.5" stroke="#606060" stroke-width="1" stroke-dasharray="1 1"/><line x1="372.8" y1="123.0" x2="372.8" y2="466.5" stroke="#606060" stroke-width="1" stroke-dasharray="1 1"/><line x1="568.8" y1="123.0" x2="568.8" y2="466.5" stroke="#606060" stroke-width="1" stroke-dasharray="1 1"/><line x1="140.0" y1="150.0" x2="667.0" y2="150.0" stroke="#606060" stroke-width="1" stroke-dasharray="1 1"/><line x1="140.0" y1="346.0" x2="667.0" y2="346.0" stroke="#606060" stroke-width="1" stroke-dasharray="1 1"/><path d="M156.5,129.7h1.5v1.5h-1.5zM156.5,149.2h1.5v1.5h-1.5zM156.5,168.8h1.5v1.5h-1.5zM156.5,188.4h1.5v1.5h-1.5zM156.5,208.1h1.5v1.5h-1.5zM156.5,227.7h1.5v1.5h-1.5zM156.5,247.2h1.5v1.5h-1.5zM156.5,266.9h1.5v1.5h-1.5zM156.5,286.5h1.5v1.5h-1.5zM156.5,306.1h1.5v1.5h-1.5zM156.5,325.6h1.5v1.5h-1.5zM156.5,345.2h1.5v1.5h-1.5zM156.5,364.9h1.5v1.5h-1.5zM156.5,384.5h1.5v1.5h-1.5zM156.5,404.1h1.5v1.5h-1.5zM156.5,423.7h1.5v1.5h-1.5zM156.5,443.2h1.5v1.5h-1.5zM156.5,462.9h1.5v1.5h-1.5zM176.1,129.7h1.5v1.5h-1.5zM176.1,149.2h1.5v1.5h-1.5zM176.1,168.8h1.5v1.5h-1.5zM176.1,188.4h1.5v1.5h-1.5zM176.1,208.1h1.5v1.5h-1.5zM176.1,227.7h1.5v1.5h-1.5zM176.1,247.2h1.5v1.5h-1.5zM176.1,266.9h1.5v1.5h-1.5zM176.1,286.5h1.5v1.5h-1.5zM176.1,306.1h1.5v1.5h-1.5zM176.1,325.6h1.5v1.5h-1.5zM176.1,345.2h1.5v1.5h-1.5zM176.1,364.9h1.5v1.5h-1.5zM176.1,384.5h1.5v1.5h-1.5zM176.1,404.1h1.5v1.5h-1.5zM176.1,423.7h1.5v1.5h-1.5zM176.1,443.2h1.5v1.5h-1.5zM176.1,462.9h1.5v1.5h-1.5zM195.7,129.7h1.5v1.5h-1.5zM195.7,149.2h1.5v1.5h-1.5zM195.7,168.8h1.5v1.5h-1.5zM195.7,188.4h1.5v1.5h-1.5zM195.7,208.1h1.5v1.5h-1.5zM195.7,227.7h1.5v1.5h-1.5zM195.7,247.2h1.5v1.5h-1.5zM195.7,266.9h1.5v1.5h-1.5zM195.7,286.5h1.5v1.5h-1.5zM195.7,306.1h1.5v1.5h-1.5zM195.7,325.6h1.5v1.5h-1.5zM195.7,345.2h1.5v1.5h-1.5zM195.7,364.9h1.5v1.5h-1.5zM195.7,384.5h1.5v1.5h-1.5zM195.7,404.1h1.5v1.5h-1.5zM195.7,423.7h1.5v1.5h-1.5zM195.7,443.2h1.5v1.5h-1.5zM195.7,462.9h1.5v1.5h-1.5zM215.2,129.7h1.5v1.5h-1.5zM215.2,149.2h1.5v1.5h-1.5zM215.2,168.8h1.5v1.5h-1.5zM215.2,188.4h1.5v1.5h-1.5zM215.2,208.1h1.5v1.5h-1.5zM215.2,227.7h1.5v1.5h-1.5zM215.2,247.2h1.5v1.5h-1.5zM215.2,266.9h1.5v1.5h-1.5zM215.2,286.5h1.5v1.5h-1.5zM215.2,306.1h1.5v1.5h-1.5zM215.2,325.6h1.5v1.5h-1.5zM215.2,345.2h1.5v1.5h-1.5zM215.2,364.9h1.5v1.5h-1.5zM215.2,384.5h1.5v1.5h-1.5zM215.2,404.1h1.5v1.5h-1.5zM215.2,423.7h1.5v1.5h-1.5zM215.2,443.2h1.5v1.5h-1.5zM215.2,462.9h1.5v1.5h-1.5zM234.9,129.7h1.5v1.5h-1.5zM234.9,149.2h1.5v1.5h-1.5zM234.9,168.8h1.5v1.5h-1.5zM234.9,188.4h1.5v1.5h-1.5zM234.9,208.1h1.5v1.5h-1.5zM234.9,227.7h1.5v1.5h-1.5zM234.9,247.2h1.5v1.5h-1.5zM234.9,266.9h1.5v1.5h-1.5zM234.9,286.5h1.5v1.5h-1.5zM234.9,306.1h1.5v1.5h-1.5zM234.9,325.6h1.5v1.5h-1.5zM234.9,345.2h1.5v1.5h-1.5zM234.9,364.9h1.5v1.5h-1.5zM234.9,384.5h1.5v1.5h-1.5zM234.9,404.1h1.5v1.5h-1.5zM234.9,423.7h1.5v1.5h-1.5zM234.9,443.2h1.5v1.5h-1.5zM234.9,462.9h1.5v1.5h-1.5zM254.5,129.7h1.5v1.5h-1.5zM254.5,149.2h1.5v1.5h-1.5zM254.5,168.8h1.5v1.5h-1.5zM254.5,188.4h1.5v1.5h-1.5zM254.5,208.1h1.5v1.5h-1.5zM254.5,227.7h1.5v1.5h-1.5zM254.5,247.2h1.5v1.5h-1.5zM254.5,266.9h1.5v1.5h-1.5zM254.5,286.5h1.5v1.5h-1.5zM254.5,306.1h1.5v1.5h-1.5zM254.5,325.6h1.5v1.5h-1.5zM254.5,345.2h1.5v1.5h-1.5zM254.5,364.9h1.5v1.5h-1.5zM254.5,384.5h1.5v1.5h-1.5zM254.5,404.1h1.5v1.5h-1.5zM254.5,423.7h1.5v1.5h-1.5zM254.5,443.2h1.5v1.5h-1.5zM254.5,462.9h1.5v1.5h-1.5zM274.1,129.7h1.5v1.5h-1.5zM274.1,149.2h1.5v1.5h-1.5zM274.1,168.8h1.5v1.5h-1.5zM274.1,188.4h1.5v1.5h-1.5zM274.1,208.1h1.5v1.5h-1.5zM274.1,227.7h1.5v1.5h-1.5zM274.1,247.2h1.5v1.5h-1.5zM274.1,266.9h1.5v1.5h-1.5zM274.1,286.5h1.5v1.5h-1.5zM274.1,306.1h1.5v1.5h-1.5zM274.1,325.6h1.5v1.5h-1.5zM274.1,345.2h1.5v1.5h-1.5zM274.1,364.9h1.5v1.5h-1.5zM274.1,384.5h1.5v1.5h-1.5zM274.1,404.1h1.5v1.5h-1.5zM274.1,423.7h1.5v1.5h-1.5zM274.1,443.2h1.5v1.5h-1.5zM274.1,462.9h1.5v1.5h-1.5zM293.7,129.7h1.5v1.5h-1.5zM293.7,149.2h1.5v1.5h-1.5zM293.7,168.8h1.5v1.5h-1.5zM293.7,188.4h1.5v1.5h-1.5zM293.7,208.1h1.5v1.5h-1.5zM293.7,227.7h1.5v1.5h-1.5zM293.7,247.2h1.5v1.5h-1.5zM293.7,266.9h1.5v1.5h-1.5zM293.7,286.5h1.5v1.5h-1.5zM293.7,306.1h1.5v1.5h-1.5zM293.7,325.6h1.5v1.5h-1.5zM293.7,345.2h1.5v1.5h-1.5zM293.7,364.9h1.5v1.5h-1.5zM293.7,384.5h1.5v1.5h-1.5zM293.7,404.1h1.5v1.5h-1.5zM293.7,423.7h1.5v1.5h-1.5zM293.7,443.2h1.5v1.5h-1.5zM293.7,462.9h1.5v1.5h-1.5zM313.2,129.7h1.5v1.5h-1.5zM313.2,149.2h1.5v1.5h-1.5zM313.2,168.8h1.5v1.5h-1.5zM313.2,188.4h1.5v1.5h-1.5zM313.2,208.1h1.5v1.5h-1.5zM313.2,227.7h1.5v1.5h-1.5zM313.2,247.2h1.5v1.5h-1.5zM313.2,266.9h1.5v1.5h-1.5zM313.2,286.5h1.5v1.5h-1.5zM313.2,306.1h1.5v1.5h-1.5zM313.2,325.6h1.5v1.5h-1.5zM313.2,345.2h1.5v1.5h-1.5zM313.2,364.9h1.5v1.5h-1.5zM313.2,384.5h1.5v1.5h-1.5zM313.2,404.1h1.5v1.5h-1.5zM313.2,423.7h1.5v1.5h-1.5zM313.2,443.2h1.5v1.5h-1.5zM313.2,462.9h1.5v1.5h-1.5zM332.9,129.7h1.5v1.5h-1.5zM332.9,149.2h1.5v1.5h-1.5zM332.9,168.8h1.5v1.5h-1.5zM332.9,188.4h1.5v1.5h-1.5zM332.9,208.1h1.5v1.5h-1.5zM332.9,227.7h1.5v1.5h-1.5zM332.9,247.2h1.5v1.5h-1.5zM332.9,266.9h1.5v1.5h-1.5zM332.9,286.5h1.5v1.5h-1.5zM332.9,306.1h1.5v1.5h-1.5zM332.9,325.6h1.5v1.5h-1.5zM332.9,345.2h1.5v1.5h-1.5zM332.9,364.9h1.5v1.5h-1.5zM332.9,384.5h1.5v1.5h-1.5zM332.9,404.1h1.5v1.5h-1.5zM332.9,423.7h1.5v1.5h-1.5zM332.9,443.2h1.5v1.5h-1.5zM332.9,462.9h1.5v1.5h-1.5zM352.5,129.7h1.5v1.5h-1.5zM352.5,149.2h1.5v1.5h-1.5zM352.5,168.8h1.5v1.5h-1.5zM352.5,188.4h1.5v1.5h-1.5zM352.5,208.1h1.5v1.5h-1.5zM352.5,227.7h1.5v1.5h-1.5zM352.5,247.2h1.5v1.5h-1.5zM352.5,266.9h1.5v1.5h-1.5zM352.5,286.5h1.5v1.5h-1.5zM352.5,306.1h1.5v1.5h-1.5zM352.5,325.6h1.5v1.5h-1.5zM352.5,345.2h1.5v1.5h-1.5zM352.5,364.9h1.5v1.5h-1.5zM352.5,384.5h1.5v1.5h-1.5zM352.5,404.1h1.5v1.5h-1.5zM352.5,423.7h1.5v1.5h-1.5zM352.5,443.2h1.5v1.5h-1.5zM352.5,462.9h1.5v1.5h-1.5zM372.1,129.7h1.5v1.5h-1.5zM372.1,149.2h1.5v1.5h-1.5zM372.1,168.8h1.5v1.5h-1.5zM372.1,188.4h1.5v1.5h-1.5zM372.1,208.1h1.5v1.5h-1.5zM372.1,227.7h1.5v1.5h-1.5zM372.1,247.2h1.5v1.5h-1.5zM372.1,266.9h1.5v1.5h-1.5zM372.1,286.5h1.5v1.5h-1.5zM372.1,306.1h1.5v1.5h-1.5zM372.1,325.6h1.5v1.5h-1.5zM372.1,345.2h1.5v1.5h-1.5zM372.1,364.9h1.5v1.5h-1.5zM372.1,384.5h1.5v1.5h-1.5zM372.1,404.1h1.5v1.5h-1.5zM372.1,423.7h1.5v1.5h-1.5zM372.1,443.2h1.5v1.5h-1.5zM372.1,462.9h1.5v1.5h-1.5zM391.7,129.7h1.5v1.5h-1.5zM391.7,149.2h1.5v1.5h-1.5zM391.7,168.8h1.5v1.5h-1.5zM391.7,188.4h1.5v1.5h-1.5zM391.7,208.1h1.5v1.5h-1.5zM391.7,227.7h1.5v1.5h-1.5zM391.7,247.2h1.5v1.5h-1.5zM391.7,266.9h1.5v1.5h-1.5zM391.7,286.5h1.5v1.5h-1.5zM391.7,306.1h1.5v1.5h-1.5zM391.7,325.6h1.5v1.5h-1.5zM391.7,345.2h1.5v1.5h-1.5zM391.7,364.9h1.5v1.5h-1.5zM391.7,384.5h1.5v1.5h-1.5zM391.7,404.1h1.5v1.5h-1.5zM391.7,423.7h1.5v1.5h-1.5zM391.7,443.2h1.5v1.5h-1.5zM391.7,462.9h1.5v1.5h-1.5zM411.2,129.7h1.5v1.5h-1.5zM411.2,149.2h1.5v1.5h-1.5zM411.2,168.8h1.5v1.5h-1.5zM411.2,188.4h1.5v1.5h-1.5zM411.2,208.1h1.5v1.5h-1.5zM411.2,227.7h1.5v1.5h-1.5zM411.2,247.2h1.5v1.5h-1.5zM411.2,266.9h1.5v1.5h-1.5zM411.2,286.5h1.5v1.5h-1.5zM411.2,306.1h1.5v1.5h-1.5zM411.2,325.6h1.5v1.5h-1.5zM411.2,345.2h1.5v1.5h-1.5zM411.2,364.9h1.5v1.5h-1.5zM411.2,384.5h1.5v1.5h-1.5zM411.2,404.1h1.5v1.5h-1.5zM411.2,423.7h1.5v1.5h-1.5zM411.2,443.2h1.5v1.5h-1.5zM411.2,462.9h1.5v1.5h-1.5zM430.9,129.7h1.5v1.5h-1.5zM430.9,149.2h1.5v1.5h-1.5zM430.9,168.8h1.5v1.5h-1.5zM430.9,188.4h1.5v1.5h-1.5zM430.9,208.1h1.5v1.5h-1.5zM430.9,227.7h1.5v1.5h-1.5zM430.9,247.2h1.5v1.5h-1.5zM430.9,266.9h1.5v1.5h-1.5zM430.9,286.5h1.5v1.5h-1.5zM430.9,306.1h1.5v1.5h-1.5zM430.9,325.6h1.5v1.5h-1.5zM430.9,345.2h1.5v1.5h-1.5zM430.9,364.9h1.5v1.5h-1.5zM430.9,384.5h1.5v1.5h-1.5zM430.9,404.1h1.5v1.5h-1.5zM430.9,423.7h1.5v1.5h-1.5zM430.9,443.2h1.5v1.5h-1.5zM430.9,462.9h1.5v1.5h-1.5zM450.5,129.7h1.5v1.5h-1.5zM450.5,149.2h1.5v1.5h-1.5zM450.5,168.8h1.5v1.5h-1.5zM450.5,188.4h1.5v1.5h-1.5zM450.5,208.1h1.5v1.5h-1.5zM450.5,227.7h1.5v1.5h-1.5zM450.5,247.2h1.5v1.5h-1.5zM450.5,266.9h1.5v1.5h-1.5zM450.5,286.5h1.5v1.5h-1.5zM450.5,306.1h1.5v1.5h-1.5zM450.5,325.6h1.5v1.5h-1.5zM450.5,345.2h1.5v1.5h-1.5zM450.5,364.9h1.5v1.5h-1.5zM450.5,384.5h1.5v1.5h-1.5zM450.5,404.1h1.5v1.5h-1.5zM450.5,423.7h1.5v1.5h-1.5zM450.5,443.2h1.5v1.5h-1.5zM450.5,462.9h1.5v1.5h-1.5zM470.1,129.7h1.5v1.5h-1.5zM470.1,149.2h1.5v1.5h-1.5zM470.1,168.8h1.5v1.5h-1.5zM470.1,188.4h1.5v1.5h-1.5zM470.1,208.1h1.5v1.5h-1.5zM470.1,227.7h1.5v1.5h-1.5zM470.1,247.2h1.5v1.5h-1.5zM470.1,266.9h1.5v1.5h-1.5zM470.1,286.5h1.5v1.5h-1.5zM470.1,306.1h1.5v1.5h-1.5zM470.1,325.6h1.5v1.5h-1.5zM470.1,345.2h1.5v1.5h-1.5zM470.1,364.9h1.5v1.5h-1.5zM470.1,384.5h1.5v1.5h-1.5zM470.1,404.1h1.5v1.5h-1.5zM470.1,423.7h1.5v1.5h-1.5zM470.1,443.2h1.5v1.5h-1.5zM470.1,462.9h1.5v1.5h-1.5zM489.7,129.7h1.5v1.5h-1.5zM489.7,149.2h1.5v1.5h-1.5zM489.7,168.8h1.5v1.5h-1.5zM489.7,188.4h1.5v1.5h-1.5zM489.7,208.1h1.5v1.5h-1.5zM489.7,227.7h1.5v1.5h-1.5zM489.7,247.2h1.5v1.5h-1.5zM489.7,266.9h1.5v1.5h-1.5zM489.7,286.5h1.5v1.5h-1.5zM489.7,306.1h1.5v1.5h-1.5zM489.7,325.6h1.5v1.5h-1.5zM489.7,345.2h1.5v1.5h-1.5zM489.7,364.9h1.5v1.5h-1.5zM489.7,384.5h1.5v1.5h-1.5zM489.7,404.1h1.5v1.5h-1.5zM489.7,423.7h1.5v1.5h-1.5zM489.7,443.2h1.5v1.5h-1.5zM489.7,462.9h1.5v1.5h-1.5zM509.3,129.7h1.5v1.5h-1.5zM509.3,149.2h1.5v1.5h-1.5zM509.3,168.8h1.5v1.5h-1.5zM509.3,188.4h1.5v1.5h-1.5zM509.3,208.1h1.5v1.5h-1.5zM509.3,227.7h1.5v1.5h-1.5zM509.3,247.2h1.5v1.5h-1.5zM509.3,266.9h1.5v1.5h-1.5zM509.3,286.5h1.5v1.5h-1.5zM509.3,306.1h1.5v1.5h-1.5zM509.3,325.6h1.5v1.5h-1.5zM509.3,345.2h1.5v1.5h-1.5zM509.3,364.9h1.5v1.5h-1.5zM509.3,384.5h1.5v1.5h-1.5zM509.3,404.1h1.5v1.5h-1.5zM509.3,423.7h1.5v1.5h-1.5zM509.3,443.2h1.5v1.5h-1.5zM509.3,462.9h1.5v1.5h-1.5zM528.9,129.7h1.5v1.5h-1.5zM528.9,149.2h1.5v1.5h-1.5zM528.9,168.8h1.5v1.5h-1.5zM528.9,188.4h1.5v1.5h-1.5zM528.9,208.1h1.5v1.5h-1.5zM528.9,227.7h1.5v1.5h-1.5zM528.9,247.2h1.5v1.5h-1.5zM528.9,266.9h1.5v1.5h-1.5zM528.9,286.5h1.5v1.5h-1.5zM528.9,306.1h1.5v1.5h-1.5zM528.9,325.6h1.5v1.5h-1.5zM528.9,345.2h1.5v1.5h-1.5zM528.9,364.9h1.5v1.5h-1.5zM528.9,384.5h1.5v1.5h-1.5zM528.9,404.1h1.5v1.5h-1.5zM528.9,423.7h1.5v1.5h-1.5zM528.9,443.2h1.5v1.5h-1.5zM528.9,462.9h1.5v1.5h-1.5zM548.5,129.7h1.5v1.5h-1.5zM548.5,149.2h1.5v1.5h-1.5zM548.5,168.8h1.5v1.5h-1.5zM548.5,188.4h1.5v1.5h-1.5zM548.5,208.1h1.5v1.5h-1.5zM548.5,227.7h1.5v1.5h-1.5zM548.5,247.2h1.5v1.5h-1.5zM548.5,266.9h1.5v1.5h-1.5zM548.5,286.5h1.5v1.5h-1.5zM548.5,306.1h1.5v1.5h-1.5zM548.5,325.6h1.5v1.5h-1.5zM548.5,345.2h1.5v1.5h-1.5zM548.5,364.9h1.5v1.5h-1.5zM548.5,384.5h1.5v1.5h-1.5zM548.5,404.1h1.5v1.5h-1.5zM548.5,423.7h1.5v1.5h-1.5zM548.5,443.2h1.5v1.5h-1.5zM548.5,462.9h1.5v1.5h-1.5zM568.0,129.7h1.5v1.5h-1.5zM568.0,149.2h1.5v1.5h-1.5zM568.0,168.8h1.5v1.5h-1.5zM568.0,188.4h1.5v1.5h-1.5zM568.0,208.1h1.5v1.5h-1.5zM568.0,227.7h1.5v1.5h-1.5zM568.0,247.2h1.5v1.5h-1.5zM568.0,266.9h1.5v1.5h-1.5zM568.0,286.5h1.5v1.5h-1.5zM568.0,306.1h1.5v1.5h-1.5zM568.0,325.6h1.5v1.5h-1.5zM568.0,345.2h1.5v1.5h-1.5zM568.0,364.9h1.5v1.5h-1.5zM568.0,384.5h1.5v1.5h-1.5zM568.0,404.1h1.5v1.5h-1.5zM568.0,423.7h1.5v1.5h-1.5zM568.0,443.2h1.5v1.5h-1.5zM568.0,462.9h1.5v1.5h-1.5zM587.7,129.7h1.5v1.5h-1.5zM587.7,149.2h1.5v1.5h-1.5zM587.7,168.8h1.5v1.5h-1.5zM587.7,188.4h1.5v1.5h-1.5zM587.7,208.1h1.5v1.5h-1.5zM587.7,227.7h1.5v1.5h-1.5zM587.7,247.2h1.5v1.5h-1.5zM587.7,266.9h1.5v1.5h-1.5zM587.7,286.5h1.5v1.5h-1.5zM587.7,306.1h1.5v1.5h-1.5zM587.7,325.6h1.5v1.5h-1.5zM587.7,345.2h1.5v1.5h-1.5zM587.7,364.9h1.5v1.5h-1.5zM587.7,384.5h1.5v1.5h-1.5zM587.7,404.1h1.5v1.5h-1.5zM587.7,423.7h1.5v1.5h-1.5zM587.7,443.2h1.5v1.5h-1.5zM587.7,462.9h1.5v1.5h-1.5zM607.2,129.7h1.5v1.5h-1.5zM607.2,149.2h1.5v1.5h-1.5zM607.2,168.8h1.5v1.5h-1.5zM607.2,188.4h1.5v1.5h-1.5zM607.2,208.1h1.5v1.5h-1.5zM607.2,227.7h1.5v1.5h-1.5zM607.2,247.2h1.5v1.5h-1.5zM607.2,266.9h1.5v1.5h-1.5zM607.2,286.5h1.5v1.5h-1.5zM607.2,306.1h1.5v1.5h-1.5zM607.2,325.6h1.5v1.5h-1.5zM607.2,345.2h1.5v1.5h-1.5zM607.2,364.9h1.5v1.5h-1.5zM607.2,384.5h1.5v1.5h-1.5zM607.2,404.1h1.5v1.5h-1.5zM607.2,423.7h1.5v1.5h-1.5zM607.2,443.2h1.5v1.5h-1.5zM607.2,462.9h1.5v1.5h-1.5zM626.9,129.7h1.5v1.5h-1.5zM626.9,149.2h1.5v1.5h-1.5zM626.9,168.8h1.5v1.5h-1.5zM626.9,188.4h1.5v1.5h-1.5zM626.9,208.1h1.5v1.5h-1.5zM626.9,227.7h1.5v1.5h-1.5zM626.9,247.2h1.5v1.5h-1.5zM626.9,266.9h1.5v1.5h-1.5zM626.9,286.5h1.5v1.5h-1.5zM626.9,306.1h1.5v1.5h-1.5zM626.9,325.6h1.5v1.5h-1.5zM626.9,345.2h1.5v1.5h-1.5zM626.9,364.9h1.5v1.5h-1.5zM626.9,384.5h1.5v1.5h-1.5zM626.9,404.1h1.5v1.5h-1.5zM626.9,423.7h1.5v1.5h-1.5zM626.9,443.2h1.5v1.5h-1.5zM626.9,462.9h1.5v1.5h-1.5zM646.5,129.7h1.5v1.5h-1.5zM646.5,149.2h1.5v1.5h-1.5zM646.5,168.8h1.5v1.5h-1.5zM646.5,188.4h1.5v1.5h-1.5zM646.5,208.1h1.5v1.5h-1.5zM646.5,227.7h1.5v1.5h-1.5zM646.5,247.2h1.5v1.5h-1.5zM646.5,266.9h1.5v1.5h-1.5zM646.5,286.5h1.5v1.5h-1.5zM646.5,306.1h1.5v1.5h-1.5zM646.5,325.6h1.5v1.5h-1.5zM646.5,345.2h1.5v1.5h-1.5zM646.5,364.9h1.5v1.5h-1.5zM646.5,384.5h1.5v1.5h-1.5zM646.5,404.1h1.5v1.5h-1.5zM646.5,423.7h1.5v1.5h-1.5zM646.5,443.2h1.5v1.5h-1.5zM646.5,462.9h1.5v1.5h-1.5z" fill="#7a7a7a"/><path d="M140.0,123.0H667.0V466.5H140.0Z" stroke="#ffffff" stroke-width="2.3" fill="none"/><path d="M569.6,466.5V360.8H667" stroke="#ffffff" stroke-width="2.2" fill="none"/><line x1="569.6" y1="381" x2="667" y2="381" stroke="#ffffff" stroke-width="2"/><line x1="569.6" y1="403" x2="667" y2="403" stroke="#ffffff" stroke-width="2"/><line x1="569.6" y1="426" x2="667" y2="426" stroke="#ffffff" stroke-width="2"/><line x1="176" y1="159.5" x2="176" y2="220.3" stroke="#ffffff" stroke-width="2"/><line x1="186" y1="159.5" x2="186" y2="220.3" stroke="#ffffff" stroke-width="2"/><line x1="196" y1="159.5" x2="196" y2="220.3" stroke="#ffffff" stroke-width="2"/><line x1="206" y1="159.5" x2="206" y2="177.7" stroke="#ffffff" stroke-width="2"/><line x1="206" y1="184.9" x2="206" y2="204.0" stroke="#ffffff" stroke-width="2"/><line x1="206" y1="210.8" x2="206" y2="220.3" stroke="#ffffff" stroke-width="2"/><line x1="216" y1="159.5" x2="216" y2="177.7" stroke="#ffffff" stroke-width="2"/><line x1="216" y1="184.9" x2="216" y2="204.0" stroke="#ffffff" stroke-width="2"/><line x1="216" y1="210.8" x2="216" y2="220.3" stroke="#ffffff" stroke-width="2"/><line x1="226" y1="159.5" x2="226" y2="177.7" stroke="#ffffff" stroke-width="2"/><line x1="226" y1="184.9" x2="226" y2="204.0" stroke="#ffffff" stroke-width="2"/><line x1="226" y1="210.8" x2="226" y2="220.3" stroke="#ffffff" stroke-width="2"/><line x1="496" y1="159" x2="496" y2="175" stroke="#ffffff" stroke-width="2"/><line x1="496" y1="183.3" x2="496" y2="201.6" stroke="#ffffff" stroke-width="2"/><line x1="496" y1="210" x2="496" y2="219" stroke="#ffffff" stroke-width="2"/><line x1="516" y1="159" x2="516" y2="175" stroke="#ffffff" stroke-width="2"/><line x1="516" y1="183.3" x2="516" y2="201.6" stroke="#ffffff" stroke-width="2"/><line x1="516" y1="210" x2="516" y2="219" stroke="#ffffff" stroke-width="2"/><line x1="506" y1="159.8" x2="506" y2="169" stroke="#ffffff" stroke-width="2"/><line x1="506" y1="178" x2="506" y2="195.5" stroke="#ffffff" stroke-width="2"/><line x1="506" y1="204" x2="506" y2="219" stroke="#ffffff" stroke-width="2"/><line x1="525" y1="159" x2="525" y2="219" stroke="#ffffff" stroke-width="2"/><line x1="535" y1="159" x2="535" y2="219" stroke="#ffffff" stroke-width="2"/><line x1="545" y1="159" x2="545" y2="219" stroke="#ffffff" stroke-width="2"/><line x1="545.1" y1="159" x2="574.3" y2="159" stroke="#ffffff" stroke-width="2"/><line x1="545.1" y1="219" x2="574.3" y2="219" stroke="#ffffff" stroke-width="2"/><line x1="571.5" y1="159" x2="571.5" y2="219" stroke="#ffffff" stroke-width="1"/><path d="M245,247.7H177V345.8H248.2" stroke="#ffffff" stroke-width="2.2" fill="none"/><path d="M254.7,247.7H313.8" stroke="#ffffff" stroke-width="2.2" fill="none"/><path d="M258.4,345.8H313.8" stroke="#ffffff" stroke-width="2.2" fill="none"/><path d="M408,247.7H465.9" stroke="#ffffff" stroke-width="2.2" fill="none"/><path d="M408,345.8H463.6" stroke="#ffffff" stroke-width="2.2" fill="none"/><path d="M475.6,247.7H545.3V345.8H474" stroke="#ffffff" stroke-width="2.2" fill="none"/><path d="M245.00,247.70 C245.85,249.10 248.57,252.98 250.10,256.10 C251.63,259.22 253.47,262.92 254.20,266.40 C254.93,269.88 254.42,273.13 254.50,277.00 C254.58,280.87 254.02,285.37 254.70,289.60 C255.38,293.83 258.08,299.33 258.60,302.40 C259.12,305.47 258.53,305.67 257.80,308.00 C257.07,310.33 254.72,313.62 254.20,316.40 C253.68,319.18 254.32,321.93 254.70,324.70 C255.08,327.47 256.45,330.70 256.50,333.00 C256.55,335.30 256.38,336.37 255.00,338.50 C253.62,340.63 249.33,344.58 248.20,345.80" stroke="#ffffff" stroke-width="2.0" fill="none"/><path d="M254.70,247.70 C255.55,249.10 258.17,252.98 259.80,256.10 C261.43,259.22 263.72,262.92 264.50,266.40 C265.28,269.88 264.50,273.13 264.50,277.00 C264.50,280.87 263.78,285.37 264.50,289.60 C265.22,293.83 268.22,299.33 268.80,302.40 C269.38,305.47 268.80,305.67 268.00,308.00 C267.20,310.33 264.52,313.62 264.00,316.40 C263.48,319.18 264.52,321.93 264.90,324.70 C265.28,327.47 266.35,330.70 266.30,333.00 C266.25,335.30 265.92,336.37 264.60,338.50 C263.28,340.63 259.43,344.58 258.40,345.80" stroke="#ffffff" stroke-width="2.0" fill="none"/><path d="M465.90,247.70 C464.73,249.57 460.37,255.48 458.90,258.90 C457.43,262.32 457.38,264.35 457.10,268.20 C456.82,272.05 457.32,278.37 457.20,282.00 C457.08,285.63 457.22,286.28 456.40,290.00 C455.58,293.72 452.22,300.07 452.30,304.30 C452.38,308.53 456.27,311.85 456.90,315.40 C457.53,318.95 456.27,322.50 456.10,325.60 C455.93,328.70 454.65,330.63 455.90,334.00 C457.15,337.37 462.32,343.83 463.60,345.80" stroke="#ffffff" stroke-width="2.0" fill="none"/><path d="M475.60,247.70 C474.45,249.57 470.23,255.48 468.70,258.90 C467.17,262.32 466.70,264.35 466.40,268.20 C466.10,272.05 466.95,278.37 466.90,282.00 C466.85,285.63 466.88,286.28 466.10,290.00 C465.32,293.72 462.00,300.07 462.20,304.30 C462.40,308.53 466.60,311.85 467.30,315.40 C468.00,318.95 466.62,322.50 466.40,325.60 C466.18,328.70 464.73,330.63 466.00,334.00 C467.27,337.37 472.67,343.83 474.00,345.80" stroke="#ffffff" stroke-width="2.0" fill="none"/><circle cx="198" cy="269" r="10" stroke="#fff" stroke-width="2" fill="none"/><circle cx="198" cy="323.4" r="10" stroke="#fff" stroke-width="2" fill="none"/><circle cx="523.3" cy="269" r="10" stroke="#fff" stroke-width="2" fill="none"/><circle cx="523.3" cy="323.4" r="10" stroke="#fff" stroke-width="2" fill="none"/><line x1="160" y1="269.5" x2="218.6" y2="269.5" stroke="#ffffff" stroke-width="1"/><line x1="198.5" y1="252.5" x2="198.5" y2="302" stroke="#ffffff" stroke-width="1"/><line x1="160" y1="323.5" x2="190" y2="323.5" stroke="#ffffff" stroke-width="1"/><line x1="212.6" y1="323.5" x2="215.5" y2="323.5" stroke="#ffffff" stroke-width="1"/><line x1="198.5" y1="314" x2="198.5" y2="338.7" stroke="#ffffff" stroke-width="1"/><line x1="504" y1="269.5" x2="539.4" y2="269.5" stroke="#ffffff" stroke-width="1"/><line x1="523.5" y1="252.5" x2="523.5" y2="302" stroke="#ffffff" stroke-width="1"/><line x1="506.3" y1="323.5" x2="539.4" y2="323.5" stroke="#ffffff" stroke-width="1"/><line x1="523.5" y1="314" x2="523.5" y2="338.7" stroke="#ffffff" stroke-width="1"/><line x1="177" y1="345.8" x2="177" y2="439.3" stroke="#ffffff" stroke-width="2"/><line x1="545" y1="345.8" x2="545" y2="440.5" stroke="#ffffff" stroke-width="2"/><line x1="177.3" y1="438.5" x2="545.3" y2="438.5" stroke="#ffffff" stroke-width="1"/><defs><clipPath id="hl"><path d="M313.8,247.7H335V237.3H360.3V355H335V345.8H313.8Z"/></clipPath><clipPath id="hr"><path d="M360.3,237.3H386.7V247.7H408V345.8H386.3V355H360.3Z"/></clipPath><clipPath id="hi"><rect x="345.6" y="267.6" width="30.4" height="57.4"/></clipPath></defs><path clip-path="url(#hl)" d="M113.80,437.30L513.80,37.30M117.90,437.30L517.90,37.30M122.00,437.30L522.00,37.30M126.10,437.30L526.10,37.30M130.20,437.30L530.20,37.30M134.30,437.30L534.30,37.30M138.40,437.30L538.40,37.30M142.50,437.30L542.50,37.30M146.60,437.30L546.60,37.30M150.70,437.30L550.70,37.30M154.80,437.30L554.80,37.30M158.90,437.30L558.90,37.30M163.00,437.30L563.00,37.30M167.10,437.30L567.10,37.30M171.20,437.30L571.20,37.30M175.30,437.30L575.30,37.30M179.40,437.30L579.40,37.30M183.50,437.30L583.50,37.30M187.60,437.30L587.60,37.30M191.70,437.30L591.70,37.30M195.80,437.30L595.80,37.30M199.90,437.30L599.90,37.30M204.00,437.30L604.00,37.30M208.10,437.30L608.10,37.30M212.20,437.30L612.20,37.30M216.30,437.30L616.30,37.30M220.40,437.30L620.40,37.30M224.50,437.30L624.50,37.30M228.60,437.30L628.60,37.30M232.70,437.30L632.70,37.30M236.80,437.30L636.80,37.30M240.90,437.30L640.90,37.30M245.00,437.30L645.00,37.30M249.10,437.30L649.10,37.30M253.20,437.30L653.20,37.30M257.30,437.30L657.30,37.30M261.40,437.30L661.40,37.30M265.50,437.30L665.50,37.30M269.60,437.30L669.60,37.30M273.70,437.30L673.70,37.30M277.80,437.30L677.80,37.30M281.90,437.30L681.90,37.30M286.00,437.30L686.00,37.30M290.10,437.30L690.10,37.30M294.20,437.30L694.20,37.30M298.30,437.30L698.30,37.30M302.40,437.30L702.40,37.30M306.50,437.30L706.50,37.30M310.60,437.30L710.60,37.30M314.70,437.30L714.70,37.30M318.80,437.30L718.80,37.30M322.90,437.30L722.90,37.30" stroke="#fff" stroke-width="2.0"/><path clip-path="url(#hr)" d="M-3.90,37.30L396.10,437.30M0.20,37.30L400.20,437.30M4.30,37.30L404.30,437.30M8.40,37.30L408.40,437.30M12.50,37.30L412.50,437.30M16.60,37.30L416.60,437.30M20.70,37.30L420.70,437.30M24.80,37.30L424.80,437.30M28.90,37.30L428.90,437.30M33.00,37.30L433.00,437.30M37.10,37.30L437.10,437.30M41.20,37.30L441.20,437.30M45.30,37.30L445.30,437.30M49.40,37.30L449.40,437.30M53.50,37.30L453.50,437.30M57.60,37.30L457.60,437.30M61.70,37.30L461.70,437.30M65.80,37.30L465.80,437.30M69.90,37.30L469.90,437.30M74.00,37.30L474.00,437.30M78.10,37.30L478.10,437.30M82.20,37.30L482.20,437.30M86.30,37.30L486.30,437.30M90.40,37.30L490.40,437.30M94.50,37.30L494.50,437.30M98.60,37.30L498.60,437.30M102.70,37.30L502.70,437.30M106.80,37.30L506.80,437.30M110.90,37.30L510.90,437.30M115.00,37.30L515.00,437.30M119.10,37.30L519.10,437.30M123.20,37.30L523.20,437.30M127.30,37.30L527.30,437.30M131.40,37.30L531.40,437.30M135.50,37.30L535.50,437.30M139.60,37.30L539.60,437.30M143.70,37.30L543.70,437.30M147.80,37.30L547.80,437.30M151.90,37.30L551.90,437.30M156.00,37.30L556.00,437.30M160.10,37.30L560.10,437.30M164.20,37.30L564.20,437.30M168.30,37.30L568.30,437.30M172.40,37.30L572.40,437.30M176.50,37.30L576.50,437.30M180.60,37.30L580.60,437.30M184.70,37.30L584.70,437.30M188.80,37.30L588.80,437.30M192.90,37.30L592.90,437.30M197.00,37.30L597.00,437.30M201.10,37.30L601.10,437.30M205.20,37.30L605.20,437.30" stroke="#fff" stroke-width="2.0"/><rect x="345.6" y="267.6" width="30.4" height="57.4" fill="#000"/><path clip-path="url(#hi)" d="M145.60,467.60L545.60,67.60M153.60,467.60L553.60,67.60M161.60,467.60L561.60,67.60M169.60,467.60L569.60,67.60M177.60,467.60L577.60,67.60M185.60,467.60L585.60,67.60M193.60,467.60L593.60,67.60M201.60,467.60L601.60,67.60M209.60,467.60L609.60,67.60M217.60,467.60L617.60,67.60M225.60,467.60L625.60,67.60M233.60,467.60L633.60,67.60" stroke="#fff" stroke-width="2.8"/><path d="M313.8,247.7H335V237.3H386.7V247.7H408V345.8H386.3V355H335V345.8H313.8Z" stroke="#ffffff" stroke-width="2.0" fill="none"/><path d="M345.6,267.6H376V325H345.6Z" stroke="#ffffff" stroke-width="1.6" fill="none"/><line x1="290" y1="267.5" x2="345.6" y2="267.5" stroke="#ffffff" stroke-width="1"/><line x1="290" y1="325.5" x2="345.6" y2="325.5" stroke="#ffffff" stroke-width="1"/><line x1="313.5" y1="213" x2="313.5" y2="247.7" stroke="#ffffff" stroke-width="1"/><line x1="408.5" y1="213" x2="408.5" y2="247.7" stroke="#ffffff" stroke-width="1"/><line x1="313.8" y1="215.5" x2="408" y2="215.5" stroke="#ffffff" stroke-width="1"/><line x1="386.7" y1="237.5" x2="426.6" y2="237.5" stroke="#ffffff" stroke-width="1"/><line x1="386.3" y1="354.5" x2="426.6" y2="354.5" stroke="#ffffff" stroke-width="1"/><line x1="423.5" y1="237.7" x2="423.5" y2="354.8" stroke="#ffffff" stroke-width="1"/><line x1="345.5" y1="355" x2="345.5" y2="389.3" stroke="#ffffff" stroke-width="1"/><line x1="376.5" y1="355" x2="376.5" y2="389.3" stroke="#ffffff" stroke-width="1"/><line x1="345.6" y1="387.5" x2="376.8" y2="387.5" stroke="#ffffff" stroke-width="1"/><line x1="335.5" y1="355" x2="335.5" y2="417.7" stroke="#ffffff" stroke-width="1"/><line x1="386.5" y1="355" x2="386.5" y2="417.7" stroke="#ffffff" stroke-width="1"/><line x1="335" y1="415.5" x2="386.3" y2="415.5" stroke="#ffffff" stroke-width="1"/><line x1="162.5" y1="269" x2="162.5" y2="323.4" stroke="#ffffff" stroke-width="1"/><line x1="292.5" y1="267.9" x2="292.5" y2="325.9" stroke="#ffffff" stroke-width="1"/><line x1="545.3" y1="247.5" x2="568" y2="247.5" stroke="#ffffff" stroke-width="1"/><line x1="545.3" y1="345.5" x2="568" y2="345.5" stroke="#ffffff" stroke-width="1"/><line x1="564.5" y1="247.7" x2="564.5" y2="345.8" stroke="#ffffff" stroke-width="1"/><line x1="198.5" y1="338" x2="198.5" y2="362.5" stroke="#ffffff" stroke-width="1"/><line x1="177" y1="361.5" x2="198" y2="361.5" stroke="#ffffff" stroke-width="1"/><path d="M193.5,318L238.6,367.9H277.8" stroke="#ffffff" stroke-width="1.2" fill="none"/><text x="360.8" y="215" font-size="6.6" font-family="Liberation Sans" font-weight="bold" fill="#fff" text-anchor="middle">48.0000</text><text x="361" y="386" font-size="6.6" font-family="Liberation Sans" font-weight="bold" fill="#fff" text-anchor="middle">16.0000</text><text x="361" y="414" font-size="6.6" font-family="Liberation Sans" font-weight="bold" fill="#fff" text-anchor="middle">26.0000</text><text x="360" y="438" font-size="6.6" font-family="Liberation Sans" font-weight="bold" fill="#fff" text-anchor="middle">240</text><text x="187.5" y="360" font-size="6.4" font-family="Liberation Sans" font-weight="bold" fill="#fff" text-anchor="middle">11.0000</text><text x="257.5" y="366" font-size="5.6" font-family="Liberation Sans" font-weight="bold" fill="#fff" text-anchor="middle">4 holes 10 Dia</text><text x="160.8" y="296.5" font-size="6.6" font-family="Liberation Sans" font-weight="bold" fill="#fff" text-anchor="middle" transform="rotate(-90 160.8 296.5)">28.0000</text><text x="290.8" y="296.8" font-size="6.6" font-family="Liberation Sans" font-weight="bold" fill="#fff" text-anchor="middle" transform="rotate(-90 290.8 296.8)">30.0000</text><text x="422.6" y="296.5" font-size="6.6" font-family="Liberation Sans" font-weight="bold" fill="#fff" text-anchor="middle" transform="rotate(-90 422.6 296.5)">60.0000</text><text x="562.6" y="296.5" font-size="6.6" font-family="Liberation Sans" font-weight="bold" fill="#fff" text-anchor="middle" transform="rotate(-90 562.6 296.5)">58.0000</text><text x="569.8" y="188.8" font-size="6.6" font-family="Liberation Sans" font-weight="bold" fill="#fff" text-anchor="middle" transform="rotate(-90 569.8 188.8)">30.0000</text><line x1="159.5" y1="346" x2="192.5" y2="346" stroke="#a81a1a" stroke-width="2"/><line x1="177" y1="330.5" x2="177" y2="360" stroke="#b81c1c" stroke-width="2"/></svg>
<div class="r" style="left:774px;top:89px;width:14px;height:424px;background:#f7f7f7"></div>
<div class="r" style="left:29px;top:499px;width:745px;height:14px;background:#f7f7f7"></div>
<div class="r" style="left:788px;top:88px;width:1px;height:426px;background:#c9c9c9"></div>
<div class="r" style="left:29px;top:513px;width:760px;height:1px;background:#c9c9c9"></div>
<div class="r" style="left:780.4px;top:123px;width:2px;height:255px;background:#a0a0a0"></div>
<div class="r" style="left:236px;top:505.5px;width:477px;height:2px;background:#a0a0a0"></div>
<div class="r" style="left:789px;top:88px;width:221px;height:426px;background:#f0f0f0"></div><div class="r" style="left:789px;top:88px;width:1px;height:425px;background:#d4d4d4"></div><div class="r" style="left:792.3px;top:89.6px;width:216.5px;height:13.8px;background:#d9d9d9;border:1px solid #cdcdcd"></div><div class="t" style="left:795.9px;top:93px;font-size:9.2px;line-height:10.276px;color:#1e1e1e;">Stiftassistent</div><svg style="left:979.5px;top:92.6px" width="8" height="8" viewBox="0 0 8 8"><rect x="0.6" y="2.6" width="5" height="4" fill="none" stroke="#222" stroke-width="1.1"/><path d="M2.3,2.3 V0.6 H7.3 V4.6 H5.8" fill="none" stroke="#222" stroke-width="1.1"/></svg><svg style="left:996.5px;top:93.19999999999999px" width="7" height="7" viewBox="0 0 7 7"><path d="M0.6,0.6 L6.4,6.4 M6.4,0.6 L0.6,6.4" stroke="#111" stroke-width="1.5"/></svg><div class="r" style="left:808.7px;top:123.4px;width:12.5px;height:12.5px;background:#fbfbfb;border:1px solid #dadada;border-radius:2px"></div><svg style="left:812px;top:125.5px" width="6" height="8" viewBox="0 0 6 8"><path d="M3,1 V4 M1.5,2.5 H4.5 M1.5,6.5 H4.5" stroke="#777" stroke-width="0.8"/></svg><div class="r" style="left:827.8px;top:122px;width:145px;height:16.3px;background:#fff;border-bottom:1px solid #a8a8a8"></div><svg style="left:963.3px;top:128.8px" width="9" height="6" viewBox="-1 -1 9 6"><path d="M0,0 L3.5,4 L7,0" fill="none" stroke="#555" stroke-width="1"/></svg><div class="r" style="left:979.2px;top:123.4px;width:13px;height:12.2px;background:#fbfbfb;border:1px solid #dadada;border-radius:2px"></div><svg style="left:981px;top:126.3px" width="9.5" height="7.5" viewBox="0 0 9.5 7.5"><defs><linearGradient id="cg1" x1="0" y1="0" x2="1" y2="0"><stop offset="0" stop-color="#00d000"/><stop offset="0.5" stop-color="#e0e000"/><stop offset="1" stop-color="#ff2020"/></linearGradient><linearGradient id="cg2" x1="0" y1="0" x2="0" y2="1"><stop offset="0" stop-color="#000" stop-opacity="0"/><stop offset="1" stop-color="#2020ff" stop-opacity="0.9"/></linearGradient></defs><rect width="9.5" height="7.5" fill="url(#cg1)"/><rect width="9.5" height="7.5" fill="url(#cg2)"/><rect x="0.5" y="0.5" width="8.5" height="6.5" fill="none" stroke="#111" stroke-width="0.8"/></svg><div class="r" style="left:799.6px;top:151px;width:201.5px;height:86.5px;background:#fff;border:1px solid #9a9a9a"></div><div class="r" style="left:792.3px;top:250.8px;width:216.5px;height:13.8px;background:#d9d9d9;border:1px solid #cdcdcd"></div><div class="t" style="left:795.9px;top:254px;font-size:9.2px;line-height:10.276px;color:#1e1e1e;">Ebenenliste</div><svg style="left:979.5px;top:253.8px" width="8" height="8" viewBox="0 0 8 8"><rect x="0.6" y="2.6" width="5" height="4" fill="none" stroke="#222" stroke-width="1.1"/><path d="M2.3,2.3 V0.6 H7.3 V4.6 H5.8" fill="none" stroke="#222" stroke-width="1.1"/></svg><svg style="left:996.5px;top:254.4px" width="7" height="7" viewBox="0 0 7 7"><path d="M0.6,0.6 L6.4,6.4 M6.4,0.6 L0.6,6.4" stroke="#111" stroke-width="1.5"/></svg><div class="r" style="left:794.1px;top:269px;width:213px;height:13.7px;background:#fff;border-bottom:1px solid #d6d6d6"></div><div class="t" style="left:795.5px;top:273px;font-size:8.8px;line-height:9.830px;color:#8a8a8a;">Filter</div><div class="r" style="left:798.3px;top:289.4px;width:20px;height:19.6px;background:#fbfbfb;border:1px solid #dcdcdc;border-radius:3px"></div><div class="r" style="left:829.2px;top:289.4px;width:20px;height:19.6px;background:#fbfbfb;border:1px solid #dcdcdc;border-radius:3px"></div><div class="r" style="left:859.7px;top:289.4px;width:20px;height:19.6px;background:#fbfbfb;border:1px solid #dcdcdc;border-radius:3px"></div><div class="r" style="left:890.7px;top:289.4px;width:20px;height:19.6px;background:#fbfbfb;border:1px solid #dcdcdc;border-radius:3px"></div><div class="r" style="left:921.4px;top:289.4px;width:20px;height:19.6px;background:#fbfbfb;border:1px solid #dcdcdc;border-radius:3px"></div><div class="r" style="left:951.9px;top:289.4px;width:20px;height:19.6px;background:#fbfbfb;border:1px solid #dcdcdc;border-radius:3px"></div><div class="r" style="left:982.8px;top:289.4px;width:20px;height:19.6px;background:#fbfbfb;border:1px solid #dcdcdc;border-radius:3px"></div><svg style="left:802.3px;top:295.3px" width="12" height="8" viewBox="0 0 12 8"><path d="M0.8,4 Q6,-1.5 11.2,4 Q6,9.5 0.8,4 Z" fill="#22ea7c" stroke="#145c34" stroke-width="1"/><circle cx="6" cy="4" r="1.6" fill="#145c34"/></svg><svg style="left:833.2px;top:295.3px" width="12" height="8" viewBox="0 0 12 8"><path d="M0.8,4 Q6,-1.5 11.2,4 Q6,9.5 0.8,4 Z" fill="#d0d0d0" stroke="#8a8a8a" stroke-width="1"/><circle cx="6" cy="4" r="1.6" fill="#8a8a8a"/></svg><svg style="left:864.7px;top:293.5px" width="10" height="12" viewBox="0 0 10 12"><path d="M2.3,5.5 V3.8 Q2.3,1 5,1 Q7.7,1 7.7,3.8 V5.5" fill="none" stroke="#c4c4c4" stroke-width="1.3"/><rect x="1" y="5.3" width="8" height="6.2" fill="#c4c4c4"/></svg><svg style="left:895.7px;top:293.5px" width="10" height="12" viewBox="0 0 10 12"><path d="M2.3,5.5 V3.8 Q2.3,1 5,1 Q7.7,1 7.7,3.8 V5.5" fill="none" stroke="#111" stroke-width="1.3"/><rect x="1" y="5.3" width="8" height="6.2" fill="#111"/></svg><svg style="left:926px;top:294px" width="10" height="10" viewBox="0 0 10 10"><path d="M3.6,0.6 H6.4 V3.6 H9.4 V6.4 H6.4 V9.4 H3.6 V6.4 H0.6 V3.6 H3.6 Z" fill="#22ea7c" stroke="#1a9a52" stroke-width="0.8"/></svg><svg style="left:956.8px;top:297.2px" width="10.2" height="5" viewBox="0 0 10.2 5"><rect x="0.6" y="0.6" width="9" height="3.6" fill="#22ea7c" stroke="#1a9a52" stroke-width="0.8"/></svg><svg style="left:986px;top:292.5px" width="14" height="15" viewBox="0 0 14 15"><path d="M2,10.5 L8.5,3 L11.5,5.8 L5,13 L1.5,13.5 Z" fill="#22ea7c" stroke="#145c34" stroke-width="0.9"/><path d="M7,4.8 L10,7.6" stroke="#145c34" stroke-width="0.8"/><path d="M6.5,13.5 H13" stroke="#555" stroke-width="0.9"/></svg><div class="r" style="left:793.3px;top:315.4px;width:214px;height:109.2px;background:#fff;border:1px solid #9a9a9a"></div><div class="r" style="left:794.3px;top:332.6px;width:212px;height:1px;background:#e6e6e6"></div><div class="r" style="left:815.7px;top:316.4px;width:1px;height:16.2px;background:#e3e3e3"></div><div class="r" style="left:837.5px;top:316.4px;width:1px;height:16.2px;background:#e3e3e3"></div><div class="r" style="left:859.7px;top:316.4px;width:1px;height:16.2px;background:#e3e3e3"></div><div class="r" style="left:881.5px;top:316.4px;width:1px;height:16.2px;background:#e3e3e3"></div><svg style="left:798.5px;top:320.5px" width="12" height="8" viewBox="0 0 12 8"><path d="M0.8,4 Q6,-1.5 11.2,4 Q6,9.5 0.8,4 Z" fill="#22ea7c" stroke="#145c34" stroke-width="1"/><circle cx="6" cy="4" r="1.6" fill="#145c34"/></svg><svg style="left:821.5px;top:318.5px" width="10" height="12" viewBox="0 0 10 12"><path d="M2.3,5.5 V3.8 Q2.3,1 5,1 Q7.7,1 7.7,3.8 V5.5" fill="none" stroke="#c4c4c4" stroke-width="1.3"/><rect x="1" y="5.3" width="8" height="6.2" fill="#c4c4c4"/></svg><svg style="left:842.5px;top:318.5px" width="12" height="12" viewBox="0 0 12 12"><rect x="2.5" y="0.5" width="7" height="4" fill="#22ea7c"/><rect x="0.5" y="4" width="11" height="5" fill="#111"/><rect x="2.3" y="5.5" width="7.4" height="1.8" fill="#fff"/><rect x="2.5" y="8.8" width="7" height="3" fill="#22ea7c"/></svg><svg style="left:864px;top:318.3px" width="12" height="12" viewBox="0 0 12 12"><path d="M3.8,0.5 V12 M8.2,0.5 V12 M0.5,3.8 H11.5 M0.5,8.2 H11.5" stroke="#555" stroke-width="1.4"/></svg><div class="r" style="left:882.6px;top:316.4px;width:20.7px;height:16.5px;background:#000"></div><div class="t" style="left:907.6px;top:320px;font-size:9.4px;line-height:10.500px;color:#000;font-weight:bold">0</div><div class="r" style="left:793.3px;top:427.5px;width:214px;height:15px;background:#f0f0f0"></div><div class="r" style="left:931.6px;top:427.2px;width:62.4px;height:15.5px;background:#ffffff;border:1px solid #e4e4e4;border-bottom:none"></div><div class="r" style="left:878.5px;top:428.5px;width:1px;height:13px;background:#d8d8d8"></div><div class="r" style="left:793.3px;top:428px;width:1px;height:14px;background:#e0e0e0"></div><div class="t" style="left:800.5px;top:430px;font-size:9.0px;line-height:10.053px;color:#222;">Bibliothek Browser</div><div class="t" style="left:888.0px;top:430px;font-size:9.0px;line-height:10.053px;color:#222;">Blockliste</div><div class="t" style="left:940.9px;top:430px;font-size:9.0px;line-height:10.053px;color:#222;">Ebenenliste</div><div class="r" style="left:792.3px;top:447.8px;width:216.5px;height:13.8px;background:#d9d9d9;border:1px solid #cdcdcd"></div><div class="t" style="left:795.9px;top:451px;font-size:9.2px;line-height:10.276px;color:#1e1e1e;">Kommandozeile</div><svg style="left:979.5px;top:450.8px" width="8" height="8" viewBox="0 0 8 8"><rect x="0.6" y="2.6" width="5" height="4" fill="none" stroke="#222" stroke-width="1.1"/><path d="M2.3,2.3 V0.6 H7.3 V4.6 H5.8" fill="none" stroke="#222" stroke-width="1.1"/></svg><svg style="left:996.5px;top:451.40000000000003px" width="7" height="7" viewBox="0 0 7 7"><path d="M0.6,0.6 L6.4,6.4 M6.4,0.6 L0.6,6.4" stroke="#111" stroke-width="1.5"/></svg><div class="r" style="left:793.8px;top:462px;width:201px;height:19.6px;background:#fff;overflow:hidden"></div><div class="r" style="left:793.8px;top:462px;width:190px;height:19.6px;overflow:hidden"><div class="t" style="left:2.8px;top:-5px;font-size:9.4px;line-height:10.500px;color:#333;transform:scaleX(0.9);transform-origin:0 0;">Abstand zwischen den Punkten - 0.044100 ist</div><div class="t" style="left:2.8px;top:7px;font-size:9.4px;line-height:10.500px;color:#333;transform:scaleX(0.9);transform-origin:0 0;">größer als der Durchmesser=2</div></div><div class="r" style="left:995px;top:473.2px;width:12px;height:1px;background:#666"></div><div class="r" style="left:793.8px;top:481.8px;width:214px;height:1px;background:#b8b8b8"></div><div class="t" style="left:792.6px;top:484px;font-size:9.2px;line-height:10.276px;color:#2a2a2a;transform:scaleX(0.92);transform-origin:0 0;">Zweiten Punkt angeben</div><div class="r" style="left:795px;top:497.7px;width:194.8px;height:12.5px;background:#fff"></div><div class="r" style="left:992.2px;top:497.5px;width:12.6px;height:14px;background:#fbfbfb;border:1px solid #dcdcdc;border-radius:2px"></div><svg style="left:995.5px;top:501px" width="6" height="7" viewBox="0 0 6 7"><path d="M0.5,0.8 H5.5 M0.5,2.6 H5.5 M0.5,4.4 H5.5 M0.5,6.2 H5.5" stroke="#888" stroke-width="0.8"/></svg>
<div class="r" style="left:0px;top:514px;width:1010px;height:27px;background:#f0f0f0"></div><svg style="left:4px;top:517px" width="3" height="21" viewBox="0 0 3 21"><rect x="0" y="0" width="1.6" height="1.6" fill="#b5b5b5"/><rect x="0" y="3" width="1.6" height="1.6" fill="#b5b5b5"/><rect x="0" y="6" width="1.6" height="1.6" fill="#b5b5b5"/><rect x="0" y="9" width="1.6" height="1.6" fill="#b5b5b5"/><rect x="0" y="12" width="1.6" height="1.6" fill="#b5b5b5"/><rect x="0" y="15" width="1.6" height="1.6" fill="#b5b5b5"/><rect x="0" y="18" width="1.6" height="1.6" fill="#b5b5b5"/></svg><div class="t" style="left:14.5px;top:522px;font-size:10.4px;line-height:11.617px;color:#111;">Ex</div><svg style="left:37px;top:519.5px" width="15" height="15" viewBox="0 0 15 15"><path d="M7.5,1 V14 M1,7.5 H14" stroke="#444" stroke-width="1" stroke-dasharray="1.3 1.1"/><circle cx="7.5" cy="7.5" r="1.3" fill="#f0f0f0" stroke="#444" stroke-width="0.7"/></svg><svg style="left:61.5px;top:519.5px" width="15" height="15" viewBox="0 0 15 15"><circle cx="2.7" cy="1.6" r="1.35" fill="#2bd170" stroke="#196b3c" stroke-width="0.8"/><circle cx="2.7" cy="5.6" r="1.35" fill="#2bd170" stroke="#196b3c" stroke-width="0.8"/><circle cx="2.7" cy="9.6" r="1.35" fill="#2bd170" stroke="#196b3c" stroke-width="0.8"/><circle cx="2.7" cy="13.6" r="1.35" fill="#2bd170" stroke="#196b3c" stroke-width="0.8"/><circle cx="7.7" cy="1.6" r="1.35" fill="#2bd170" stroke="#196b3c" stroke-width="0.8"/><circle cx="7.7" cy="5.6" r="1.35" fill="#2bd170" stroke="#196b3c" stroke-width="0.8"/><circle cx="7.7" cy="9.6" r="1.35" fill="#2bd170" stroke="#196b3c" stroke-width="0.8"/><circle cx="7.7" cy="13.6" r="1.35" fill="#2bd170" stroke="#196b3c" stroke-width="0.8"/><circle cx="12.7" cy="1.6" r="1.35" fill="#2bd170" stroke="#196b3c" stroke-width="0.8"/><circle cx="12.7" cy="5.6" r="1.35" fill="#2bd170" stroke="#196b3c" stroke-width="0.8"/><circle cx="12.7" cy="9.6" r="1.35" fill="#2bd170" stroke="#196b3c" stroke-width="0.8"/><circle cx="12.7" cy="13.6" r="1.35" fill="#2bd170" stroke="#196b3c" stroke-width="0.8"/></svg><svg style="left:86.5px;top:519.5px" width="16" height="16" viewBox="0 0 16 16"><path d="M4,2 Q10,6 9.8,13.5" fill="none" stroke="#555" stroke-width="1"/><circle cx="4.3" cy="1.8" r="1.5" fill="#2bd170" stroke="#196b3c" stroke-width="0.8"/><circle cx="1.5" cy="5.2" r="1.5" fill="#2bd170" stroke="#196b3c" stroke-width="0.8"/><circle cx="10" cy="13.2" r="1.5" fill="#2bd170" stroke="#196b3c" stroke-width="0.8"/><circle cx="13.8" cy="10.6" r="1.5" fill="#2bd170" stroke="#196b3c" stroke-width="0.8"/></svg><svg style="left:111px;top:519.5px" width="16" height="16" viewBox="0 0 16 16"><path d="M4,2 Q10,6 9.8,13.5" fill="none" stroke="#555" stroke-width="1"/><circle cx="4.3" cy="1.8" r="1.5" fill="#2bd170" stroke="#196b3c" stroke-width="0.8"/><circle cx="1.5" cy="5.2" r="1.5" fill="#2bd170" stroke="#196b3c" stroke-width="0.8"/><circle cx="10" cy="13.2" r="1.5" fill="#2bd170" stroke="#196b3c" stroke-width="0.8"/><circle cx="13.8" cy="10.6" r="1.5" fill="#2bd170" stroke="#196b3c" stroke-width="0.8"/><circle cx="7.5" cy="6.5" r="1.5" fill="#2bd170" stroke="#196b3c" stroke-width="0.8"/><circle cx="10.5" cy="4.5" r="1.5" fill="#2bd170" stroke="#196b3c" stroke-width="0.8"/><circle cx="11" cy="8" r="1.5" fill="#2bd170" stroke="#196b3c" stroke-width="0.8"/></svg><svg style="left:135px;top:519.5px" width="16" height="16" viewBox="0 0 16 16"><path d="M1.5,4.5 Q8,5 10,14" fill="none" stroke="#555" stroke-width="1"/><path d="M6,1 L14.5,10" stroke="#555" stroke-width="1"/><circle cx="10.2" cy="5.5" r="1.5" fill="#2bd170" stroke="#196b3c" stroke-width="0.8"/><circle cx="2" cy="12.5" r="1.5" fill="#2bd170" stroke="#196b3c" stroke-width="0.8"/></svg><svg style="left:159.5px;top:519.5px" width="16" height="16" viewBox="0 0 16 16"><path d="M1.5,4.5 Q8,5 10,14" fill="none" stroke="#555" stroke-width="1"/><path d="M6,1 L14.5,10" stroke="#555" stroke-width="1"/><circle cx="7.6" cy="7" r="1.5" fill="#2bd170" stroke="#196b3c" stroke-width="0.8"/><circle cx="9.2" cy="5" r="1.5" fill="#2bd170" stroke="#196b3c" stroke-width="0.8"/></svg><svg style="left:183.5px;top:519.5px" width="16" height="16" viewBox="0 0 16 16"><path d="M1.5,5 Q8,5.5 10,14" fill="none" stroke="#555" stroke-width="1"/><path d="M5,0.5 L14.5,10" stroke="#555" stroke-width="1"/><circle cx="7.8" cy="4.2" r="1.5" fill="#2bd170" stroke="#196b3c" stroke-width="0.8"/><circle cx="9.2" cy="11" r="1.5" fill="#2bd170" stroke="#196b3c" stroke-width="0.8"/><polygon points="13,3 13,6.5 10.5,4.8" fill="#196b3c"/><polygon points="3,9.5 3,13 5.5,11.2" fill="#196b3c"/></svg><svg style="left:208px;top:519.5px" width="16" height="16" viewBox="0 0 16 16"><path d="M2,2 L14,14 M14,2 L2,14" stroke="#555" stroke-width="1"/><rect x="6.4" y="6.4" width="3.2" height="3.2" fill="#2bd170" stroke="#196b3c" stroke-width="0.7"/></svg><div class="r" style="left:230.5px;top:517px;width:1px;height:21px;background:#d0d0d0"></div><svg style="left:237px;top:519.5px" width="15" height="15" viewBox="0 0 15 15"><rect x="0" y="5.5" width="15" height="4" fill="#c7f3d8"/><path d="M0.5,7.5 H14.5" stroke="#444" stroke-width="1"/><circle cx="7.8" cy="7.5" r="1.7" fill="#2bd170" stroke="#196b3c" stroke-width="0.8"/></svg><svg style="left:261.5px;top:519.5px" width="15" height="15" viewBox="0 0 15 15"><rect x="5.5" y="0" width="4" height="15" fill="#c7f3d8"/><path d="M7.5,0.5 V14.5" stroke="#444" stroke-width="1"/><circle cx="7.5" cy="7.8" r="1.7" fill="#2bd170" stroke="#196b3c" stroke-width="0.8"/></svg><svg style="left:286px;top:519.5px" width="15" height="15" viewBox="0 0 15 15"><rect x="5.5" y="0" width="4" height="15" fill="#c7f3d8"/><rect x="0" y="5.5" width="15" height="4" fill="#c7f3d8"/><path d="M7.5,0.5 V14.5 M0.5,7.5 H14.5" stroke="#444" stroke-width="1"/><circle cx="7.5" cy="7.5" r="1.7" fill="#2bd170" stroke="#196b3c" stroke-width="0.8"/></svg><div class="r" style="left:308.8px;top:517px;width:1px;height:21px;background:#d0d0d0"></div><svg style="left:315px;top:519.5px" width="16" height="16" viewBox="0 0 16 16"><path d="M1,11 L7,5.5 L10,8.5 L4,14 Z" fill="#fff" stroke="#444" stroke-width="0.9"/><path d="M10,2.5 L13.5,6 L10,9.5 L6.5,6 Z" fill="#2bd170" stroke="#196b3c" stroke-width="0.8"/><path d="M10,1 V11 M5,6 H15" stroke="#444" stroke-width="0.7"/></svg><svg style="left:338.5px;top:518.5px" width="18" height="18" viewBox="0 0 18 18"><path d="M2.3,4.5 V3 Q2.3,0.8 4.4,0.8 Q6.5,0.8 6.5,3 V4.5" fill="none" stroke="#111" stroke-width="1.1"/><rect x="1" y="4.3" width="6.8" height="5.3" fill="#111"/><path d="M4,13.5 L10,8 L13,11 L7,16.5 Z" fill="#fff" stroke="#444" stroke-width="0.9"/><path d="M13,5 L16.5,8.5 L13,12 L9.5,8.5 Z" fill="#2bd170" stroke="#196b3c" stroke-width="0.8"/><path d="M13,3.5 V13.5 M8,8.5 H18" stroke="#444" stroke-width="0.7"/></svg><div class="r" style="left:361.5px;top:516px;width:1px;height:24px;background:#d0d0d0"></div><svg style="left:364.5px;top:518px" width="3" height="20" viewBox="0 0 3 20"><rect x="0" y="0" width="1.6" height="1.6" fill="#b5b5b5"/><rect x="0" y="3" width="1.6" height="1.6" fill="#b5b5b5"/><rect x="0" y="6" width="1.6" height="1.6" fill="#b5b5b5"/><rect x="0" y="9" width="1.6" height="1.6" fill="#b5b5b5"/><rect x="0" y="12" width="1.6" height="1.6" fill="#b5b5b5"/><rect x="0" y="15" width="1.6" height="1.6" fill="#b5b5b5"/></svg><div class="r" style="left:394px;top:515.6px;width:24.4px;height:22.6px;background:#cde5f8;border:1px solid #b0d4f1;border-radius:2px"></div><div class="r" style="left:418.4px;top:515.6px;width:24.4px;height:22.6px;background:#cde5f8;border:1px solid #b0d4f1;border-radius:2px"></div><div class="r" style="left:467.3px;top:515.6px;width:24.4px;height:22.6px;background:#cde5f8;border:1px solid #b0d4f1;border-radius:2px"></div><svg style="left:374.5px;top:520.9px" width="14" height="13" viewBox="0 0 14 13"><rect x="0.5" y="0.5" width="13" height="9.5" rx="0.8" fill="#fff" stroke="#333" stroke-width="1"/><rect x="1" y="1" width="3" height="8.5" fill="#22e57a"/><rect x="5" y="10.5" width="4" height="1.5" fill="#333"/><rect x="3" y="11.8" width="8" height="1" fill="#333"/></svg><svg style="left:399.5px;top:520.9px" width="14" height="13" viewBox="0 0 14 13"><rect x="0.5" y="0.5" width="13" height="9.5" rx="0.8" fill="#fff" stroke="#333" stroke-width="1"/><rect x="10" y="1" width="3" height="8.5" fill="#22e57a"/><rect x="5" y="10.5" width="4" height="1.5" fill="#333"/><rect x="3" y="11.8" width="8" height="1" fill="#333"/></svg><svg style="left:423.5px;top:520.9px" width="14" height="13" viewBox="0 0 14 13"><rect x="0.5" y="0.5" width="13" height="9.5" rx="0.8" fill="#fff" stroke="#333" stroke-width="1"/><rect x="1" y="1" width="12" height="3" fill="#22e57a"/><rect x="5" y="10.5" width="4" height="1.5" fill="#333"/><rect x="3" y="11.8" width="8" height="1" fill="#333"/></svg><svg style="left:448px;top:520.9px" width="14" height="13" viewBox="0 0 14 13"><rect x="0.5" y="0.5" width="13" height="9.5" rx="0.8" fill="#fff" stroke="#333" stroke-width="1"/><rect x="1" y="6.5" width="12" height="3" fill="#22e57a"/><rect x="5" y="10.5" width="4" height="1.5" fill="#333"/><rect x="3" y="11.8" width="8" height="1" fill="#333"/></svg><svg style="left:472.8px;top:520.9px" width="14" height="13" viewBox="0 0 14 13"><rect x="0.5" y="0.5" width="13" height="9.5" rx="0.8" fill="#fff" stroke="#333" stroke-width="1"/><rect x="4" y="3" width="6" height="4.5" fill="#22e57a"/><rect x="5" y="10.5" width="4" height="1.5" fill="#333"/><rect x="3" y="11.8" width="8" height="1" fill="#333"/></svg><div class="r" style="left:492.3px;top:516px;width:1px;height:24px;background:#d0d0d0"></div><svg style="left:495.5px;top:518px" width="3" height="20" viewBox="0 0 3 20"><rect x="0" y="0" width="1.6" height="1.6" fill="#b5b5b5"/><rect x="0" y="3" width="1.6" height="1.6" fill="#b5b5b5"/><rect x="0" y="6" width="1.6" height="1.6" fill="#b5b5b5"/><rect x="0" y="9" width="1.6" height="1.6" fill="#b5b5b5"/><rect x="0" y="12" width="1.6" height="1.6" fill="#b5b5b5"/><rect x="0" y="15" width="1.6" height="1.6" fill="#b5b5b5"/></svg><svg style="left:504.5px;top:520px" width="17" height="15" viewBox="0 0 17 15"><rect x="0.7000000000000002" y="6.5" width="6.6" height="2.0" fill="#000"/><rect x="3.0" y="4.2" width="2.0" height="6.6" fill="#000"/><rect x="9.5" y="0.5" width="6.5" height="14" fill="#fff" stroke="#aaa" stroke-width="0.8"/><path d="M11,3 H14.5 M11,5.5 H14.5 M11,8 H14.5 M11,10.5 H14.5 M11,13 H14.5" stroke="#888" stroke-width="0.7"/></svg><svg style="left:528.5px;top:520px" width="17" height="15" viewBox="0 0 17 15"><rect x="0.7000000000000002" y="6.5" width="6.6" height="2.0" fill="#000"/><rect x="3.0" y="4.2" width="2.0" height="6.6" fill="#000"/><rect x="9" y="0.5" width="7.5" height="14" fill="#fff" stroke="#3bb36e" stroke-width="0.8"/><path d="M9,7.5 H16.5 M10.5,6 L15,1.8" stroke="#3bb36e" stroke-width="0.8"/><circle cx="12.7" cy="11" r="2" fill="none" stroke="#555" stroke-width="0.7"/></svg>
<div class="r" style="left:0px;top:513px;width:789px;height:1px;background:#c9c9c9"></div>
<div class="r" style="left:789px;top:513px;width:220px;height:1px;background:#fafafa"></div>
<div class="r" style="left:0px;top:541px;width:1010px;height:51px;background:#f0f0f0"></div><div class="r" style="left:151.5px;top:542.5px;width:1px;height:47px;background:#d6d6d6"></div><div class="r" style="left:302.7px;top:542.5px;width:1px;height:47px;background:#d6d6d6"></div><div class="r" style="left:544px;top:542.5px;width:1px;height:47px;background:#d6d6d6"></div><div class="r" style="left:654px;top:542.5px;width:1px;height:47px;background:#d6d6d6"></div><div class="r" style="left:747px;top:542.5px;width:1px;height:47px;background:#d6d6d6"></div><div class="r" style="left:807.6px;top:542.5px;width:1px;height:47px;background:#d6d6d6"></div><div class="t" style="left:5.5px;top:550px;font-size:10px;line-height:11.170px;color:#2a2a2a;transform:scaleX(0.8534);transform-origin:0 0;">34.3706 , 12.7995</div><div class="t" style="left:5.5px;top:573px;font-size:10px;line-height:11.170px;color:#2a2a2a;transform:scaleX(0.8725);transform-origin:0 0;">36.6765 &lt; 20.4251°</div><div class="t" style="left:156.7px;top:550px;font-size:10px;line-height:11.170px;color:#2a2a2a;transform:scaleX(0.8516);transform-origin:0 0;">@&nbsp; 28.1052 , 7.6976</div><div class="t" style="left:156.7px;top:573px;font-size:10px;line-height:11.170px;color:#2a2a2a;transform:scaleX(0.8463);transform-origin:0 0;">@&nbsp; 29.1402 &lt; 15.3169°</div><div class="t" style="left:306.3px;top:545px;font-size:9.4px;line-height:10.500px;color:#2a2a2a;">Zweiten Punkt angeben</div><div class="t" style="left:463.0px;top:545px;font-size:9.0px;line-height:10.053px;color:#2a2a2a;">Zurück</div><div class="t" style="left:548.4px;top:551px;font-size:9.0px;line-height:10.053px;color:#2a2a2a;">Ausgewählt</div><div class="t" style="left:598.2px;top:551px;font-size:9.0px;line-height:10.053px;color:#2a2a2a;">Gesamtlänge</div><div class="t" style="left:548.4px;top:573px;font-size:9.0px;line-height:10.053px;color:#2a2a2a;">0</div><div class="t" style="left:598.2px;top:573px;font-size:9.0px;line-height:10.053px;color:#2a2a2a;">0</div><div class="t" style="left:657.7px;top:551px;font-size:9.0px;line-height:10.053px;color:#2a2a2a;">aktuelle Ebene</div><div class="t" style="left:657.7px;top:573px;font-size:9.0px;line-height:10.053px;color:#2a2a2a;">0</div><div class="t" style="left:754.0px;top:551px;font-size:9.0px;line-height:10.053px;color:#2a2a2a;">Rasterstatus</div><div class="t" style="left:754.0px;top:573px;font-size:9.0px;line-height:10.053px;color:#2a2a2a;">1 / 10</div><svg style="left:412px;top:545px" width="44" height="46" viewBox="412 545 44 46"><path d="M415,558.4 C418,562 421.5,563 423.5,560 C425.5,556 425.5,548.5 433.5,547.8 C439,547.4 441.3,551 441.3,555.5" fill="none" stroke="#111" stroke-width="1.1"/><rect x="430" y="555.6" width="23.2" height="32.6" rx="3.5" fill="#fff" stroke="#111" stroke-width="1.4"/><path d="M430,568.1 H453.2" stroke="#111" stroke-width="1.3"/><rect x="437.2" y="556.3" width="8.4" height="11.6" fill="#22e57a" stroke="#111" stroke-width="1.2"/></svg><svg style="left:1000px;top:582px" width="9" height="8" viewBox="0 0 9 8"><rect x="6.5" y="1" width="1.2" height="1.2" fill="#9a9a9a"/><rect x="4" y="3.5" width="1.2" height="1.2" fill="#9a9a9a"/><rect x="6.5" y="3.5" width="1.2" height="1.2" fill="#9a9a9a"/><rect x="1.5" y="6" width="1.2" height="1.2" fill="#9a9a9a"/><rect x="4" y="6" width="1.2" height="1.2" fill="#9a9a9a"/><rect x="6.5" y="6" width="1.2" height="1.2" fill="#9a9a9a"/></svg><div class="r" style="left:0px;top:590.6px;width:1010px;height:1.4px;background:#d9d9d9"></div>
<svg style="left:6.5px;top:5.5px" width="13" height="13" viewBox="0 0 13 13"><circle cx="6.3" cy="6.3" r="5.2" fill="none" stroke="#62c22e" stroke-width="1.3"/><path d="M1,6.3 H11.6" stroke="#111" stroke-width="1.6"/><circle cx="1.4" cy="6.3" r="1" fill="#111"/><path d="M0.5,0.5 H2 M0.5,0.5 V2 M12,0.5 H10.5 M12,0.5 V2 M0.5,12 H2 M0.5,12 V10.5 M12,12 H10.5 M12,12 V10.5" stroke="#4aae2a" stroke-width="0.9"/></svg><div class="r" style="left:915.3px;top:11.8px;width:8.2px;height:1px;background:#777"></div><div class="r" style="left:951.2px;top:8.7px;width:7.6px;height:7.1px;border:1px solid #777"></div><svg style="left:986.8px;top:7.9px" width="9" height="9" viewBox="0 0 9 9"><path d="M0.5,0.5 L8,8 M8,0.5 L0.5,8" stroke="#777" stroke-width="1"/></svg><svg style="left:1.5px;top:26.5px" width="11" height="12" viewBox="0 0 11 12"><path d="M0.8,0.7 H5.5 L7,2.2 V11 H0.8 Z" fill="#fff" stroke="#888" stroke-width="0.7"/><circle cx="5.8" cy="6.2" r="1.7" fill="none" stroke="#111" stroke-width="1"/><path d="M7,7.5 L9.6,10" stroke="#111" stroke-width="1.5"/></svg><div class="r" style="left:967px;top:25px;width:12.3px;height:13.7px;background:#fff;border:1px solid #e6e6e6;border-radius:2px"></div><div class="r" style="left:981.2px;top:25px;width:12.3px;height:13.7px;background:#fff;border:1px solid #e6e6e6;border-radius:2px"></div><div class="r" style="left:995.3px;top:25px;width:12.3px;height:13.7px;background:#fff;border:1px solid #e6e6e6;border-radius:2px"></div><div class="r" style="left:971.4px;top:34px;width:4.5px;height:1.6px;background:#111"></div><svg style="left:984.5px;top:28.5px" width="8" height="8" viewBox="0 0 8 8"><rect x="0.6" y="2.6" width="5" height="4" fill="none" stroke="#222" stroke-width="1"/><path d="M2.3,2.3 V0.6 H7.3 V4.6 H5.8" fill="none" stroke="#222" stroke-width="1"/></svg><svg style="left:998.3px;top:29px" width="6.5" height="6.5" viewBox="0 0 6.5 6.5"><path d="M0.6,0.6 L5.9,5.9 M5.9,0.6 L0.6,5.9" stroke="#111" stroke-width="1.4"/></svg>
<svg style="left:4px;top:44.5px" width="3" height="20" viewBox="0 0 3 20"><rect x="0" y="0" width="1.6" height="1.6" fill="#b5b5b5"/><rect x="0" y="3" width="1.6" height="1.6" fill="#b5b5b5"/><rect x="0" y="6" width="1.6" height="1.6" fill="#b5b5b5"/><rect x="0" y="9" width="1.6" height="1.6" fill="#b5b5b5"/><rect x="0" y="12" width="1.6" height="1.6" fill="#b5b5b5"/><rect x="0" y="15" width="1.6" height="1.6" fill="#b5b5b5"/></svg><svg style="left:12px;top:46px" width="16" height="16" viewBox="0 0 16 16"><path d="M1,15.5 V2.5 Q1,0.5 3,0.5 H8.6 Q11.6,0.5 11.6,3.5 V15.5 Z" fill="#fff" stroke="#8a8a8a" stroke-width="0.8"/><path d="M1.4,15.1 V2.5 Q1.4,0.9 3,0.9 H8.632 Q9.48,1.1 9.48,2.5 V15.1 Z" fill="#22ea7c"/><rect x="9.4" y="7.749999999999999" width="6.2" height="1.9" fill="#000"/><rect x="11.55" y="5.6" width="1.9" height="6.2" fill="#000"/></svg><svg style="left:36.5px;top:46px" width="16" height="16" viewBox="0 0 16 16"><path d="M1,15.5 V2.5 Q1,0.5 3,0.5 H8.6 Q11.6,0.5 11.6,3.5 V15.5 Z" fill="#fff" stroke="#8a8a8a" stroke-width="0.8"/><path d="M1.4,15.1 V2.5 Q1.4,0.9 3,0.9 H8.632 Q9.48,1.1 9.48,2.5 V15.1 Z" fill="#22ea7c"/><rect x="1.4" y="11.3" width="6.2" height="3.8" fill="#17b35e"/><rect x="9.200000000000001" y="7.749999999999999" width="6.2" height="1.9" fill="#000"/><rect x="11.350000000000001" y="5.6" width="1.9" height="6.2" fill="#000"/></svg><svg style="left:61px;top:46px" width="16" height="16" viewBox="0 0 16 16"><path d="M1.5,13.5 V4 Q1.5,3 2.5,3 H6 L7.5,4.5 H12 Q13,4.5 13,5.5 V8 H5 Z" fill="#22ea7c" stroke="#2a9a5a" stroke-width="0.6"/><path d="M1.5,14 L5,8.2 H15.5 L12,14 Z" fill="#fff" stroke="#777" stroke-width="0.9"/></svg><svg style="left:86px;top:46px" width="16" height="16" viewBox="0 0 16 16"><path d="M1.5,1 H13.5 Q14.5,1 14.5,2 V14.5 H3.5 L1.5,12.5 Z" fill="#fff" stroke="#555" stroke-width="1"/><path d="M3.5,1.5 H12.5 V5.5 Q12.5,7 11,7 H5 Q3.5,7 3.5,5.5 Z" fill="#22ea7c"/><rect x="4.2" y="9.3" width="6.8" height="5.2" rx="0.6" fill="#22ea7c"/><rect x="5.2" y="10.8" width="2" height="2.5" fill="#139a50"/></svg><svg style="left:110.5px;top:46px" width="16" height="16" viewBox="0 0 16 16"><path d="M1.5,1 H13.5 Q14.5,1 14.5,2 V14.5 H3.5 L1.5,12.5 Z" fill="#fff" stroke="#555" stroke-width="1"/><path d="M3.5,1.5 H12.5 V5.5 Q12.5,7 11,7 H5 Q3.5,7 3.5,5.5 Z" fill="#22ea7c"/><rect x="4.2" y="9.3" width="6.8" height="5.2" rx="0.6" fill="#22ea7c"/><rect x="5.2" y="10.8" width="2" height="2.5" fill="#139a50"/><line x1="5.5" y1="3.5" x2="13" y2="11.5" stroke="#111" stroke-width="1.4"/></svg><svg style="left:135px;top:46px" width="16" height="16" viewBox="0 0 16 16"><path d="M1.5,1 H13.5 Q14.5,1 14.5,2 V14.5 H3.5 L1.5,12.5 Z" fill="#fff" stroke="#555" stroke-width="1"/><path d="M3.5,1.5 H12.5 V5.5 Q12.5,7 11,7 H5 Q3.5,7 3.5,5.5 Z" fill="#22ea7c"/><rect x="4.2" y="9.3" width="6.8" height="5.2" rx="0.6" fill="#22ea7c"/><rect x="5.2" y="10.8" width="2" height="2.5" fill="#139a50"/><path d="M1.5,12.5 V1 H13.5" fill="none" stroke="#111" stroke-width="1.6"/></svg><svg style="left:159.5px;top:46px" width="16" height="16" viewBox="0 0 16 16"><rect x="3.5" y="0.8" width="7.5" height="5.5" rx="1" fill="#22ea7c"/><path d="M0.3,5.6 H14.3 V11.6 H0.3 Z" fill="#000"/><path d="M4,7.3 H10.6 L12,9.6 H2.6 Z" fill="#fff"/><rect x="2.2" y="11" width="10" height="4.2" rx="1.2" fill="#22ea7c"/></svg><svg style="left:183.5px;top:46px" width="16" height="16" viewBox="0 0 16 16"><path d="M1,15.5 V2.5 Q1,0.5 3,0.5 H8 Q11,0.5 11,3.5 V15.5 Z" fill="#fff" stroke="#8a8a8a" stroke-width="0.8"/><path d="M1.4,15.1 V2.5 Q1.4,0.9 3,0.9 H8.2 Q9.0,1.1 9.0,2.5 V15.1 Z" fill="#22ea7c"/><rect x="8.5" y="4.5" width="4" height="4" fill="#22ea7c"/><rect x="5.8" y="8" width="8.6" height="5" fill="#000"/><rect x="7.3" y="9.5" width="5.6" height="1.8" fill="#fff"/><rect x="7.5" y="12.6" width="5" height="2.2" fill="#22ea7c"/></svg><div class="r" style="left:205px;top:43px;width:1px;height:22px;background:#d6d6d6"></div><svg style="left:209px;top:45px" width="3" height="19" viewBox="0 0 3 19"><rect x="0" y="0" width="1.6" height="1.6" fill="#b5b5b5"/><rect x="0" y="3" width="1.6" height="1.6" fill="#b5b5b5"/><rect x="0" y="6" width="1.6" height="1.6" fill="#b5b5b5"/><rect x="0" y="9" width="1.6" height="1.6" fill="#b5b5b5"/><rect x="0" y="12" width="1.6" height="1.6" fill="#b5b5b5"/><rect x="0" y="15" width="1.6" height="1.6" fill="#b5b5b5"/></svg><svg style="left:216.5px;top:46px" width="16" height="16" viewBox="0 0 16 16"><path d="M5,2.3 L5,13 L7.5,10.8 L9.5,14.5 L11,13.8 L9.2,10.2 L12.5,9.8 Z" fill="#fff" stroke="#777" stroke-width="0.9" stroke-linejoin="round"/></svg><div class="r" style="left:239px;top:45px;width:1px;height:19px;background:#d6d6d6"></div><svg style="left:246.5px;top:46px" width="16" height="16" viewBox="0 0 16 16"><path d="M5,1.5 H13 Q15,1.5 15,3.5 V14 H5 Z" fill="#fff" stroke="#8a8a8a" stroke-width="0.8"/><path d="M1,2.5 H11 V15.3 H1 Z" fill="#22ea7c" stroke="#333" stroke-width="0.5"/><rect x="9" y="2" width="4.5" height="12.5" fill="#22ea7c"/><rect x="12" y="2" width="1.6" height="12.5" fill="#dff8e8"/><path d="M4,8.5 L7.5,6 L11,8.5 L7.5,11 Z" fill="#fff"/></svg><svg style="left:271px;top:46px" width="16" height="16" viewBox="0 0 16 16"><path d="M5,1.5 H13 Q15,1.5 15,3.5 V14 H5 Z" fill="#fafafa" stroke="#9a9a9a" stroke-width="0.8"/><path d="M1,2.5 H11 V15.3 H1 Z" fill="#c4c4c4" stroke="#8a8a8a" stroke-width="0.5"/><rect x="9" y="2" width="4.5" height="12.5" fill="#c9c9c9"/><rect x="12" y="2" width="1.6" height="12.5" fill="#eee"/><path d="M4,8.5 L7.5,6 L11,8.5 L7.5,11 Z" fill="#fff"/><rect x="7" y="4" width="1.3" height="11" fill="#fff"/></svg><div class="r" style="left:293px;top:45px;width:1px;height:19px;background:#d6d6d6"></div><svg style="left:299.5px;top:46px" width="16" height="16" viewBox="0 0 16 16"><path d="M3,1.5 H10 Q11.5,1.5 11.5,3 V7 M3,1.5 Q1.5,1.5 1.5,3 V14.5 H9" fill="none" stroke="#222" stroke-width="1.1" stroke-dasharray="2 1.6"/><path d="M11.8,6.5 V12.5 M10.3,8.8 L11.8,7 L13.3,8.8 M10,13 H13.6 L12.5,14.8 H11.1Z" fill="none" stroke="#333" stroke-width="0.9"/></svg><svg style="left:324.5px;top:46px" width="16" height="16" viewBox="0 0 16 16"><path d="M7,1 H12.5 Q14.5,1 14.5,3 V13.5 H7 Z" fill="#22ea7c" stroke="#7a7a7a" stroke-width="0.7"/><rect x="12" y="2" width="2" height="11" fill="#dff8e8"/><path d="M1,3 Q1,2 2,2 H8 Q10,2 10,4 V15.3 H1 Z" fill="#22ea7c" stroke="#333" stroke-width="0.6"/><rect x="7.5" y="3" width="2" height="12" fill="#fff"/></svg><svg style="left:349px;top:46px" width="16" height="16" viewBox="0 0 16 16"><path d="M7,1 H12.5 Q14.5,1 14.5,3 V13.5 H7 Z" fill="#22ea7c" stroke="#7a7a7a" stroke-width="0.7"/><rect x="12" y="2" width="2" height="11" fill="#dff8e8"/><path d="M1,3 Q1,2 2,2 H8 Q10,2 10,4 V15.3 H1 Z" fill="#22ea7c" stroke="#333" stroke-width="0.6"/><rect x="6.5" y="3" width="2" height="12" fill="#fff"/><rect x="6.800000000000001" y="7.9" width="6" height="1.8" fill="#000"/><rect x="8.9" y="5.800000000000001" width="1.8" height="6" fill="#000"/></svg><div class="r" style="left:370px;top:43px;width:1px;height:22px;background:#d6d6d6"></div><svg style="left:374px;top:45px" width="3" height="19" viewBox="0 0 3 19"><rect x="0" y="0" width="1.6" height="1.6" fill="#b5b5b5"/><rect x="0" y="3" width="1.6" height="1.6" fill="#b5b5b5"/><rect x="0" y="6" width="1.6" height="1.6" fill="#b5b5b5"/><rect x="0" y="9" width="1.6" height="1.6" fill="#b5b5b5"/><rect x="0" y="12" width="1.6" height="1.6" fill="#b5b5b5"/><rect x="0" y="15" width="1.6" height="1.6" fill="#b5b5b5"/></svg><div class="r" style="left:379px;top:43.5px;width:24px;height:21.5px;background:#cde5f8;border:1px solid #a9d0f0;border-radius:2px"></div><svg style="left:383.5px;top:47.5px" width="16" height="16" viewBox="0 0 16 16"><path d="M4.5,0.5 V15.5 M8,0.5 V15.5 M11.5,0.5 V15.5 M0.5,4.5 H15.5 M0.5,8 H15.5 M0.5,11.5 H15.5" stroke="#333a44" stroke-width="1.3"/></svg><svg style="left:407.5px;top:46px" width="16" height="16" viewBox="0 0 16 16"><path d="M2,1 V11.5" stroke="#222" stroke-width="1.4" stroke-dasharray="2.2 1.6"/><path d="M4,14.5 H14.5" stroke="#222" stroke-width="1.4" stroke-dasharray="2.2 1.6"/><circle cx="2" cy="14.5" r="1.4" fill="#222"/><path d="M4.2,11.5 L12.6,2.3 L14.6,4.2 L6,13.2 L3.6,13.8 Z" fill="#22ea7c" stroke="#333" stroke-width="0.8"/></svg><div class="r" style="left:429.5px;top:45px;width:1px;height:19px;background:#d6d6d6"></div><svg style="left:436.5px;top:46px" width="16" height="16" viewBox="0 0 16 16"><path d="M1.6,11.8 L9.6,2.6 L11.6,4.4 L3.4,13.2 L1,14 Z" fill="#22ea7c" stroke="#333" stroke-width="0.8"/><path d="M9,7.6 A4.4,4.4 0 1 1 6.3,10.5" fill="none" stroke="#444" stroke-width="1.1"/><polygon points="8.2,6 10.8,7.2 8.4,9.2" fill="#222"/></svg><svg style="left:460.5px;top:46px" width="16" height="16" viewBox="0 0 16 16"><circle cx="7.5" cy="7.5" r="2.6" fill="#fafafa" stroke="#4a4a4a" stroke-width="1.0"/><line x1="9.372" y1="9.372" x2="12.772" y2="12.772" stroke="#1e1e1e" stroke-width="1.7" stroke-linecap="round"/><polygon points="5.8,3.46 10.2,3.46 8,-0.060000000000000275" fill="#2ca05a"/><polygon points="5.8,12.540000000000001 10.2,12.540000000000001 8,16.060000000000002" fill="#2ca05a"/><polygon points="3.16,5.6 3.16,10.0 -0.3600000000000003,7.8" fill="#2ca05a"/><polygon points="12.84,5.6 12.84,10.0 16.36,7.8" fill="#2ca05a"/></svg><svg style="left:485px;top:46px" width="16" height="16" viewBox="0 0 16 16"><circle cx="7.5" cy="7.5" r="2.6" fill="#fafafa" stroke="#4a4a4a" stroke-width="1.0"/><line x1="9.372" y1="9.372" x2="12.772" y2="12.772" stroke="#1e1e1e" stroke-width="1.7" stroke-linecap="round"/><polygon points="5.8,0.23999999999999977 10.2,0.23999999999999977 8,3.7600000000000002" fill="#2ca05a"/><polygon points="5.8,15.959999999999999 10.2,15.959999999999999 8,12.44" fill="#2ca05a"/><polygon points="0.23999999999999977,5.6 0.23999999999999977,10.0 3.7600000000000002,7.8" fill="#2ca05a"/><polygon points="15.959999999999999,5.6 15.959999999999999,10.0 12.44,7.8" fill="#2ca05a"/></svg><svg style="left:509.5px;top:46px" width="16" height="16" viewBox="0 0 16 16"><path d="M2,2 L14,14 M14,2 L2,14" stroke="#333" stroke-width="0.7"/><circle cx="7.5" cy="7.5" r="2.6" fill="#fafafa" stroke="#4a4a4a" stroke-width="1.0"/><line x1="9.372" y1="9.372" x2="12.772" y2="12.772" stroke="#1e1e1e" stroke-width="1.7" stroke-linecap="round"/><polygon points="0.5,0.5 4.5,1 1,4.5" fill="#2ca05a"/><polygon points="15.5,0.5 11.5,1 15,4.5" fill="#2ca05a"/><polygon points="0.5,15.5 1,11.5 4.5,15" fill="#2ca05a"/></svg><svg style="left:534.5px;top:46px" width="16" height="16" viewBox="0 0 16 16"><path d="M2,12 A5,5 0 0 1 11,8.5 A5,5 0 0 1 10,15" fill="none" stroke="#555" stroke-width="1.1"/><circle cx="2" cy="12.2" r="1" fill="#222"/><circle cx="9.6" cy="3.8" r="2.3" fill="#fafafa" stroke="#4a4a4a" stroke-width="1.0"/><line x1="11.256" y1="5.4559999999999995" x2="14.656" y2="8.856" stroke="#1e1e1e" stroke-width="1.7" stroke-linecap="round"/></svg><svg style="left:558px;top:46px" width="16" height="16" viewBox="0 0 16 16"><rect x="1" y="3" width="12" height="12" rx="1" fill="#fcfcfc" stroke="#ddd" stroke-width="0.8"/><circle cx="7.2" cy="8.2" r="2.5" fill="#fafafa" stroke="#4a4a4a" stroke-width="1.0"/><line x1="9.0" y1="10.0" x2="12.4" y2="13.4" stroke="#1e1e1e" stroke-width="1.7" stroke-linecap="round"/><path d="M13,0.5 V5 M10.7,2.8 H15.3" stroke="#555" stroke-width="1"/></svg><svg style="left:583px;top:46px" width="16" height="16" viewBox="0 0 16 16"><path d="M7,4 V13.5 M2.2,9 H12" stroke="#22c46a" stroke-width="2.6"/><polygon points="4.4,5.28 9.6,5.28 7,1.12" fill="#22c46a"/><polygon points="4.4,11.92 9.6,11.92 7,16.08" fill="#22c46a"/><polygon points="3.58,6.4 3.58,11.6 -0.5800000000000001,9" fill="#22c46a"/><polygon points="10.52,6.4 10.52,11.6 14.68,9" fill="#22c46a"/><circle cx="10" cy="3.6" r="2.4" fill="#fafafa" stroke="#4a4a4a" stroke-width="1.0"/><line x1="11.728" y1="5.328" x2="15.128" y2="8.728" stroke="#1e1e1e" stroke-width="1.7" stroke-linecap="round"/></svg>
<svg style="left:4px;top:70px" width="3" height="17" viewBox="0 0 3 17"><rect x="0" y="0" width="1.6" height="1.6" fill="#b5b5b5"/><rect x="0" y="3" width="1.6" height="1.6" fill="#b5b5b5"/><rect x="0" y="6" width="1.6" height="1.6" fill="#b5b5b5"/><rect x="0" y="9" width="1.6" height="1.6" fill="#b5b5b5"/><rect x="0" y="12" width="1.6" height="1.6" fill="#b5b5b5"/></svg><div class="r" style="left:9.5px;top:70px;width:100px;height:15.6px;background:#fff;border:1px solid #e3e3e3;border-bottom-color:#cfcfcf"></div><div class="r" style="left:12.8px;top:73.1px;width:12.2px;height:9.3px;background:#000;border:1px solid #2a2a2a"></div><div class="r" style="left:14.3px;top:74.6px;width:9.2px;height:6.3px;background:#000;border:1px solid #3a3a3a"></div><div class="t" style="left:27.0px;top:74px;font-size:9.4px;line-height:10.500px;color:#2a2a2a;transform:scaleX(0.8725);transform-origin:0 0;">wie Ebene</div><svg style="left:100px;top:77.2px" width="9" height="6" viewBox="-1 -1 9 6"><path d="M0,0 L3.5,4 L7,0" fill="none" stroke="#555" stroke-width="1"/></svg><div class="r" style="left:111px;top:70px;width:87.5px;height:15.6px;background:#fff;border:1px solid #e3e3e3;border-bottom-color:#cfcfcf"></div><div class="r" style="left:114.5px;top:77.3px;width:12px;height:0.9px;background:#777"></div><div class="t" style="left:129.0px;top:74px;font-size:9.4px;line-height:10.500px;color:#2a2a2a;transform:scaleX(0.8725);transform-origin:0 0;">wie Ebene</div><svg style="left:189px;top:77.2px" width="9" height="6" viewBox="-1 -1 9 6"><path d="M0,0 L3.5,4 L7,0" fill="none" stroke="#555" stroke-width="1"/></svg><div class="r" style="left:199.8px;top:70px;width:111px;height:15.6px;background:#fff;border:1px solid #e3e3e3;border-bottom-color:#cfcfcf"></div><div class="r" style="left:203.5px;top:77.3px;width:12px;height:0.9px;background:#777"></div><div class="t" style="left:217.8px;top:74px;font-size:9.4px;line-height:10.500px;color:#2a2a2a;transform:scaleX(0.8725);transform-origin:0 0;">wie Ebene</div><svg style="left:301.5px;top:77.2px" width="9" height="6" viewBox="-1 -1 9 6"><path d="M0,0 L3.5,4 L7,0" fill="none" stroke="#555" stroke-width="1"/></svg><div class="r" style="left:314px;top:69px;width:1px;height:18px;background:#d6d6d6"></div><svg style="left:317px;top:71px" width="3" height="16" viewBox="0 0 3 16"><rect x="0" y="0" width="1.6" height="1.6" fill="#b5b5b5"/><rect x="0" y="3" width="1.6" height="1.6" fill="#b5b5b5"/><rect x="0" y="6" width="1.6" height="1.6" fill="#b5b5b5"/><rect x="0" y="9" width="1.6" height="1.6" fill="#b5b5b5"/><rect x="0" y="12" width="1.6" height="1.6" fill="#b5b5b5"/></svg><div class="t" style="left:321.7px;top:74px;font-size:9.4px;line-height:10.500px;color:#2a2a2a;transform:scaleX(0.8691);transform-origin:0 0;">Radius:</div><div class="r" style="left:355.8px;top:70.6px;width:75px;height:15px;background:#fff;border-bottom:1px solid #b8b8b8"></div><div class="t" style="left:358.0px;top:75px;font-size:8.9px;line-height:9.941px;color:#2a2a2a;">1.0</div><div class="r" style="left:436.4px;top:70px;width:1px;height:17px;background:#cfcfcf"></div>
<svg style="left:4px;top:91px" width="22" height="3" viewBox="0 0 22 3"><rect x="0" y="0" width="1.6" height="1.6" fill="#b5b5b5"/><rect x="3" y="0" width="1.6" height="1.6" fill="#b5b5b5"/><rect x="6" y="0" width="1.6" height="1.6" fill="#b5b5b5"/><rect x="9" y="0" width="1.6" height="1.6" fill="#b5b5b5"/><rect x="12" y="0" width="1.6" height="1.6" fill="#b5b5b5"/><rect x="15" y="0" width="1.6" height="1.6" fill="#b5b5b5"/><rect x="18" y="0" width="1.6" height="1.6" fill="#b5b5b5"/></svg><svg style="left:6px;top:100px" width="18" height="18" viewBox="0 0 18 18"><line x1="2" y1="1" x2="15" y2="14" stroke="#555" stroke-width="1.1"/><polygon points="13.3,13.8 17.7,13.8 15.5,16.2" fill="#111"/></svg><svg style="left:6px;top:123px" width="18" height="18" viewBox="0 0 18 18"><circle cx="8" cy="8.5" r="6.2" fill="none" stroke="#555" stroke-width="1.1"/><polygon points="13.3,14.3 17.7,14.3 15.5,16.7" fill="#111"/></svg><svg style="left:6px;top:147px" width="18" height="18" viewBox="0 0 18 18"><path d="M1.3,2.9 C2.5,0.6 6,0.6 6.3,3.5 C6.5,6.5 4,13 7,14.2 C9.3,15 10.5,4.5 12.2,2.3 C13.8,0.6 15.3,5 15.4,13.5" fill="none" stroke="#555" stroke-width="1.1"/><polygon points="13.3,14.100000000000001 17.7,14.100000000000001 15.5,16.5" fill="#111"/></svg><svg style="left:6px;top:171px" width="18" height="18" viewBox="0 0 18 18"><ellipse cx="8" cy="8.5" rx="7" ry="4.6" transform="rotate(-50 8 8.5)" fill="none" stroke="#555" stroke-width="1.1"/><polygon points="13.3,14.3 17.7,14.3 15.5,16.7" fill="#111"/></svg><svg style="left:6px;top:194px" width="18" height="18" viewBox="0 0 18 18"><path d="M4.1,4.4 Q1.2,6 1.2,8.3 Q1.5,11.4 4,11.4 H14.7" fill="none" stroke="#555" stroke-width="1.1"/><polygon points="13.3,14.200000000000001 17.7,14.200000000000001 15.5,16.6" fill="#111"/></svg><svg style="left:6px;top:217px" width="19" height="19" viewBox="0 0 19 19"><rect x="2" y="3" width="12" height="6.5" fill="#fff" stroke="#555" stroke-width="1"/><path d="M3,10 L9,16 M3,10 L3,14.5 M3,10 L7.5,10" stroke="#555" stroke-width="1" fill="none"/><circle cx="2.5" cy="9.5" r="1.6" fill="#22ea7c" stroke="#1a7a44" stroke-width="0.6"/><polygon points="13.8,16.3 18.2,16.3 16,18.7" fill="#111"/></svg><svg style="left:6px;top:240px" width="18" height="19" viewBox="0 0 18 19"><text x="8.5" y="7" font-size="7.5" font-family="Liberation Sans" font-weight="bold" text-anchor="middle" fill="#333">A</text><path d="M1.5,5.5 V14 M15.5,5.5 V14" stroke="#555" stroke-width="1"/><path d="M2,10 H15" stroke="#2a8a55" stroke-width="1"/><polygon points="2,10 5,8.3 5,11.7" fill="#17a857"/><polygon points="15,10 12,8.3 12,11.7" fill="#17a857"/><polygon points="13.3,15.8 17.7,15.8 15.5,18.2" fill="#111"/></svg><svg style="left:6px;top:265px" width="18" height="18" viewBox="0 0 18 18"><path d="M13.5,7 A6,6 0 1 1 9.5,2.3" fill="none" stroke="#555" stroke-width="1.1"/><polygon points="9,0.5 12,2.5 9,4.5" fill="#333"/><path d="M8,5 V12 M4.5,8.5 H11.5" stroke="#17a857" stroke-width="2.3"/><polygon points="13.8,15.3 18.2,15.3 16,17.7" fill="#111"/></svg><svg style="left:6px;top:288px" width="18" height="18" viewBox="0 0 18 18"><path d="M1.5,3 V8 M14.5,3 V8 M2,5.5 H14" stroke="#555" stroke-width="1"/><rect x="1.5" y="9" width="13" height="6.5" fill="#22ea7c" stroke="#1b8c4c" stroke-width="0.7"/><path d="M4,10 V12 M6.5,10 V12 M9,10 V12 M11.5,10 V12" stroke="#1b8c4c" stroke-width="0.8"/><polygon points="13.3,15.8 17.7,15.8 15.5,18.2" fill="#111"/></svg><svg style="left:4px;top:313px" width="22" height="3" viewBox="0 0 22 3"><rect x="0" y="0" width="1.6" height="1.6" fill="#b5b5b5"/><rect x="3" y="0" width="1.6" height="1.6" fill="#b5b5b5"/><rect x="6" y="0" width="1.6" height="1.6" fill="#b5b5b5"/><rect x="9" y="0" width="1.6" height="1.6" fill="#b5b5b5"/><rect x="12" y="0" width="1.6" height="1.6" fill="#b5b5b5"/><rect x="15" y="0" width="1.6" height="1.6" fill="#b5b5b5"/><rect x="18" y="0" width="1.6" height="1.6" fill="#b5b5b5"/></svg><svg style="left:6px;top:321px" width="18" height="17" viewBox="0 0 18 17"><text x="6" y="15" font-size="15.5" font-family="Liberation Sans" text-anchor="middle" fill="#111">A</text><path d="M13,1.5 H16 M14.5,1.5 V15 M13,15 H16" stroke="#333" stroke-width="0.9"/></svg><svg style="left:6px;top:345px" width="18" height="17" viewBox="0 0 18 17"><rect x="1.5" y="1.5" width="14" height="13.5" fill="#fff" stroke="#666" stroke-width="0.9"/><path d="M11.5,1.5 L15.3,5.3 M6.5,1.5 L15.3,10.3 M1.6,1.6 L15,15 M1.5,6.5 L9.8,14.8 M1.5,11.5 L4.8,14.8" stroke="#777" stroke-width="1"/></svg><svg style="left:6px;top:368px" width="18" height="16" viewBox="0 0 18 16"><path d="M1.5,5 H5 L6,3 H10 L11,5 H14.5 V12.5 H1.5 Z" fill="#fff" stroke="#444" stroke-width="0.9"/><circle cx="8" cy="8.6" r="3" fill="#22ea7c" stroke="#1a7a44" stroke-width="0.6"/></svg><svg style="left:6px;top:392px" width="18" height="16" viewBox="0 0 18 16"><rect x="2.5" y="2.5" width="11.5" height="7" fill="#fff" stroke="#444" stroke-width="1"/><circle cx="3.8" cy="10.8" r="3" fill="#fff" stroke="#444" stroke-width="0.9"/><circle cx="14" cy="10.5" r="1.9" fill="#22ea7c" stroke="#1a7a44" stroke-width="0.6"/></svg><svg style="left:6px;top:416px" width="18" height="16" viewBox="0 0 18 16"><circle cx="8" cy="8.5" r="2" fill="#22ea7c" stroke="#1a7a44" stroke-width="0.7"/></svg>
<div class="r" style="left:0px;top:0px;width:1010px;height:1px;background:#c4c4c4"></div>
<div class="r" style="left:0px;top:0px;width:1px;height:592px;background:#bdbdbd"></div>
<div class="r" style="left:1009px;top:0px;width:1px;height:592px;background:#bdbdbd"></div>
</body></html>
